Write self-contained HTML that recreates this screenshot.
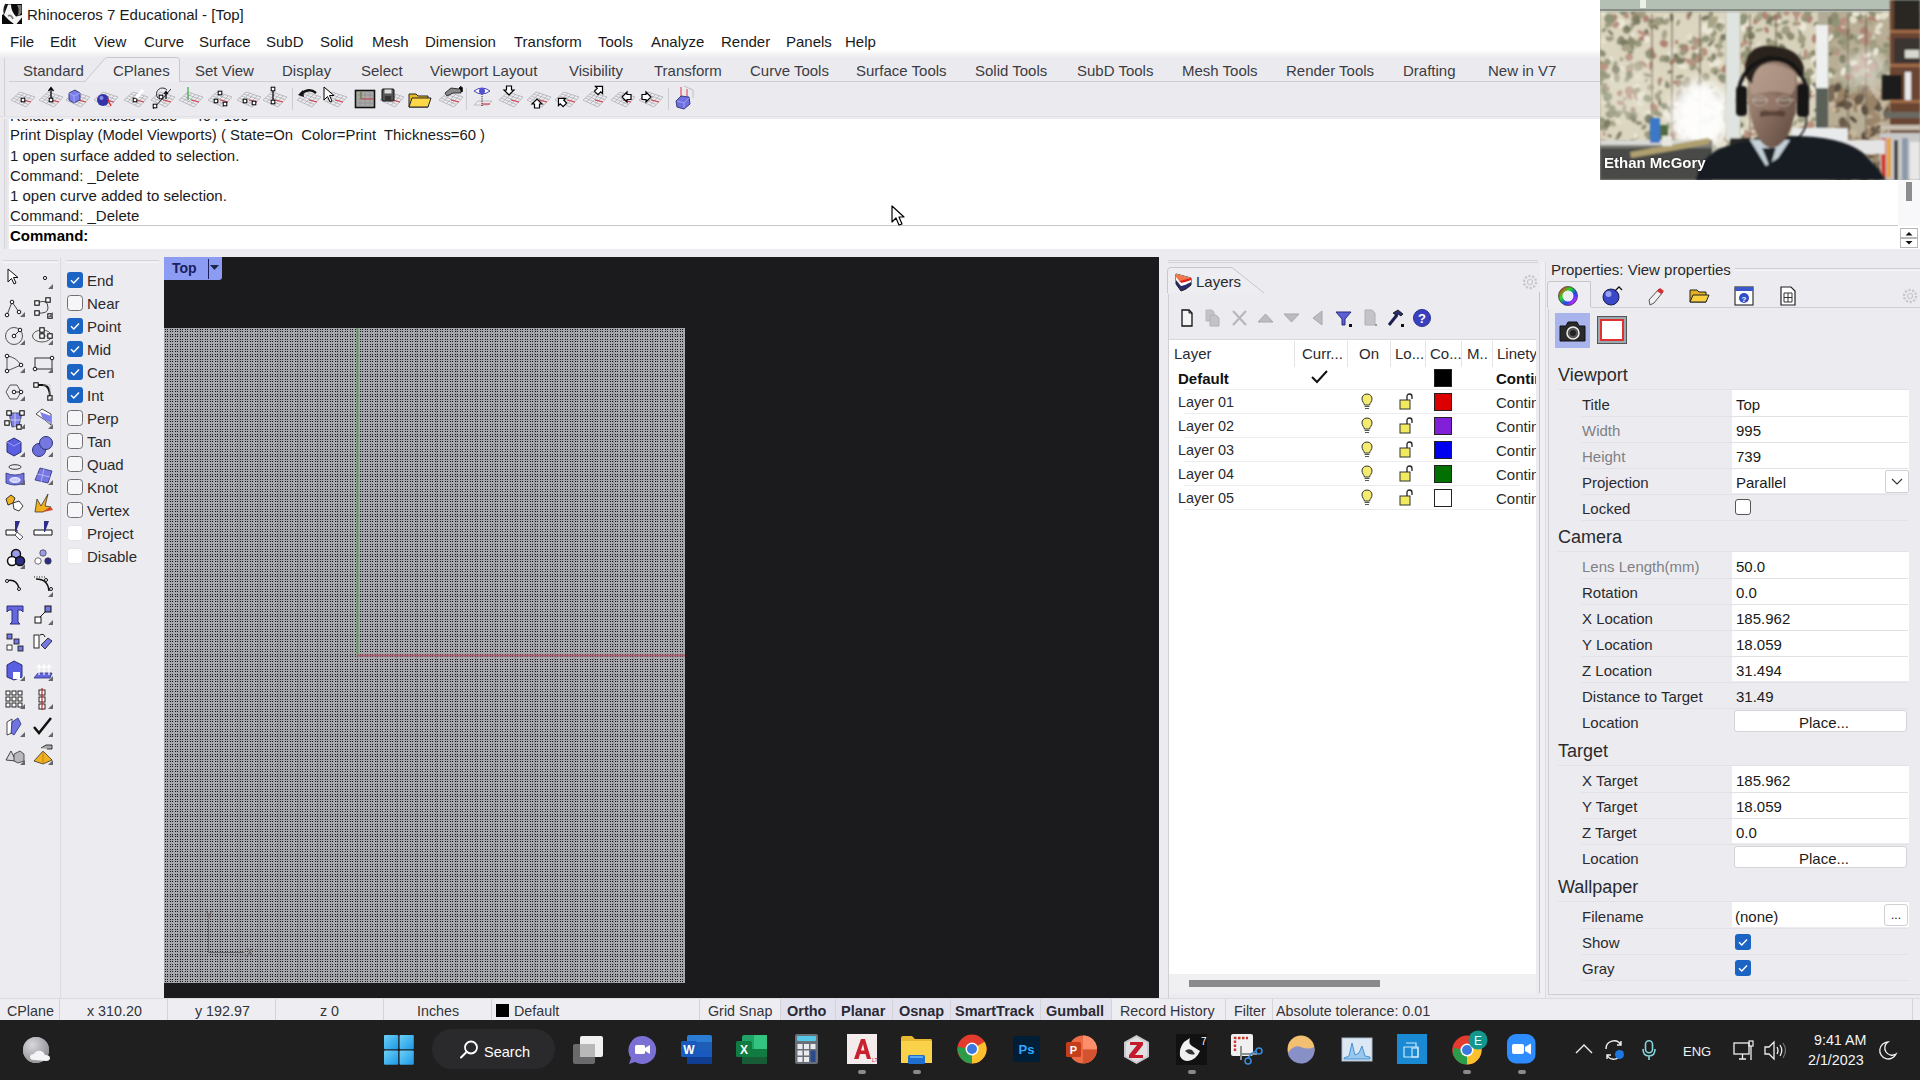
<!DOCTYPE html>
<html><head><meta charset="utf-8">
<style>
*{margin:0;padding:0;box-sizing:border-box}
html,body{width:1920px;height:1080px;overflow:hidden;background:#ececf0;font-family:"Liberation Sans",sans-serif;color:#1a1a1a}
.a{position:absolute}
.t{position:absolute;white-space:pre;line-height:1}
svg{position:absolute;overflow:visible}

</style></head><body>
<div class="a" style="left:0px;top:0px;width:1920px;height:54px;background:#ffffff"></div>
<svg style="left:2px;top:4px" width="20" height="20" viewBox="0 0 20 20"><rect x="0" y="0" width="20" height="20" fill="#0a0a0a"/><path d="M0 0H4Q1 4 2 10L0 11Z" fill="#fff"/><path d="M4 0Q1.5 4 2.5 10" stroke="#222" stroke-width="1.6" fill="none"/><path d="M2 11L6 0.5H9Q9 7 14 12.5L20 11V13.5L14.5 20H12Q6 16 2 11Z" fill="#f4f4f4"/><path d="M6 12Q9 10 11 15" stroke="#777" stroke-width="1.6" fill="none"/><path d="M15 1H19.5V9Q17 12 15.5 12Q18 6 15 1Z" fill="#7a7a7a"/></svg>
<div class="t" style="left:27px;top:7.3px;font-size:15px;color:#1a1a1a">Rhinoceros 7 Educational - [Top]</div>
<div class="t" style="left:10px;top:34.3px;font-size:15px;color:#1a1a1a">File</div>
<div class="t" style="left:50px;top:34.3px;font-size:15px;color:#1a1a1a">Edit</div>
<div class="t" style="left:94px;top:34.3px;font-size:15px;color:#1a1a1a">View</div>
<div class="t" style="left:144px;top:34.3px;font-size:15px;color:#1a1a1a">Curve</div>
<div class="t" style="left:199px;top:34.3px;font-size:15px;color:#1a1a1a">Surface</div>
<div class="t" style="left:266px;top:34.3px;font-size:15px;color:#1a1a1a">SubD</div>
<div class="t" style="left:320px;top:34.3px;font-size:15px;color:#1a1a1a">Solid</div>
<div class="t" style="left:372px;top:34.3px;font-size:15px;color:#1a1a1a">Mesh</div>
<div class="t" style="left:425px;top:34.3px;font-size:15px;color:#1a1a1a">Dimension</div>
<div class="t" style="left:514px;top:34.3px;font-size:15px;color:#1a1a1a">Transform</div>
<div class="t" style="left:598px;top:34.3px;font-size:15px;color:#1a1a1a">Tools</div>
<div class="t" style="left:651px;top:34.3px;font-size:15px;color:#1a1a1a">Analyze</div>
<div class="t" style="left:721px;top:34.3px;font-size:15px;color:#1a1a1a">Render</div>
<div class="t" style="left:786px;top:34.3px;font-size:15px;color:#1a1a1a">Panels</div>
<div class="t" style="left:845px;top:34.3px;font-size:15px;color:#1a1a1a">Help</div>
<div class="a" style="left:0px;top:54px;width:1920px;height:64px;background:#ebebef"></div>
<div class="a" style="left:0px;top:50px;width:1920px;height:8px;background:linear-gradient(#ffffff,#f6f6f8 40%,#ebebef)"></div>
<div class="a" style="left:0px;top:116px;width:1920px;height:2px;background:#e2e2e6"></div>
<div class="a" style="left:4px;top:58px;width:1px;height:58px;background:#d0d0d4"></div>
<div class="a" style="left:9px;top:81px;width:76px;height:1px;background:#cfcfd3"></div>
<div class="a" style="left:179px;top:81px;width:1741px;height:1px;background:#cfcfd3"></div>
<svg style="left:84px;top:57px" width="97" height="26" viewBox="0 0 97 26"><path d="M0.5 25 L21 1.5 Q22 0.5 24 0.5 L92 0.5 Q95 0.5 95.5 3 L95.5 25" fill="#eeeef2" stroke="#c9c9cd" stroke-width="1"/></svg>
<div class="t" style="left:23px;top:63.3px;font-size:15px;color:#3c3c44">Standard</div>
<div class="t" style="left:113px;top:63.3px;font-size:15px;color:#3c3c44">CPlanes</div>
<div class="t" style="left:195px;top:63.3px;font-size:15px;color:#3c3c44">Set View</div>
<div class="t" style="left:282px;top:63.3px;font-size:15px;color:#3c3c44">Display</div>
<div class="t" style="left:361px;top:63.3px;font-size:15px;color:#3c3c44">Select</div>
<div class="t" style="left:430px;top:63.3px;font-size:15px;color:#3c3c44">Viewport Layout</div>
<div class="t" style="left:569px;top:63.3px;font-size:15px;color:#3c3c44">Visibility</div>
<div class="t" style="left:654px;top:63.3px;font-size:15px;color:#3c3c44">Transform</div>
<div class="t" style="left:750px;top:63.3px;font-size:15px;color:#3c3c44">Curve Tools</div>
<div class="t" style="left:856px;top:63.3px;font-size:15px;color:#3c3c44">Surface Tools</div>
<div class="t" style="left:975px;top:63.3px;font-size:15px;color:#3c3c44">Solid Tools</div>
<div class="t" style="left:1077px;top:63.3px;font-size:15px;color:#3c3c44">SubD Tools</div>
<div class="t" style="left:1182px;top:63.3px;font-size:15px;color:#3c3c44">Mesh Tools</div>
<div class="t" style="left:1286px;top:63.3px;font-size:15px;color:#3c3c44">Render Tools</div>
<div class="t" style="left:1403px;top:63.3px;font-size:15px;color:#3c3c44">Drafting</div>
<div class="t" style="left:1488px;top:63.3px;font-size:15px;color:#3c3c44">New in V7</div>
<svg style="left:9px;top:84px" width="28" height="28" viewBox="0 0 28 28"><path d="M2.0 16.0L17.0 23.0M2.0 16.0L11.0 8.0M4.2 14.0L19.2 20.5M5.8 17.8L14.8 9.2M6.5 12.0L21.5 18.0M9.5 19.5L18.5 10.5M8.8 10.0L23.8 15.5M13.2 21.2L22.2 11.8M11.0 8.0L26.0 13.0M17.0 23.0L26.0 13.0" stroke="#b0b0b4" stroke-width="0.8" fill="none"/><path d="M14 16 L22 18" stroke="#d23a4a" stroke-width="1.2"/><rect x="12.2" y="14.2" width="3.6" height="3.6" fill="#fff" stroke="#000" stroke-width="1"/></svg>
<svg style="left:37px;top:84px" width="28" height="28" viewBox="0 0 28 28"><path d="M2.0 16.0L17.0 23.0M2.0 16.0L11.0 8.0M4.2 14.0L19.2 20.5M5.8 17.8L14.8 9.2M6.5 12.0L21.5 18.0M9.5 19.5L18.5 10.5M8.8 10.0L23.8 15.5M13.2 21.2L22.2 11.8M11.0 8.0L26.0 13.0M17.0 23.0L26.0 13.0" stroke="#b0b0b4" stroke-width="0.8" fill="none"/><path d="M14 16 L22 18" stroke="#d23a4a" stroke-width="1.2"/><rect x="12.2" y="14.2" width="3.6" height="3.6" fill="#fff" stroke="#000" stroke-width="1"/><path d="M14 14V4M11.5 7L14 3.5L16.5 7" stroke="#000" stroke-width="1.3" fill="none"/></svg>
<svg style="left:64px;top:84px" width="28" height="28" viewBox="0 0 28 28"><path d="M2.0 16.0L17.0 23.0M2.0 16.0L11.0 8.0M4.2 14.0L19.2 20.5M5.8 17.8L14.8 9.2M6.5 12.0L21.5 18.0M9.5 19.5L18.5 10.5M8.8 10.0L23.8 15.5M13.2 21.2L22.2 11.8M11.0 8.0L26.0 13.0M17.0 23.0L26.0 13.0" stroke="#b0b0b4" stroke-width="0.8" fill="none"/><path d="M14 16 L22 18" stroke="#d23a4a" stroke-width="1.2"/><path d="M5 9L11 6L16 9L16 16L10 19L5 16Z" fill="#7a7ee8" stroke="#3a3c80" stroke-width="1"/><path d="M5 9L10 12L16 9M10 12V19" stroke="#b0b4ff" stroke-width="0.8" fill="none"/></svg>
<svg style="left:92px;top:84px" width="28" height="28" viewBox="0 0 28 28"><path d="M2.0 16.0L17.0 23.0M2.0 16.0L11.0 8.0M4.2 14.0L19.2 20.5M5.8 17.8L14.8 9.2M6.5 12.0L21.5 18.0M9.5 19.5L18.5 10.5M8.8 10.0L23.8 15.5M13.2 21.2L22.2 11.8M11.0 8.0L26.0 13.0M17.0 23.0L26.0 13.0" stroke="#b0b0b4" stroke-width="0.8" fill="none"/><path d="M14 16 L22 18" stroke="#d23a4a" stroke-width="1.2"/><circle cx="11" cy="16" r="6" fill="#3434a8"/><circle cx="9.5" cy="14" r="2" fill="#8a8ae8"/><path d="M15 14 L19 22" stroke="#d22" stroke-width="1.2"/></svg>
<svg style="left:122px;top:84px" width="28" height="28" viewBox="0 0 28 28"><path d="M2.0 16.0L17.0 23.0M2.0 16.0L11.0 8.0M4.2 14.0L19.2 20.5M5.8 17.8L14.8 9.2M6.5 12.0L21.5 18.0M9.5 19.5L18.5 10.5M8.8 10.0L23.8 15.5M13.2 21.2L22.2 11.8M11.0 8.0L26.0 13.0M17.0 23.0L26.0 13.0" stroke="#b0b0b4" stroke-width="0.8" fill="none"/><path d="M14 16 L22 18" stroke="#d23a4a" stroke-width="1.2"/><rect x="11.2" y="14.2" width="3.6" height="3.6" fill="#fff" stroke="#000" stroke-width="1"/><path d="M14 14 L21 6" stroke="#fff" stroke-width="3"/></svg>
<svg style="left:149px;top:84px" width="28" height="28" viewBox="0 0 28 28"><path d="M2.0 16.0L17.0 23.0M2.0 16.0L11.0 8.0M4.2 14.0L19.2 20.5M5.8 17.8L14.8 9.2M6.5 12.0L21.5 18.0M9.5 19.5L18.5 10.5M8.8 10.0L23.8 15.5M13.2 21.2L22.2 11.8M11.0 8.0L26.0 13.0M17.0 23.0L26.0 13.0" stroke="#b0b0b4" stroke-width="0.8" fill="none"/><path d="M14 16 L22 18" stroke="#d23a4a" stroke-width="1.2"/><path d="M9 14 A6 6 0 0 1 18 6" stroke="#333" stroke-width="1" fill="none"/><path d="M4 25L22 5" stroke="#333" stroke-width="1"/><rect x="4.2" y="20.2" width="3.6" height="3.6" fill="#fff" stroke="#000" stroke-width="1"/><rect x="10.2" y="11.2" width="3.6" height="3.6" fill="#fff" stroke="#000" stroke-width="1"/><path d="M17 15V8M15 10L17 7.5L19 10" stroke="#000" stroke-width="1.2" fill="none"/></svg>
<svg style="left:177px;top:84px" width="28" height="28" viewBox="0 0 28 28"><path d="M2.0 16.0L17.0 23.0M2.0 16.0L11.0 8.0M4.2 14.0L19.2 20.5M5.8 17.8L14.8 9.2M6.5 12.0L21.5 18.0M9.5 19.5L18.5 10.5M8.8 10.0L23.8 15.5M13.2 21.2L22.2 11.8M11.0 8.0L26.0 13.0M17.0 23.0L26.0 13.0" stroke="#b0b0b4" stroke-width="0.8" fill="none"/><path d="M14 16 L22 18" stroke="#d23a4a" stroke-width="1.2"/><path d="M11 3V16" stroke="#3aa83a" stroke-width="1.2"/></svg>
<svg style="left:206px;top:84px" width="28" height="28" viewBox="0 0 28 28"><path d="M2.0 16.0L17.0 23.0M2.0 16.0L11.0 8.0M4.2 14.0L19.2 20.5M5.8 17.8L14.8 9.2M6.5 12.0L21.5 18.0M9.5 19.5L18.5 10.5M8.8 10.0L23.8 15.5M13.2 21.2L22.2 11.8M11.0 8.0L26.0 13.0M17.0 23.0L26.0 13.0" stroke="#b0b0b4" stroke-width="0.8" fill="none"/><path d="M14 16 L22 18" stroke="#d23a4a" stroke-width="1.2"/><rect x="12.2" y="7.2" width="3.6" height="3.6" fill="#fff" stroke="#000" stroke-width="1"/><rect x="8.2" y="15.2" width="3.6" height="3.6" fill="#fff" stroke="#000" stroke-width="1"/><rect x="17.2" y="18.2" width="3.6" height="3.6" fill="#fff" stroke="#000" stroke-width="1"/></svg>
<svg style="left:235px;top:84px" width="28" height="28" viewBox="0 0 28 28"><path d="M2.0 16.0L17.0 23.0M2.0 16.0L11.0 8.0M4.2 14.0L19.2 20.5M5.8 17.8L14.8 9.2M6.5 12.0L21.5 18.0M9.5 19.5L18.5 10.5M8.8 10.0L23.8 15.5M13.2 21.2L22.2 11.8M11.0 8.0L26.0 13.0M17.0 23.0L26.0 13.0" stroke="#b0b0b4" stroke-width="0.8" fill="none"/><path d="M14 16 L22 18" stroke="#d23a4a" stroke-width="1.2"/><rect x="8.2" y="15.2" width="3.6" height="3.6" fill="#fff" stroke="#000" stroke-width="1"/><rect x="17.2" y="17.2" width="3.6" height="3.6" fill="#fff" stroke="#000" stroke-width="1"/></svg>
<svg style="left:261px;top:84px" width="28" height="28" viewBox="0 0 28 28"><path d="M2.0 16.0L17.0 23.0M2.0 16.0L11.0 8.0M4.2 14.0L19.2 20.5M5.8 17.8L14.8 9.2M6.5 12.0L21.5 18.0M9.5 19.5L18.5 10.5M8.8 10.0L23.8 15.5M13.2 21.2L22.2 11.8M11.0 8.0L26.0 13.0M17.0 23.0L26.0 13.0" stroke="#b0b0b4" stroke-width="0.8" fill="none"/><path d="M14 16 L22 18" stroke="#d23a4a" stroke-width="1.2"/><rect x="10.2" y="3.2" width="3.6" height="3.6" fill="#fff" stroke="#000" stroke-width="1"/><rect x="10.2" y="16.2" width="3.6" height="3.6" fill="#fff" stroke="#000" stroke-width="1"/><path d="M12 7V16" stroke="#000" stroke-width="1.2"/></svg>
<svg style="left:295px;top:84px" width="28" height="28" viewBox="0 0 28 28"><path d="M2.0 16.0L17.0 23.0M2.0 16.0L11.0 8.0M4.2 14.0L19.2 20.5M5.8 17.8L14.8 9.2M6.5 12.0L21.5 18.0M9.5 19.5L18.5 10.5M8.8 10.0L23.8 15.5M13.2 21.2L22.2 11.8M11.0 8.0L26.0 13.0M17.0 23.0L26.0 13.0" stroke="#b0b0b4" stroke-width="0.8" fill="none"/><path d="M14 16 L22 18" stroke="#d23a4a" stroke-width="1.2"/><path d="M21 9 Q14 3 6 10" stroke="#111" stroke-width="2.5" fill="none"/><path d="M3 11L8 6L9 13Z" fill="#111"/></svg>
<svg style="left:321px;top:84px" width="28" height="28" viewBox="0 0 28 28"><path d="M2.0 16.0L17.0 23.0M2.0 16.0L11.0 8.0M4.2 14.0L19.2 20.5M5.8 17.8L14.8 9.2M6.5 12.0L21.5 18.0M9.5 19.5L18.5 10.5M8.8 10.0L23.8 15.5M13.2 21.2L22.2 11.8M11.0 8.0L26.0 13.0M17.0 23.0L26.0 13.0" stroke="#b0b0b4" stroke-width="0.8" fill="none"/><path d="M14 16 L22 18" stroke="#d23a4a" stroke-width="1.2"/><path d="M3 3L3 16L6.5 12.5L9 18L11 17L8.5 11.5L13 11.5Z" fill="#fff" stroke="#000" stroke-width="1"/></svg>
<svg style="left:351px;top:84px" width="28" height="28" viewBox="0 0 28 28"><rect x="4.5" y="6.5" width="19" height="17" fill="#a8aaa8" stroke="#111" stroke-width="1.6"/><path d="M9 7V23M14 7V23M19 7V23M5 11H23M5 15H23M5 19H23" stroke="#8c8e8c" stroke-width="0.7"/><path d="M10 7V15M10 15H23" stroke="#d23a4a" stroke-width="1"/><path d="M10 7V15" stroke="#3aa83a" stroke-width="1"/></svg>
<svg style="left:378px;top:84px" width="28" height="28" viewBox="0 0 28 28"><path d="M2.0 16.0L17.0 23.0M2.0 16.0L11.0 8.0M4.2 14.0L19.2 20.5M5.8 17.8L14.8 9.2M6.5 12.0L21.5 18.0M9.5 19.5L18.5 10.5M8.8 10.0L23.8 15.5M13.2 21.2L22.2 11.8M11.0 8.0L26.0 13.0M17.0 23.0L26.0 13.0" stroke="#b0b0b4" stroke-width="0.8" fill="none"/><path d="M14 16 L22 18" stroke="#d23a4a" stroke-width="1.2"/><rect x="4" y="5" width="12" height="12" rx="1" fill="#555" stroke="#111"/><rect x="6.5" y="5.5" width="7" height="4" fill="#ddd"/><rect x="7" y="12" width="6" height="4" fill="#333"/></svg>
<svg style="left:406px;top:84px" width="28" height="28" viewBox="0 0 28 28"><path d="M3 10H10L12 12H22V23H3Z" fill="#e8b82a" stroke="#222" stroke-width="1"/><path d="M3 23L6 14H25L22 23Z" fill="#ffd84a" stroke="#222" stroke-width="1"/></svg>
<svg style="left:437px;top:84px" width="28" height="28" viewBox="0 0 28 28"><path d="M2.0 16.0L17.0 23.0M2.0 16.0L11.0 8.0M4.2 14.0L19.2 20.5M5.8 17.8L14.8 9.2M6.5 12.0L21.5 18.0M9.5 19.5L18.5 10.5M8.8 10.0L23.8 15.5M13.2 21.2L22.2 11.8M11.0 8.0L26.0 13.0M17.0 23.0L26.0 13.0" stroke="#b0b0b4" stroke-width="0.8" fill="none"/><path d="M14 16 L22 18" stroke="#d23a4a" stroke-width="1.2"/><path d="M8 9L14 4L22 5L24 2V9L16 9L10 12Z" fill="#888" stroke="#111" stroke-width="0.8"/><path d="M22 4L25 4V8" stroke="#000" stroke-width="1.5"/></svg>
<svg style="left:468px;top:84px" width="28" height="28" viewBox="0 0 28 28"><path d="M6 21L10 17H24L20 21Z" stroke="#b4b4b8" fill="none" stroke-width="0.8"/><path d="M14 10V22" stroke="#000" stroke-width="1" stroke-dasharray="1 1.2"/><path d="M14 20H22" stroke="#d23a4a" stroke-width="1.2"/><path d="M6 7Q14 1 22 7Q14 13 6 7Z" fill="#fff" stroke="#4848b8" stroke-width="1"/><circle cx="14" cy="7" r="3" fill="#5050d0"/></svg>
<svg style="left:497px;top:84px" width="28" height="28" viewBox="0 0 28 28"><path d="M2.0 16.0L17.0 23.0M2.0 16.0L11.0 8.0M4.2 14.0L19.2 20.5M5.8 17.8L14.8 9.2M6.5 12.0L21.5 18.0M9.5 19.5L18.5 10.5M8.8 10.0L23.8 15.5M13.2 21.2L22.2 11.8M11.0 8.0L26.0 13.0M17.0 23.0L26.0 13.0" stroke="#b0b0b4" stroke-width="0.8" fill="none"/><path d="M14 16 L22 18" stroke="#d23a4a" stroke-width="1.2"/><g transform="translate(12 6) rotate(180)"><path d="M-2.5 4V0H-5L0 -5L5 0H2.5V4Z" fill="#fff" stroke="#000" stroke-width="1.2"/></g></svg>
<svg style="left:525px;top:84px" width="28" height="28" viewBox="0 0 28 28"><path d="M2.0 16.0L17.0 23.0M2.0 16.0L11.0 8.0M4.2 14.0L19.2 20.5M5.8 17.8L14.8 9.2M6.5 12.0L21.5 18.0M9.5 19.5L18.5 10.5M8.8 10.0L23.8 15.5M13.2 21.2L22.2 11.8M11.0 8.0L26.0 13.0M17.0 23.0L26.0 13.0" stroke="#b0b0b4" stroke-width="0.8" fill="none"/><path d="M14 16 L22 18" stroke="#d23a4a" stroke-width="1.2"/><g transform="translate(12 20) rotate(0)"><path d="M-2.5 4V0H-5L0 -5L5 0H2.5V4Z" fill="#fff" stroke="#000" stroke-width="1.2"/></g></svg>
<svg style="left:553px;top:84px" width="28" height="28" viewBox="0 0 28 28"><path d="M2.0 16.0L17.0 23.0M2.0 16.0L11.0 8.0M4.2 14.0L19.2 20.5M5.8 17.8L14.8 9.2M6.5 12.0L21.5 18.0M9.5 19.5L18.5 10.5M8.8 10.0L23.8 15.5M13.2 21.2L22.2 11.8M11.0 8.0L26.0 13.0M17.0 23.0L26.0 13.0" stroke="#b0b0b4" stroke-width="0.8" fill="none"/><path d="M14 16 L22 18" stroke="#d23a4a" stroke-width="1.2"/><g transform="translate(9 18) rotate(-45)"><path d="M-2.5 4V0H-5L0 -5L5 0H2.5V4Z" fill="#fff" stroke="#000" stroke-width="1.2"/></g></svg>
<svg style="left:581px;top:84px" width="28" height="28" viewBox="0 0 28 28"><path d="M2.0 16.0L17.0 23.0M2.0 16.0L11.0 8.0M4.2 14.0L19.2 20.5M5.8 17.8L14.8 9.2M6.5 12.0L21.5 18.0M9.5 19.5L18.5 10.5M8.8 10.0L23.8 15.5M13.2 21.2L22.2 11.8M11.0 8.0L26.0 13.0M17.0 23.0L26.0 13.0" stroke="#b0b0b4" stroke-width="0.8" fill="none"/><path d="M14 16 L22 18" stroke="#d23a4a" stroke-width="1.2"/><g transform="translate(18 6) rotate(45)"><path d="M-2.5 4V0H-5L0 -5L5 0H2.5V4Z" fill="#fff" stroke="#000" stroke-width="1.2"/></g></svg>
<svg style="left:609px;top:84px" width="28" height="28" viewBox="0 0 28 28"><path d="M2.0 16.0L17.0 23.0M2.0 16.0L11.0 8.0M4.2 14.0L19.2 20.5M5.8 17.8L14.8 9.2M6.5 12.0L21.5 18.0M9.5 19.5L18.5 10.5M8.8 10.0L23.8 15.5M13.2 21.2L22.2 11.8M11.0 8.0L26.0 13.0M17.0 23.0L26.0 13.0" stroke="#b0b0b4" stroke-width="0.8" fill="none"/><path d="M14 16 L22 18" stroke="#d23a4a" stroke-width="1.2"/><g transform="translate(18 13) rotate(-90)"><path d="M-2.5 4V0H-5L0 -5L5 0H2.5V4Z" fill="#fff" stroke="#000" stroke-width="1.2"/></g></svg>
<svg style="left:637px;top:84px" width="28" height="28" viewBox="0 0 28 28"><path d="M2.0 16.0L17.0 23.0M2.0 16.0L11.0 8.0M4.2 14.0L19.2 20.5M5.8 17.8L14.8 9.2M6.5 12.0L21.5 18.0M9.5 19.5L18.5 10.5M8.8 10.0L23.8 15.5M13.2 21.2L22.2 11.8M11.0 8.0L26.0 13.0M17.0 23.0L26.0 13.0" stroke="#b0b0b4" stroke-width="0.8" fill="none"/><path d="M14 16 L22 18" stroke="#d23a4a" stroke-width="1.2"/><g transform="translate(9 13) rotate(90)"><path d="M-2.5 4V0H-5L0 -5L5 0H2.5V4Z" fill="#fff" stroke="#000" stroke-width="1.2"/></g></svg>
<svg style="left:671px;top:84px" width="28" height="28" viewBox="0 0 28 28"><path d="M10 3V14M16 5V12" stroke="#d23a4a" stroke-width="1"/><path d="M13 2L22 6V14" stroke="#b4b4b8" stroke-width="0.8" fill="none"/><path d="M5 17L10 12L18 13L19 20L13 25L6 23Z" fill="#7070e0" stroke="#3a3c80" stroke-width="1"/><path d="M6 17L13 19L18 14M13 19V24" stroke="#a8acff" stroke-width="0.8" fill="none"/></svg>
<div class="a" style="left:292px;top:88px;width:1px;height:22px;background:#cdcdd1"></div>
<div class="a" style="left:466px;top:88px;width:1px;height:22px;background:#cdcdd1"></div>
<div class="a" style="left:668px;top:88px;width:1px;height:22px;background:#cdcdd1"></div>
<div class="a" style="left:0px;top:117px;width:1920px;height:132px;background:#ebebef"></div>
<div class="a" style="left:9px;top:119px;width:1911px;height:130px;background:#ffffff"></div>
<div class="a" style="left:4px;top:119px;width:1px;height:130px;background:#d4d4d8"></div>
<div class="a" style="left:6px;top:119px;width:1px;height:130px;background:#e0e0e4"></div>
<div class="a" style="left:9px;top:119px;width:400px;height:3px;overflow:hidden"><div class="t" style="left:1px;top:-10.7px;font-size:15px;color:#1a1a1a">Relative Thickness Scale = 40 / 100</div>
</div>
<div class="t" style="left:10px;top:128.4px;font-size:14.85px;color:#1a1a1a">Print Display (Model Viewports) ( State=On  Color=Print  Thickness=60 )</div>
<div class="t" style="left:10px;top:148.3px;font-size:15px;color:#1a1a1a">1 open surface added to selection.</div>
<div class="t" style="left:10px;top:168.3px;font-size:15px;color:#1a1a1a">Command: _Delete</div>
<div class="t" style="left:10px;top:188.3px;font-size:15px;color:#1a1a1a">1 open curve added to selection.</div>
<div class="t" style="left:10px;top:208.3px;font-size:15px;color:#1a1a1a">Command: _Delete</div>
<div class="a" style="left:9px;top:225px;width:1889px;height:1px;background:#c8c8cc"></div>
<div class="t" style="left:10px;top:228.3px;font-size:15px;font-weight:bold;color:#000">Command:</div>
<div class="a" style="left:1898px;top:180px;width:22px;height:46px;background:#f8f8fa"></div>
<div class="a" style="left:1906px;top:182px;width:6px;height:19px;background:#8c8c8c"></div>
<div class="a" style="left:1900px;top:228px;width:18px;height:10px;background:#fff;border:1px solid #b8b8bc"></div>
<div class="a" style="left:1900px;top:238px;width:18px;height:10px;background:#fff;border:1px solid #b8b8bc"></div>
<svg style="left:1903px;top:229px" width="12" height="18" viewBox="0 0 12 18"><path d="M2.5 6.5L6 3L9.5 6.5Z" fill="#111"/><path d="M2.5 12L6 15.5L9.5 12Z" fill="#111"/></svg>
<svg style="left:891px;top:205px" width="14" height="22" viewBox="0 0 14 22"><path d="M1 1V17L5 13L8 20L11 19L8 12H13Z" fill="#fff" stroke="#000" stroke-width="1.2" stroke-linejoin="round"/></svg>
<div class="a" style="left:0px;top:249px;width:1920px;height:749px;background:#ececf0"></div>
<div class="a" style="left:3px;top:260px;width:55px;height:1px;background:#d6d6da"></div>
<div class="a" style="left:3px;top:262px;width:55px;height:1px;background:#f8f8fa"></div>
<div class="a" style="left:66px;top:260px;width:93px;height:1px;background:#d6d6da"></div>
<div class="a" style="left:66px;top:262px;width:93px;height:1px;background:#f8f8fa"></div>
<div class="a" style="left:60px;top:258px;width:1px;height:740px;background:#dcdce0"></div>
<svg style="left:3px;top:266px" width="24" height="26" viewBox="0 0 24 26"><path d="M5 3V16L8.5 12.5L11 18L13 17L10.5 11.5H15Z" fill="#fff" stroke="#111" stroke-width="1"/></svg>
<svg style="left:31px;top:266px" width="24" height="26" viewBox="0 0 24 26"><circle cx="14" cy="12" r="1.6" fill="#fff" stroke="#111" stroke-width="1"/><path d="M22 23L22 18L17 23Z" fill="#66666a"/></svg>
<svg style="left:3px;top:294px" width="24" height="26" viewBox="0 0 24 26"><path d="M4 21L9 8L16 18" stroke="#333" stroke-width="0.9" fill="none"/><circle cx="4" cy="21" r="1.8" fill="#fff" stroke="#111" stroke-width="1"/><circle cx="9" cy="8" r="1.8" fill="#fff" stroke="#111" stroke-width="1"/><circle cx="16" cy="18" r="1.8" fill="#fff" stroke="#111" stroke-width="1"/><path d="M22 23L22 18L17 23Z" fill="#66666a"/></svg>
<svg style="left:31px;top:294px" width="24" height="26" viewBox="0 0 24 26"><path d="M6 9Q17 4 17 14Q17 20 6 19" stroke="#333" stroke-width="0.9" fill="none"/><rect x="3.8" y="6.8" width="4.4" height="4.4" fill="#fff" stroke="#111" stroke-width="1.1"/><rect x="14.8" y="3.8" width="4.4" height="4.4" fill="#fff" stroke="#111" stroke-width="1.1"/><rect x="3.8" y="16.8" width="4.4" height="4.4" fill="#fff" stroke="#111" stroke-width="1.1"/><rect x="16.8" y="19.8" width="4.4" height="4.4" fill="#fff" stroke="#111" stroke-width="1.1"/><path d="M22 23L22 18L17 23Z" fill="#66666a"/></svg>
<svg style="left:3px;top:322px" width="24" height="26" viewBox="0 0 24 26"><circle cx="11" cy="14" r="8.5" stroke="#444" stroke-width="0.9" fill="none"/><path d="M11 14L17 8" stroke="#333"/><circle cx="11" cy="14" r="1.8" fill="#fff" stroke="#111" stroke-width="1"/><circle cx="17" cy="8" r="1.8" fill="#fff" stroke="#111" stroke-width="1"/><path d="M22 23L22 18L17 23Z" fill="#66666a"/></svg>
<svg style="left:31px;top:322px" width="24" height="26" viewBox="0 0 24 26"><ellipse cx="11" cy="14" rx="9.5" ry="6" stroke="#444" stroke-width="0.9" fill="none"/><path d="M11 14H19M11 8V14" stroke="#555" stroke-width="0.7"/><rect x="8.8" y="5.8" width="4.4" height="4.4" fill="#fff" stroke="#111" stroke-width="1.1"/><rect x="8.8" y="11.8" width="4.4" height="4.4" fill="#fff" stroke="#111" stroke-width="1.1"/><rect x="16.8" y="11.8" width="4.4" height="4.4" fill="#fff" stroke="#111" stroke-width="1.1"/><path d="M22 23L22 18L17 23Z" fill="#66666a"/></svg>
<svg style="left:3px;top:350px" width="24" height="26" viewBox="0 0 24 26"><path d="M4 6Q13 7 18 15L4 21Z" stroke="#444" stroke-width="0.9" fill="none"/><circle cx="4" cy="6" r="1.8" fill="#fff" stroke="#111" stroke-width="1"/><circle cx="18" cy="15" r="1.8" fill="#fff" stroke="#111" stroke-width="1"/><circle cx="4" cy="21" r="1.8" fill="#fff" stroke="#111" stroke-width="1"/><path d="M22 23L22 18L17 23Z" fill="#66666a"/></svg>
<svg style="left:31px;top:350px" width="24" height="26" viewBox="0 0 24 26"><rect x="4" y="8" width="17" height="11" stroke="#333" stroke-width="1" fill="none"/><circle cx="4" cy="19" r="1.8" fill="#fff" stroke="#111" stroke-width="1"/><circle cx="21" cy="8" r="1.8" fill="#fff" stroke="#111" stroke-width="1"/><path d="M22 23L22 18L17 23Z" fill="#66666a"/></svg>
<svg style="left:3px;top:378px" width="24" height="26" viewBox="0 0 24 26"><path d="M7 7H14L18 14L14 21H7L3 14Z" stroke="#444" stroke-width="0.9" fill="none"/><path d="M11 14H18" stroke="#333"/><circle cx="11" cy="14" r="1.8" fill="#fff" stroke="#111" stroke-width="1"/><circle cx="18" cy="14" r="1.8" fill="#fff" stroke="#111" stroke-width="1"/><path d="M22 23L22 18L17 23Z" fill="#66666a"/></svg>
<svg style="left:31px;top:378px" width="24" height="26" viewBox="0 0 24 26"><path d="M5 7H12Q19 7 19 20" stroke="#111" stroke-width="2" fill="none"/><path d="M12 7H19V20" stroke="#bbb" stroke-width="0.7" fill="none"/><rect x="2.8" y="4.8" width="4.4" height="4.4" fill="#fff" stroke="#111" stroke-width="1.1"/><rect x="16.8" y="17.8" width="4.4" height="4.4" fill="#fff" stroke="#111" stroke-width="1.1"/><path d="M22 23L22 18L17 23Z" fill="#66666a"/></svg>
<svg style="left:3px;top:406px" width="24" height="26" viewBox="0 0 24 26"><path d="M6 7L19 7L16 20L9 21Z" fill="#7c80e8" stroke="#333" stroke-width="0.8"/><path d="M12 7L12 21M7 14L18 14" stroke="#dde" stroke-width="0.8"/><rect x="3.8" y="4.8" width="4.4" height="4.4" fill="#fff" stroke="#111" stroke-width="1.1"/><rect x="16.8" y="4.8" width="4.4" height="4.4" fill="#fff" stroke="#111" stroke-width="1.1"/><rect x="1.7999999999999998" y="14.8" width="4.4" height="4.4" fill="#fff" stroke="#111" stroke-width="1.1"/><rect x="13.8" y="18.8" width="4.4" height="4.4" fill="#fff" stroke="#111" stroke-width="1.1"/><path d="M22 23L22 18L17 23Z" fill="#66666a"/></svg>
<svg style="left:31px;top:406px" width="24" height="26" viewBox="0 0 24 26"><path d="M5 8L11 3L20 8L20 19L14 14Z" fill="#fff" stroke="#222" stroke-width="0.8"/><path d="M9 6L20 10L20 17L12 13Z" fill="#7c80e8"/><path d="M22 23L22 18L17 23Z" fill="#66666a"/></svg>
<svg style="left:3px;top:434px" width="24" height="26" viewBox="0 0 24 26"><path d="M4 8L11 4L18 8V18L11 22L4 18Z" fill="#5a5ee0" stroke="#2c2e78" stroke-width="1"/><path d="M4 8L11 12L18 8" stroke="#9ca0ff" stroke-width="1" fill="none"/><path d="M22 23L22 18L17 23Z" fill="#66666a"/></svg>
<svg style="left:31px;top:434px" width="24" height="26" viewBox="0 0 24 26"><circle cx="8" cy="16" r="6.5" fill="#6a6ed8" stroke="#2c2e78"/><circle cx="15" cy="9" r="6.5" fill="#7478e0" stroke="#2c2e78"/><path d="M22 23L22 18L17 23Z" fill="#66666a"/></svg>
<svg style="left:3px;top:462px" width="24" height="26" viewBox="0 0 24 26"><ellipse cx="12" cy="5" rx="6" ry="2.3" fill="none" stroke="#222" stroke-width="0.9"/><path d="M3 11Q12 15 21 11V21Q12 25 3 21Z" fill="#7276dc" stroke="#2c2e78" stroke-width="0.8"/><ellipse cx="12" cy="18" rx="5" ry="2.3" fill="#c8caff" stroke="#fff"/><path d="M22 23L22 18L17 23Z" fill="#66666a"/></svg>
<svg style="left:31px;top:462px" width="24" height="26" viewBox="0 0 24 26"><path d="M4 18L9 6L21 9L17 21Z" fill="#7478e0" stroke="#2c2e78" stroke-width="0.8"/><path d="M6 12L19 15M13 7L10 20" stroke="#c0c2ff" stroke-width="0.8"/><path d="M22 23L22 18L17 23Z" fill="#66666a"/></svg>
<svg style="left:3px;top:490px" width="24" height="26" viewBox="0 0 24 26"><path d="M3 9L8 5L12 8L10 13L5 15Z" fill="#f0b020" stroke="#222" stroke-width="0.9"/><path d="M10 13L16 11L20 16L16 21L11 19Z" fill="#fff" stroke="#222" stroke-width="0.9"/></svg>
<svg style="left:31px;top:490px" width="24" height="26" viewBox="0 0 24 26"><path d="M4 22L6 9L10 16L17 4L14 16L20 17L12 22Z" fill="#f0b020" stroke="#222" stroke-width="0.7"/><path d="M12 22L20 17L22 20Z" fill="#e04020"/></svg>
<svg style="left:3px;top:518px" width="24" height="26" viewBox="0 0 24 26"><path d="M3 12H14V17H3Z" fill="#fff" stroke="#111"/><path d="M12 3H17L13 14H12Z" fill="#2c2e88"/><path d="M14 14L20 19L17 22L12 17Z" fill="#fff" stroke="#333" stroke-width="0.8"/></svg>
<svg style="left:31px;top:518px" width="24" height="26" viewBox="0 0 24 26"><path d="M3 12H21V17H3Z" fill="#fff" stroke="#111"/><path d="M13 3H18L14 14H13Z" fill="#2c2e88"/></svg>
<svg style="left:3px;top:546px" width="24" height="26" viewBox="0 0 24 26"><circle cx="13" cy="8" r="4.5" fill="#9a9ee8" stroke="#111" stroke-width="1.5"/><circle cx="9" cy="15" r="4.5" fill="#fff" stroke="#111" stroke-width="1.5"/><circle cx="17" cy="15" r="4.5" fill="#2c2e88" stroke="#111" stroke-width="1.5"/><path d="M22 23L22 18L17 23Z" fill="#66666a"/></svg>
<svg style="left:31px;top:546px" width="24" height="26" viewBox="0 0 24 26"><circle cx="12" cy="7" r="3.2" fill="#9a9ee8" stroke="#333" stroke-width="0.7"/><circle cx="7" cy="15" r="3.2" fill="#fff" stroke="#333" stroke-width="0.7"/><circle cx="17" cy="15" r="3.2" fill="#2c2e88" stroke="#333" stroke-width="0.7"/></svg>
<svg style="left:3px;top:574px" width="24" height="26" viewBox="0 0 24 26"><path d="M3 7Q13 4 16 14" stroke="#111" stroke-width="1.5" fill="none"/><circle cx="4" cy="7" r="1.5" fill="#fff" stroke="#111" stroke-width="1"/><circle cx="16" cy="15" r="1.5" fill="#fff" stroke="#111" stroke-width="1"/></svg>
<svg style="left:31px;top:574px" width="24" height="26" viewBox="0 0 24 26"><path d="M5 5Q17 5 18 17" stroke="#111" stroke-width="1.5" fill="none"/><path d="M3 3H15" stroke="#111" stroke-dasharray="1 1.5"/><circle cx="15" cy="6" r="1.5" fill="#fff" stroke="#111" stroke-width="1"/><circle cx="20" cy="15" r="1.5" fill="#fff" stroke="#111" stroke-width="1"/><path d="M22 23L22 18L17 23Z" fill="#66666a"/></svg>
<svg style="left:3px;top:602px" width="24" height="26" viewBox="0 0 24 26"><path d="M4 4H20V10L18 8H15V20L17 22H7L9 20V8H6L4 10Z" fill="#6468e0" stroke="#2c2e78" stroke-width="1"/></svg>
<svg style="left:31px;top:602px" width="24" height="26" viewBox="0 0 24 26"><rect x="4" y="15" width="6" height="6" fill="#fff" stroke="#111"/><rect x="14" y="4" width="6" height="6" fill="#7478e0" stroke="#111"/><path d="M9 15L14 10" stroke="#111"/><path d="M22 23L22 18L17 23Z" fill="#66666a"/></svg>
<svg style="left:3px;top:630px" width="24" height="26" viewBox="0 0 24 26"><rect x="4" y="4" width="5" height="5" fill="#7478e0" stroke="#111" stroke-width="0.8"/><rect x="11" y="9" width="5" height="5" fill="#7478e0" stroke="#111" stroke-width="0.8"/><rect x="4" y="15" width="5" height="5" fill="#fff" stroke="#111" stroke-width="0.8"/><rect x="15" y="16" width="5" height="5" fill="#7478e0" stroke="#111" stroke-width="0.8"/></svg>
<svg style="left:31px;top:630px" width="24" height="26" viewBox="0 0 24 26"><rect x="3" y="5" width="5" height="13" fill="#fff" stroke="#111" stroke-width="0.9"/><path d="M10 15L17 8L21 11L14 19Z" fill="#7478e0" stroke="#111" stroke-width="0.8"/><path d="M9 5Q13 3 14 7" stroke="#111" fill="none"/></svg>
<svg style="left:3px;top:658px" width="24" height="26" viewBox="0 0 24 26"><path d="M4 7L11 3L19 7V19L11 22L4 19Z" fill="#5a5ee0" stroke="#2c2e78"/><rect x="10" y="14" width="7" height="7" fill="#fff"/><path d="M22 23L22 18L17 23Z" fill="#66666a"/></svg>
<svg style="left:31px;top:658px" width="24" height="26" viewBox="0 0 24 26"><path d="M3 20L7 15H21L19 20Z" fill="#6468e0" stroke="#2c2e78" stroke-width="0.8"/><path d="M8 8V17M13 8V17M18 8V17M6 10L8 7L10 10M11 10L13 7L15 10M16 10L18 7L20 10" stroke="#fff" stroke-width="1.2" fill="none"/><path d="M22 23L22 18L17 23Z" fill="#66666a"/></svg>
<svg style="left:3px;top:686px" width="24" height="26" viewBox="0 0 24 26"><g fill="#fff" stroke="#111" stroke-width="0.9"><rect x="3" y="5" width="4" height="4"/><rect x="9" y="5" width="4" height="4"/><rect x="15" y="5" width="4" height="4"/><rect x="3" y="11" width="4" height="4"/><rect x="9" y="11" width="4" height="4"/><rect x="15" y="11" width="4" height="4"/><rect x="3" y="17" width="4" height="4"/><rect x="9" y="17" width="4" height="4"/><rect x="15" y="17" width="4" height="4"/></g><path d="M22 23L22 18L17 23Z" fill="#66666a"/></svg>
<svg style="left:31px;top:686px" width="24" height="26" viewBox="0 0 24 26"><g fill="#fff" stroke="#111" stroke-width="0.9"><rect x="8" y="4" width="6" height="5"/><rect x="8" y="11" width="6" height="5"/><rect x="8" y="18" width="6" height="5"/></g><path d="M11 2V24" stroke="#cc2020" stroke-width="1.2"/><path d="M22 23L22 18L17 23Z" fill="#66666a"/></svg>
<svg style="left:3px;top:714px" width="24" height="26" viewBox="0 0 24 26"><path d="M4 8L9 5V19L4 21Z" fill="#fff" stroke="#222" stroke-width="0.8"/><path d="M9 8L15 4L18 10L11 21L8 19Z" fill="#7074e0" stroke="#2c2e78" stroke-width="0.8"/><path d="M22 23L22 18L17 23Z" fill="#66666a"/></svg>
<svg style="left:31px;top:714px" width="24" height="26" viewBox="0 0 24 26"><path d="M3 13L8 19L20 4" stroke="#111" stroke-width="2.5" fill="none"/><path d="M22 23L22 18L17 23Z" fill="#66666a"/></svg>
<svg style="left:3px;top:742px" width="24" height="26" viewBox="0 0 24 26"><path d="M3 18L8 9L13 19Z" fill="#d8d8dc" stroke="#333" stroke-width="0.9"/><path d="M11 12L17 9L21 12V19L15 21L11 19Z" fill="#b8b8bc" stroke="#333" stroke-width="0.8"/><path d="M22 23L22 18L17 23Z" fill="#66666a"/></svg>
<svg style="left:31px;top:742px" width="24" height="26" viewBox="0 0 24 26"><path d="M3 19L12 9L21 18L12 22Z" fill="#f0b020" stroke="#333" stroke-width="0.8"/><path d="M12 9L12 22" stroke="#c08010"/><path d="M10 6L15 3H21V7H16" fill="#aaa" stroke="#111" stroke-width="0.8"/><path d="M22 23L22 18L17 23Z" fill="#66666a"/></svg>
<svg style="left:67px;top:272px" width="16" height="16" viewBox="0 0 16 16"><rect x="0" y="0" width="16" height="16" rx="3" fill="#1c64c4"/><path d="M4 8.2L6.8 11L12 5.5" stroke="#fff" stroke-width="1.4" fill="none"/></svg>
<div class="t" style="left:87px;top:272.8px;font-size:15px;color:#2a2a2e">End</div>
<svg style="left:67px;top:295px" width="16" height="16" viewBox="0 0 16 16"><rect x="0.5" y="0.5" width="15" height="15" rx="3" fill="#f6f6f8" stroke="#707074" stroke-width="1"/></svg>
<div class="t" style="left:87px;top:295.8px;font-size:15px;color:#2a2a2e">Near</div>
<svg style="left:67px;top:318px" width="16" height="16" viewBox="0 0 16 16"><rect x="0" y="0" width="16" height="16" rx="3" fill="#1c64c4"/><path d="M4 8.2L6.8 11L12 5.5" stroke="#fff" stroke-width="1.4" fill="none"/></svg>
<div class="t" style="left:87px;top:318.8px;font-size:15px;color:#2a2a2e">Point</div>
<svg style="left:67px;top:341px" width="16" height="16" viewBox="0 0 16 16"><rect x="0" y="0" width="16" height="16" rx="3" fill="#1c64c4"/><path d="M4 8.2L6.8 11L12 5.5" stroke="#fff" stroke-width="1.4" fill="none"/></svg>
<div class="t" style="left:87px;top:341.8px;font-size:15px;color:#2a2a2e">Mid</div>
<svg style="left:67px;top:364px" width="16" height="16" viewBox="0 0 16 16"><rect x="0" y="0" width="16" height="16" rx="3" fill="#1c64c4"/><path d="M4 8.2L6.8 11L12 5.5" stroke="#fff" stroke-width="1.4" fill="none"/></svg>
<div class="t" style="left:87px;top:364.8px;font-size:15px;color:#2a2a2e">Cen</div>
<svg style="left:67px;top:387px" width="16" height="16" viewBox="0 0 16 16"><rect x="0" y="0" width="16" height="16" rx="3" fill="#1c64c4"/><path d="M4 8.2L6.8 11L12 5.5" stroke="#fff" stroke-width="1.4" fill="none"/></svg>
<div class="t" style="left:87px;top:387.8px;font-size:15px;color:#2a2a2e">Int</div>
<svg style="left:67px;top:410px" width="16" height="16" viewBox="0 0 16 16"><rect x="0.5" y="0.5" width="15" height="15" rx="3" fill="#f6f6f8" stroke="#707074" stroke-width="1"/></svg>
<div class="t" style="left:87px;top:410.8px;font-size:15px;color:#2a2a2e">Perp</div>
<svg style="left:67px;top:433px" width="16" height="16" viewBox="0 0 16 16"><rect x="0.5" y="0.5" width="15" height="15" rx="3" fill="#f6f6f8" stroke="#707074" stroke-width="1"/></svg>
<div class="t" style="left:87px;top:433.8px;font-size:15px;color:#2a2a2e">Tan</div>
<svg style="left:67px;top:456px" width="16" height="16" viewBox="0 0 16 16"><rect x="0.5" y="0.5" width="15" height="15" rx="3" fill="#f6f6f8" stroke="#707074" stroke-width="1"/></svg>
<div class="t" style="left:87px;top:456.8px;font-size:15px;color:#2a2a2e">Quad</div>
<svg style="left:67px;top:479px" width="16" height="16" viewBox="0 0 16 16"><rect x="0.5" y="0.5" width="15" height="15" rx="3" fill="#f6f6f8" stroke="#707074" stroke-width="1"/></svg>
<div class="t" style="left:87px;top:479.8px;font-size:15px;color:#2a2a2e">Knot</div>
<svg style="left:67px;top:502px" width="16" height="16" viewBox="0 0 16 16"><rect x="0.5" y="0.5" width="15" height="15" rx="3" fill="#f6f6f8" stroke="#707074" stroke-width="1"/></svg>
<div class="t" style="left:87px;top:502.8px;font-size:15px;color:#2a2a2e">Vertex</div>
<svg style="left:67px;top:525px" width="16" height="16" viewBox="0 0 16 16"><rect x="0.5" y="0.5" width="15" height="15" rx="3" fill="#ffffff" stroke="#e4e4e8" stroke-width="1"/></svg>
<div class="t" style="left:87px;top:525.8px;font-size:15px;color:#2a2a2e">Project</div>
<svg style="left:67px;top:548px" width="16" height="16" viewBox="0 0 16 16"><rect x="0.5" y="0.5" width="15" height="15" rx="3" fill="#ffffff" stroke="#e4e4e8" stroke-width="1"/></svg>
<div class="t" style="left:87px;top:548.8px;font-size:15px;color:#2a2a2e">Disable</div>
<div class="a" style="left:164px;top:257px;width:995px;height:741px;background:#1b1b1d"></div>
<svg style="left:164px;top:328px" width="521" height="655" viewBox="0 0 521 655"><defs><pattern id="dp" x="0" y="0" width="5" height="5" patternUnits="userSpaceOnUse"><rect width="5" height="5" fill="#a6a8ae"/><rect x="1" y="1" width="1" height="1" fill="#18181a"/><rect x="3" y="1" width="1" height="1" fill="#18181a"/><rect x="1" y="3" width="1" height="1" fill="#18181a"/><rect x="3" y="3" width="1" height="1" fill="#18181a"/></pattern></defs><rect width="521" height="655" fill="url(#dp)"/>
<path d="M16.2 0V655M35.9 0V655M55.6 0V655M75.3 0V655M95.0 0V655M114.7 0V655M134.4 0V655M154.1 0V655M173.8 0V655M193.5 0V655M213.2 0V655M232.9 0V655M252.6 0V655M272.3 0V655M292.0 0V655M311.7 0V655M331.4 0V655M351.1 0V655M370.8 0V655M390.5 0V655M410.2 0V655M429.9 0V655M449.6 0V655M469.3 0V655M489.0 0V655M508.7 0V655M0 7.5H521M0 27.5H521M0 47.5H521M0 67.5H521M0 87.5H521M0 107.5H521M0 127.5H521M0 147.5H521M0 167.5H521M0 187.5H521M0 207.5H521M0 227.5H521M0 247.5H521M0 267.5H521M0 287.5H521M0 307.5H521M0 327.5H521M0 347.5H521M0 367.5H521M0 387.5H521M0 407.5H521M0 427.5H521M0 447.5H521M0 467.5H521M0 487.5H521M0 507.5H521M0 527.5H521M0 547.5H521M0 567.5H521M0 587.5H521M0 607.5H521M0 627.5H521M0 647.5H521" stroke="#000" stroke-opacity="0.09" stroke-width="1.5"/>
<path d="M193.5 0V327" stroke="#3aa83a" stroke-width="1.6"/><path d="M193 327.5H521" stroke="#b06070" stroke-width="2.2"/>
<path d="M44.5 592V624.5H80" stroke="#6a6a70" stroke-width="1" fill="none"/><text x="45" y="591" font-family="Liberation Sans" font-size="11" fill="#6a6a70" text-anchor="middle">Y</text><text x="86" y="628" font-family="Liberation Sans" font-size="11" fill="#6a6a70" text-anchor="middle">X</text></svg>
<div class="a" style="left:164px;top:257px;width:58px;height:23px;background:#8c9cf2;border-bottom-right-radius:3px"></div>
<div class="a" style="left:208px;top:259px;width:1px;height:20px;background:#1a2060"></div>
<svg style="left:210px;top:265px" width="10" height="6" viewBox="0 0 10 6"><path d="M0 0H9L4.5 5Z" fill="#1a2848"/></svg>
<div class="t" style="left:172px;top:261.1px;font-size:14px;font-weight:bold;color:#1a2060">Top</div>
<div class="a" style="left:1159px;top:249px;width:9px;height:749px;background:#ececf0"></div>
<div class="a" style="left:1168px;top:260px;width:370px;height:1px;background:#d4d4d8"></div>
<div class="a" style="left:1168px;top:262px;width:370px;height:1px;background:#d4d4d8"></div>
<div class="a" style="left:1168px;top:292px;width:372px;height:706px;background:#ececf0;border-left:1px solid #d0d0d4"></div>
<svg style="left:1167px;top:266px" width="100" height="28" viewBox="0 0 100 28"><path d="M0.5 27V5Q0.5 1.5 4 1.5H65L97 27" fill="#eeeef2" stroke="#c8c8cc" stroke-width="1"/></svg>
<div class="a" style="left:1168px;top:293px;width:371px;height:1px;background:#ececf0"></div>
<svg style="left:1174px;top:270px" width="20" height="22" viewBox="0 0 20 22"><path d="M2 4L17 8V15Q12 20 7 21L2 14Z" fill="#2a2a70" stroke="#222" stroke-width="1"/><path d="M2 4L17 8V12Q12 15 7 16L2 10Z" fill="#fff"/><path d="M2 4L17 8V10Q11 12 6 12L2 7Z" fill="#f07848"/><path d="M6 11L17 8V10Q12 12 7 13Z" fill="#e02020"/></svg>
<div class="t" style="left:1196px;top:274.3px;font-size:15px;color:#2a2a2e">Layers</div>
<svg style="left:1521px;top:273px" width="18" height="18" viewBox="0 0 18 18"><circle cx="9" cy="9" r="6" fill="none" stroke="#c8c8cc" stroke-width="2.4" stroke-dasharray="2.2 1.5"/><circle cx="9" cy="9" r="2.5" fill="none" stroke="#c8c8cc" stroke-width="1.2"/></svg>
<svg style="left:1179px;top:309px" width="18" height="18" viewBox="0 0 18 18"><path d="M3 1H10L13 4V17H3Z" fill="#f4f4f4" stroke="#111" stroke-width="1.3"/><path d="M10 1V4H13" fill="none" stroke="#111" stroke-width="1"/></svg>
<svg style="left:1204px;top:309px" width="18" height="18" viewBox="0 0 18 18"><path d="M2 1H8L10 3V12H2Z" fill="#c4c4c8" stroke="#b8b8bc" stroke-width="1"/><path d="M6 6H12L15 9V17H6Z" fill="#c4c4c8" stroke="#b0b0b4" stroke-width="1"/></svg>
<svg style="left:1231px;top:309px" width="18" height="18" viewBox="0 0 18 18"><path d="M2 2L15 16M15 2L2 16" stroke="#b8b8bc" stroke-width="2.2"/></svg>
<svg style="left:1257px;top:309px" width="18" height="18" viewBox="0 0 18 18"><path d="M1 13L8.5 5L16 13Z" fill="#bcbcc0" stroke="#a8a8ac" stroke-width="1"/></svg>
<svg style="left:1283px;top:309px" width="18" height="18" viewBox="0 0 18 18"><path d="M1 5L8.5 13L16 5Z" fill="#bcbcc0" stroke="#a8a8ac" stroke-width="1"/></svg>
<svg style="left:1309px;top:309px" width="18" height="18" viewBox="0 0 18 18"><path d="M13 2V16L4 9Z" fill="#bcbcc0" stroke="#a8a8ac" stroke-width="1"/></svg>
<svg style="left:1335px;top:309px" width="18" height="18" viewBox="0 0 18 18"><path d="M1 3H16L10 10V16H7V10Z" fill="#5a5ed8" stroke="#2a2c78" stroke-width="1"/><path d="M14 15L17 15V18H14Z" fill="#111"/></svg>
<svg style="left:1362px;top:309px" width="18" height="18" viewBox="0 0 18 18"><path d="M3 1H10L13 4V16H3Z" fill="#c4c4c8" stroke="#b0b0b4" stroke-width="1"/><path d="M13 15L15 15V17H13Z" fill="#999"/></svg>
<svg style="left:1387px;top:309px" width="18" height="18" viewBox="0 0 18 18"><path d="M2 16L10 6" stroke="#1a1e50" stroke-width="3"/><path d="M6 4L11 1L16 5L14 7L11 5L10 7Z" fill="#2a2e70" stroke="#111" stroke-width="0.8"/><path d="M14 15H17V18H14Z" fill="#111"/></svg>
<svg style="left:1413px;top:309px" width="18" height="18" viewBox="0 0 18 18"><circle cx="9" cy="9" r="8.5" fill="#3a40c0"/><circle cx="9" cy="9" r="8.5" fill="none" stroke="#2a2e90"/><text x="9" y="14" font-family="Liberation Sans" font-weight="bold" font-size="13" fill="#fff" text-anchor="middle">?</text></svg>
<div class="a" style="left:1169px;top:339px;width:367px;height:635px;background:#ffffff"></div>
<div class="a" style="left:1169px;top:339px;width:367px;height:1px;background:#d8d8dc"></div>
<div class="a" style="left:1294px;top:341px;width:1px;height:26px;background:#e4e4e8"></div>
<div class="a" style="left:1347px;top:341px;width:1px;height:26px;background:#e4e4e8"></div>
<div class="a" style="left:1390px;top:341px;width:1px;height:26px;background:#e4e4e8"></div>
<div class="a" style="left:1425px;top:341px;width:1px;height:26px;background:#e4e4e8"></div>
<div class="a" style="left:1461px;top:341px;width:1px;height:26px;background:#e4e4e8"></div>
<div class="a" style="left:1492px;top:341px;width:1px;height:26px;background:#e4e4e8"></div>
<div class="t" style="left:1174px;top:346.3px;font-size:15px;color:#2a2a2e">Layer</div>
<div class="t" style="left:1302px;top:346.3px;font-size:15px;color:#2a2a2e">Curr...</div>
<div class="t" style="left:1359px;top:346.3px;font-size:15px;color:#2a2a2e">On</div>
<div class="t" style="left:1395px;top:346.3px;font-size:15px;color:#2a2a2e">Lo...</div>
<div class="t" style="left:1430px;top:346.3px;font-size:15px;color:#2a2a2e">Co...</div>
<div class="t" style="left:1467px;top:346.3px;font-size:15px;color:#2a2a2e">M..</div>
<div class="a" style="left:1490px;top:345px;width:46px;height:22px;overflow:hidden"><div class="t" style="left:7px;top:1.3px;font-size:15px;color:#2a2a2e">Linety</div>
</div><div class="t" style="left:1178px;top:370.8px;font-size:15px;font-weight:bold;color:#111">Default</div>
<svg style="left:1311px;top:370px" width="18" height="14" viewBox="0 0 18 14"><path d="M1 7L6 12L16 1" stroke="#111" stroke-width="2" fill="none"/></svg>
<div class="a" style="left:1490px;top:367px;width:46px;height:22px;overflow:hidden"><div class="t" style="left:6px;top:3.8px;font-size:15px;font-weight:bold;color:#111">Contin</div>
</div><div class="a" style="left:1434px;top:369px;width:18px;height:18px;background:#000000;border:1px solid #222"></div>
<div class="a" style="left:1184px;top:389px;width:336px;height:1px;background:#ececf0"></div>
<div class="t" style="left:1178px;top:395.3px;font-size:14.4px;color:#2a2a2e">Layer 01</div>
<svg style="left:1360px;top:393px" width="14" height="18" viewBox="0 0 14 18"><path d="M7 1C3.5 1 2 3.5 2 6C2 8.5 4 10 4.5 12H9.5C10 10 12 8.5 12 6C12 3.5 10.5 1 7 1Z" fill="#f4ec70" stroke="#333" stroke-width="1"/><path d="M4.5 13.5H9.5M5 15.5H9" stroke="#555" stroke-width="1.2"/></svg>
<svg style="left:1399px;top:393px" width="15" height="17" viewBox="0 0 15 17"><rect x="1" y="7" width="10" height="9" fill="#f0ea60" stroke="#333" stroke-width="1"/><path d="M8 7V3.5Q8 1 10.5 1Q13 1 13 3.5V6" fill="none" stroke="#222" stroke-width="1.3"/></svg>
<div class="a" style="left:1490px;top:391px;width:46px;height:22px;overflow:hidden"><div class="t" style="left:6px;top:3.8px;font-size:15px;color:#2a2a2e">Contin</div>
</div><div class="a" style="left:1434px;top:393px;width:18px;height:18px;background:#dd0000;border:1px solid #222"></div>
<div class="a" style="left:1184px;top:413px;width:336px;height:1px;background:#ececf0"></div>
<div class="t" style="left:1178px;top:419.3px;font-size:14.4px;color:#2a2a2e">Layer 02</div>
<svg style="left:1360px;top:417px" width="14" height="18" viewBox="0 0 14 18"><path d="M7 1C3.5 1 2 3.5 2 6C2 8.5 4 10 4.5 12H9.5C10 10 12 8.5 12 6C12 3.5 10.5 1 7 1Z" fill="#f4ec70" stroke="#333" stroke-width="1"/><path d="M4.5 13.5H9.5M5 15.5H9" stroke="#555" stroke-width="1.2"/></svg>
<svg style="left:1399px;top:417px" width="15" height="17" viewBox="0 0 15 17"><rect x="1" y="7" width="10" height="9" fill="#f0ea60" stroke="#333" stroke-width="1"/><path d="M8 7V3.5Q8 1 10.5 1Q13 1 13 3.5V6" fill="none" stroke="#222" stroke-width="1.3"/></svg>
<div class="a" style="left:1490px;top:415px;width:46px;height:22px;overflow:hidden"><div class="t" style="left:6px;top:3.8px;font-size:15px;color:#2a2a2e">Contin</div>
</div><div class="a" style="left:1434px;top:417px;width:18px;height:18px;background:#8020d8;border:1px solid #222"></div>
<div class="a" style="left:1184px;top:437px;width:336px;height:1px;background:#ececf0"></div>
<div class="t" style="left:1178px;top:443.3px;font-size:14.4px;color:#2a2a2e">Layer 03</div>
<svg style="left:1360px;top:441px" width="14" height="18" viewBox="0 0 14 18"><path d="M7 1C3.5 1 2 3.5 2 6C2 8.5 4 10 4.5 12H9.5C10 10 12 8.5 12 6C12 3.5 10.5 1 7 1Z" fill="#f4ec70" stroke="#333" stroke-width="1"/><path d="M4.5 13.5H9.5M5 15.5H9" stroke="#555" stroke-width="1.2"/></svg>
<svg style="left:1399px;top:441px" width="15" height="17" viewBox="0 0 15 17"><rect x="1" y="7" width="10" height="9" fill="#f0ea60" stroke="#333" stroke-width="1"/><path d="M8 7V3.5Q8 1 10.5 1Q13 1 13 3.5V6" fill="none" stroke="#222" stroke-width="1.3"/></svg>
<div class="a" style="left:1490px;top:439px;width:46px;height:22px;overflow:hidden"><div class="t" style="left:6px;top:3.8px;font-size:15px;color:#2a2a2e">Contin</div>
</div><div class="a" style="left:1434px;top:441px;width:18px;height:18px;background:#0000f0;border:1px solid #222"></div>
<div class="a" style="left:1184px;top:461px;width:336px;height:1px;background:#ececf0"></div>
<div class="t" style="left:1178px;top:467.3px;font-size:14.4px;color:#2a2a2e">Layer 04</div>
<svg style="left:1360px;top:465px" width="14" height="18" viewBox="0 0 14 18"><path d="M7 1C3.5 1 2 3.5 2 6C2 8.5 4 10 4.5 12H9.5C10 10 12 8.5 12 6C12 3.5 10.5 1 7 1Z" fill="#f4ec70" stroke="#333" stroke-width="1"/><path d="M4.5 13.5H9.5M5 15.5H9" stroke="#555" stroke-width="1.2"/></svg>
<svg style="left:1399px;top:465px" width="15" height="17" viewBox="0 0 15 17"><rect x="1" y="7" width="10" height="9" fill="#f0ea60" stroke="#333" stroke-width="1"/><path d="M8 7V3.5Q8 1 10.5 1Q13 1 13 3.5V6" fill="none" stroke="#222" stroke-width="1.3"/></svg>
<div class="a" style="left:1490px;top:463px;width:46px;height:22px;overflow:hidden"><div class="t" style="left:6px;top:3.8px;font-size:15px;color:#2a2a2e">Contin</div>
</div><div class="a" style="left:1434px;top:465px;width:18px;height:18px;background:#007000;border:1px solid #222"></div>
<div class="a" style="left:1184px;top:485px;width:336px;height:1px;background:#ececf0"></div>
<div class="t" style="left:1178px;top:491.3px;font-size:14.4px;color:#2a2a2e">Layer 05</div>
<svg style="left:1360px;top:489px" width="14" height="18" viewBox="0 0 14 18"><path d="M7 1C3.5 1 2 3.5 2 6C2 8.5 4 10 4.5 12H9.5C10 10 12 8.5 12 6C12 3.5 10.5 1 7 1Z" fill="#f4ec70" stroke="#333" stroke-width="1"/><path d="M4.5 13.5H9.5M5 15.5H9" stroke="#555" stroke-width="1.2"/></svg>
<svg style="left:1399px;top:489px" width="15" height="17" viewBox="0 0 15 17"><rect x="1" y="7" width="10" height="9" fill="#f0ea60" stroke="#333" stroke-width="1"/><path d="M8 7V3.5Q8 1 10.5 1Q13 1 13 3.5V6" fill="none" stroke="#222" stroke-width="1.3"/></svg>
<div class="a" style="left:1490px;top:487px;width:46px;height:22px;overflow:hidden"><div class="t" style="left:6px;top:3.8px;font-size:15px;color:#2a2a2e">Contin</div>
</div><div class="a" style="left:1434px;top:489px;width:18px;height:18px;background:#ffffff;border:1px solid #222"></div>
<div class="a" style="left:1184px;top:509px;width:336px;height:1px;background:#ececf0"></div>
<div class="a" style="left:1169px;top:974px;width:367px;height:20px;background:#f0f0f2"></div>
<div class="a" style="left:1189px;top:980px;width:191px;height:7px;background:#8a8a8a"></div>
<div class="a" style="left:1539px;top:292px;width:1px;height:701px;background:#c4c4c8"></div>
<div class="a" style="left:1545px;top:262px;width:1px;height:736px;background:#dcdce0"></div>
<div class="a" style="left:1540px;top:262px;width:5px;height:736px;background:#f0f0f3"></div>
<div class="t" style="left:1551px;top:261.8px;font-size:15px;color:#2a2a2e">Properties: View properties</div>
<div class="a" style="left:1735px;top:268px;width:185px;height:1px;background:#d0d0d4"></div>
<div class="a" style="left:1735px;top:270px;width:185px;height:1px;background:#f6f6f8"></div>
<div class="a" style="left:1548px;top:307px;width:372px;height:688px;background:#ececf0;border-left:1px solid #cfcfd3;border-top:1px solid #cfcfd3;border-bottom:1px solid #cfcfd3"></div>
<svg style="left:1547px;top:281px" width="45" height="28" viewBox="0 0 45 28"><path d="M0.5 27V3Q0.5 0.5 3 0.5H43.5V27" fill="#eeeef2" stroke="#c8c8cc"/></svg>
<div class="a" style="left:1548px;top:307px;width:43px;height:2px;background:#eeeef2"></div>
<svg style="left:1558px;top:286px" width="20" height="20" viewBox="0 0 20 20"><circle cx="10" cy="10" r="7.5" fill="none" stroke="url(#cw)" stroke-width="4"/><defs><linearGradient id="cw" x1="0" y1="0" x2="1" y2="1"><stop offset="0" stop-color="#ff2020"/><stop offset="0.33" stop-color="#20e020"/><stop offset="0.66" stop-color="#2040ff"/><stop offset="1" stop-color="#ff20ff"/></linearGradient></defs><circle cx="10" cy="10" r="9.5" fill="none" stroke="#333" stroke-width="0.8"/></svg>
<svg style="left:1601px;top:285px" width="22" height="22" viewBox="0 0 22 22"><circle cx="10" cy="12" r="8" fill="#3a48c8" stroke="#1a1e50"/><circle cx="7.5" cy="9" r="3" fill="#9aa0f0"/><path d="M14 6L18 2L21 5" stroke="#111" stroke-width="1.3" fill="#fff"/></svg>
<svg style="left:1646px;top:286px" width="20" height="20" viewBox="0 0 20 20"><path d="M4 19L3 14L13 3L17 6L8 17Z" fill="#f0f0f0" stroke="#555" stroke-width="1"/><path d="M11 5L14 2L18 5L15 8Z" fill="#d83030"/></svg>
<svg style="left:1689px;top:287px" width="22" height="18" viewBox="0 0 22 18"><path d="M1 3H8L10 5H17V15H1Z" fill="#e0b020" stroke="#222" stroke-width="1"/><path d="M1 15L4 8H20L17 15Z" fill="#f8d040" stroke="#222" stroke-width="1"/></svg>
<svg style="left:1734px;top:286px" width="20" height="20" viewBox="0 0 20 20"><rect x="1" y="1" width="18" height="18" fill="#fff" stroke="#333" stroke-width="1.2"/><rect x="1" y="1" width="18" height="4" fill="#3a58c8"/><circle cx="10" cy="12" r="5" fill="#3050c8"/><text x="10" y="15.5" font-size="8" font-weight="bold" fill="#fff" text-anchor="middle" font-family="Liberation Sans">?</text></svg>
<svg style="left:1779px;top:286px" width="18" height="20" viewBox="0 0 18 20"><path d="M2 1H12L16 5V19H2Z" fill="#fff" stroke="#222" stroke-width="1.2"/><path d="M5 7H13V16H5ZM9 7V16M5 11.5H13" stroke="#333" stroke-width="1" fill="none"/></svg>
<svg style="left:1901px;top:287px" width="18" height="18" viewBox="0 0 18 18"><circle cx="9" cy="9" r="6" fill="none" stroke="#c8c8cc" stroke-width="2.4" stroke-dasharray="2.2 1.5"/><circle cx="9" cy="9" r="2.5" fill="none" stroke="#c8c8cc" stroke-width="1.2"/></svg>
<div class="a" style="left:1555px;top:313px;width:35px;height:35px;background:#aab4ec"></div>
<svg style="left:1558px;top:318px" width="29" height="25" viewBox="0 0 29 25"><path d="M2 8H8L10 4H19L21 8H27V23H2Z" fill="#2a2a2a" stroke="#111"/><circle cx="15" cy="15" r="6" fill="#555" stroke="#eee" stroke-width="1.5"/><circle cx="15" cy="15" r="3" fill="#222"/></svg>
<svg style="left:1597px;top:316px" width="30" height="28" viewBox="0 0 30 28"><rect x="0.5" y="0.5" width="29" height="27" fill="#9aa8b0" stroke="#555"/><rect x="4" y="4" width="22" height="20" fill="#fff" stroke="#e03030" stroke-width="2"/></svg>
<div class="t" style="left:1558px;top:365.8px;font-size:18px;color:#2a2a2e">Viewport</div>
<div class="a" style="left:1558px;top:389.0px;width:350px;height:1px;background:#e2e2e6"></div>
<div class="a" style="left:1732px;top:390.0px;width:177px;height:103px;background:#ffffff"></div>
<div class="t" style="left:1582px;top:396.8px;font-size:15px;color:#2a2a2e">Title</div>
<div class="t" style="left:1736px;top:396.8px;font-size:15px;color:#1a1a1a">Top</div>
<div class="a" style="left:1582px;top:416.0px;width:326px;height:1px;background:#e2e2e6"></div>
<div class="t" style="left:1582px;top:422.8px;font-size:15px;color:#808084">Width</div>
<div class="t" style="left:1736px;top:422.8px;font-size:15px;color:#1a1a1a">995</div>
<div class="a" style="left:1582px;top:442.0px;width:326px;height:1px;background:#e2e2e6"></div>
<div class="t" style="left:1582px;top:448.8px;font-size:15px;color:#808084">Height</div>
<div class="t" style="left:1736px;top:448.8px;font-size:15px;color:#1a1a1a">739</div>
<div class="a" style="left:1582px;top:468.0px;width:326px;height:1px;background:#e2e2e6"></div>
<div class="t" style="left:1582px;top:474.8px;font-size:15px;color:#2a2a2e">Projection</div>
<div class="t" style="left:1736px;top:474.8px;font-size:15px;color:#1a1a1a">Parallel</div>
<div class="a" style="left:1582px;top:494.0px;width:326px;height:1px;background:#e2e2e6"></div>
<div class="a" style="left:1885px;top:470.0px;width:24px;height:23px;background:#ffffff;border:1px solid #d0d0d4;border-radius:2px"></div>
<svg style="left:1891px;top:478.0px" width="12" height="8" viewBox="0 0 12 8"><path d="M1 1L6 6L11 1" stroke="#333" stroke-width="1.1" fill="none"/></svg>
<div class="t" style="left:1582px;top:500.8px;font-size:15px;color:#2a2a2e">Locked</div>
<div class="a" style="left:1735px;top:499.0px;width:16px;height:16px;background:#fff;border:1px solid #555;border-radius:3px"></div>
<div class="a" style="left:1582px;top:520.0px;width:326px;height:1px;background:#e2e2e6"></div>
<div class="t" style="left:1558px;top:527.8px;font-size:18px;color:#2a2a2e">Camera</div>
<div class="a" style="left:1558px;top:551.0px;width:350px;height:1px;background:#e2e2e6"></div>
<div class="a" style="left:1732px;top:552.0px;width:177px;height:129px;background:#ffffff"></div>
<div class="t" style="left:1582px;top:558.8px;font-size:15px;color:#808084">Lens Length(mm)</div>
<div class="t" style="left:1736px;top:558.8px;font-size:15px;color:#1a1a1a">50.0</div>
<div class="a" style="left:1582px;top:578.0px;width:326px;height:1px;background:#e2e2e6"></div>
<div class="t" style="left:1582px;top:584.8px;font-size:15px;color:#2a2a2e">Rotation</div>
<div class="t" style="left:1736px;top:584.8px;font-size:15px;color:#1a1a1a">0.0</div>
<div class="a" style="left:1582px;top:604.0px;width:326px;height:1px;background:#e2e2e6"></div>
<div class="t" style="left:1582px;top:610.8px;font-size:15px;color:#2a2a2e">X Location</div>
<div class="t" style="left:1736px;top:610.8px;font-size:15px;color:#1a1a1a">185.962</div>
<div class="a" style="left:1582px;top:630.0px;width:326px;height:1px;background:#e2e2e6"></div>
<div class="t" style="left:1582px;top:636.8px;font-size:15px;color:#2a2a2e">Y Location</div>
<div class="t" style="left:1736px;top:636.8px;font-size:15px;color:#1a1a1a">18.059</div>
<div class="a" style="left:1582px;top:656.0px;width:326px;height:1px;background:#e2e2e6"></div>
<div class="t" style="left:1582px;top:662.8px;font-size:15px;color:#2a2a2e">Z Location</div>
<div class="t" style="left:1736px;top:662.8px;font-size:15px;color:#1a1a1a">31.494</div>
<div class="a" style="left:1582px;top:682.0px;width:326px;height:1px;background:#e2e2e6"></div>
<div class="t" style="left:1582px;top:688.8px;font-size:15px;color:#2a2a2e">Distance to Target</div>
<div class="t" style="left:1736px;top:688.8px;font-size:15px;color:#1a1a1a">31.49</div>
<div class="a" style="left:1582px;top:708.0px;width:326px;height:1px;background:#e2e2e6"></div>
<div class="t" style="left:1582px;top:714.8px;font-size:15px;color:#2a2a2e">Location</div>
<div class="a" style="left:1734px;top:710.0px;width:173px;height:22px;background:#ffffff;border:1px solid #d4d4d8;border-radius:3px"></div>
<div class="t" style="left:1799px;top:714.8px;font-size:15px;color:#1a1a1a">Place...</div>
<div class="t" style="left:1558px;top:741.8px;font-size:18px;color:#2a2a2e">Target</div>
<div class="a" style="left:1558px;top:765.0px;width:350px;height:1px;background:#e2e2e6"></div>
<div class="a" style="left:1732px;top:766.0px;width:177px;height:77px;background:#ffffff"></div>
<div class="t" style="left:1582px;top:772.8px;font-size:15px;color:#2a2a2e">X Target</div>
<div class="t" style="left:1736px;top:772.8px;font-size:15px;color:#1a1a1a">185.962</div>
<div class="a" style="left:1582px;top:792.0px;width:326px;height:1px;background:#e2e2e6"></div>
<div class="t" style="left:1582px;top:798.8px;font-size:15px;color:#2a2a2e">Y Target</div>
<div class="t" style="left:1736px;top:798.8px;font-size:15px;color:#1a1a1a">18.059</div>
<div class="a" style="left:1582px;top:818.0px;width:326px;height:1px;background:#e2e2e6"></div>
<div class="t" style="left:1582px;top:824.8px;font-size:15px;color:#2a2a2e">Z Target</div>
<div class="t" style="left:1736px;top:824.8px;font-size:15px;color:#1a1a1a">0.0</div>
<div class="a" style="left:1582px;top:844.0px;width:326px;height:1px;background:#e2e2e6"></div>
<div class="t" style="left:1582px;top:850.8px;font-size:15px;color:#2a2a2e">Location</div>
<div class="a" style="left:1734px;top:846.0px;width:173px;height:22px;background:#ffffff;border:1px solid #d4d4d8;border-radius:3px"></div>
<div class="t" style="left:1799px;top:850.8px;font-size:15px;color:#1a1a1a">Place...</div>
<div class="t" style="left:1558px;top:877.8px;font-size:18px;color:#2a2a2e">Wallpaper</div>
<div class="a" style="left:1558px;top:901.0px;width:350px;height:1px;background:#e2e2e6"></div>
<div class="a" style="left:1732px;top:902.0px;width:177px;height:25px;background:#ffffff"></div>
<div class="t" style="left:1582px;top:908.8px;font-size:15px;color:#2a2a2e">Filename</div>
<div class="t" style="left:1735px;top:908.8px;font-size:15px;color:#1a1a1a">(none)</div>
<div class="a" style="left:1884px;top:904.0px;width:24px;height:22px;background:#ffffff;border:1px solid #d0d0d4;border-radius:3px"></div>
<div class="t" style="left:1891px;top:908.8px;font-size:12px;color:#111">...</div>
<div class="a" style="left:1582px;top:928.0px;width:326px;height:1px;background:#e2e2e6"></div>
<div class="t" style="left:1582px;top:934.8px;font-size:15px;color:#2a2a2e">Show</div>
<svg style="left:1735px;top:934.0px" width="16" height="16" viewBox="0 0 16 16"><rect x="0" y="0" width="16" height="16" rx="3" fill="#1c64c4"/><path d="M4 8.2L6.8 11L12 5.5" stroke="#fff" stroke-width="1.4" fill="none"/></svg>
<div class="a" style="left:1582px;top:954.0px;width:326px;height:1px;background:#e2e2e6"></div>
<div class="t" style="left:1582px;top:960.8px;font-size:15px;color:#2a2a2e">Gray</div>
<svg style="left:1735px;top:960.0px" width="16" height="16" viewBox="0 0 16 16"><rect x="0" y="0" width="16" height="16" rx="3" fill="#1c64c4"/><path d="M4 8.2L6.8 11L12 5.5" stroke="#fff" stroke-width="1.4" fill="none"/></svg>
<div class="a" style="left:1582px;top:980.0px;width:326px;height:1px;background:#e2e2e6"></div>
<div class="a" style="left:0px;top:998px;width:1920px;height:22px;background:#eeeef2"></div>
<div class="a" style="left:0px;top:998px;width:1920px;height:1px;background:#dcdce0"></div>
<div class="a" style="left:59px;top:999px;width:1px;height:21px;background:#d4d4d8"></div>
<div class="a" style="left:167px;top:999px;width:1px;height:21px;background:#d4d4d8"></div>
<div class="a" style="left:275px;top:999px;width:1px;height:21px;background:#d4d4d8"></div>
<div class="a" style="left:383px;top:999px;width:1px;height:21px;background:#d4d4d8"></div>
<div class="a" style="left:491px;top:999px;width:1px;height:21px;background:#d4d4d8"></div>
<div class="a" style="left:699px;top:999px;width:1px;height:21px;background:#d4d4d8"></div>
<div class="a" style="left:780px;top:999px;width:1px;height:21px;background:#d4d4d8"></div>
<div class="a" style="left:835px;top:999px;width:1px;height:21px;background:#d4d4d8"></div>
<div class="a" style="left:892px;top:999px;width:1px;height:21px;background:#d4d4d8"></div>
<div class="a" style="left:950px;top:999px;width:1px;height:21px;background:#d4d4d8"></div>
<div class="a" style="left:1040px;top:999px;width:1px;height:21px;background:#d4d4d8"></div>
<div class="a" style="left:1111px;top:999px;width:1px;height:21px;background:#d4d4d8"></div>
<div class="a" style="left:1225px;top:999px;width:1px;height:21px;background:#d4d4d8"></div>
<div class="a" style="left:1272px;top:999px;width:1px;height:21px;background:#d4d4d8"></div>
<div class="a" style="left:1912px;top:999px;width:1px;height:21px;background:#d4d4d8"></div>
<div class="a" style="left:781px;top:999px;width:54px;height:21px;background:#e2e2ee"></div>
<div class="a" style="left:836px;top:999px;width:56px;height:21px;background:#e2e2ee"></div>
<div class="a" style="left:893px;top:999px;width:57px;height:21px;background:#e2e2ee"></div>
<div class="a" style="left:951px;top:999px;width:89px;height:21px;background:#e2e2ee"></div>
<div class="a" style="left:1041px;top:999px;width:70px;height:21px;background:#e2e2ee"></div>
<div class="t" style="left:7px;top:1003.9px;font-size:14.3px;color:#333338">CPlane</div>
<div class="t" style="left:87px;top:1003.9px;font-size:14.3px;color:#333338">x 310.20</div>
<div class="t" style="left:195px;top:1003.9px;font-size:14.3px;color:#333338">y 192.97</div>
<div class="t" style="left:320px;top:1003.9px;font-size:14.3px;color:#333338">z 0</div>
<div class="t" style="left:417px;top:1003.9px;font-size:14.3px;color:#333338">Inches</div>
<div class="t" style="left:514px;top:1003.9px;font-size:14.3px;color:#333338">Default</div>
<div class="t" style="left:708px;top:1003.9px;font-size:14.3px;color:#333338">Grid Snap</div>
<div class="t" style="left:787px;top:1003.7px;font-size:14.5px;font-weight:bold;color:#2a2a34">Ortho</div>
<div class="t" style="left:841px;top:1003.7px;font-size:14.5px;font-weight:bold;color:#2a2a34">Planar</div>
<div class="t" style="left:899px;top:1003.7px;font-size:14.5px;font-weight:bold;color:#2a2a34">Osnap</div>
<div class="t" style="left:955px;top:1003.7px;font-size:14.5px;font-weight:bold;color:#2a2a34">SmartTrack</div>
<div class="t" style="left:1046px;top:1003.7px;font-size:14.5px;font-weight:bold;color:#2a2a34">Gumball</div>
<div class="t" style="left:1120px;top:1003.9px;font-size:14.3px;color:#333338">Record History</div>
<div class="t" style="left:1234px;top:1003.9px;font-size:14.3px;color:#333338">Filter</div>
<div class="t" style="left:1276px;top:1003.9px;font-size:14.3px;color:#333338">Absolute tolerance: 0.01</div>
<div class="a" style="left:496px;top:1004px;width:13px;height:13px;background:#000"></div>
<div class="a" style="left:0px;top:1020px;width:1920px;height:60px;background:#1f1f20"></div>
<svg style="left:20px;top:1034px" width="34" height="32" viewBox="0 0 34 32"><circle cx="16" cy="16" r="13" fill="#b8b8bc"/><circle cx="16" cy="16" r="13" fill="url(#wg)"/><defs><radialGradient id="wg" cx="0.35" cy="0.3" r="0.8"><stop offset="0" stop-color="#d8d8dc"/><stop offset="1" stop-color="#8a8a90"/></radialGradient></defs><path d="M14 26Q10 26 10 23Q10 20 14 20Q16 16 21 17Q24 18 25 21Q30 21 30 24Q30 27 26 27Z" fill="#f4f4f6"/></svg>
<svg style="left:384px;top:1035px" width="30" height="30" viewBox="0 0 30 30"><defs><linearGradient id="wl" x1="0" y1="0" x2="1" y2="1"><stop offset="0" stop-color="#6ed0f4"/><stop offset="1" stop-color="#1a98e8"/></linearGradient></defs><rect x="0" y="0" width="14.2" height="14.2" rx="1" fill="url(#wl)"/><rect x="15.6" y="0" width="14.2" height="14.2" rx="1" fill="url(#wl)"/><rect x="0" y="15.6" width="14.2" height="14.2" rx="1" fill="url(#wl)"/><rect x="15.6" y="15.6" width="14.2" height="14.2" rx="1" fill="url(#wl)"/></svg>
<div class="a" style="left:432px;top:1029px;width:123px;height:40px;background:#2a2a2d;border-radius:20px"></div>
<svg style="left:459px;top:1040px" width="20" height="20" viewBox="0 0 20 20"><circle cx="12" cy="7.5" r="6" fill="none" stroke="#fff" stroke-width="1.8"/><path d="M7.8 11.7L2 17.5" stroke="#fff" stroke-width="2" stroke-linecap="round"/></svg>
<div class="t" style="left:484px;top:1044.7px;font-size:14.5px;color:#ffffff">Search</div>
<div class="a" style="left:573px;top:1044px;width:22px;height:20px;background:#6a6a6c;border-radius:2px"></div>
<div class="a" style="left:580px;top:1036px;width:23px;height:21px;background:#f0f0f0;border-radius:2px"></div>
<div class="a" style="left:580px;top:1044px;width:15px;height:13px;background:#b8b8b8"></div>
<svg style="left:627px;top:1035px" width="30" height="30" viewBox="0 0 30 30"><path d="M15 1A14 14 0 1 1 8 27L2 29L4 23A14 14 0 0 1 15 1Z" fill="#7b70d4"/><rect x="8" y="10" width="10" height="9" rx="1.5" fill="#fff"/><path d="M18 13L23 10V19L18 16Z" fill="#fff"/></svg>
<svg style="left:681px;top:1035px" width="31" height="30" viewBox="0 0 31 30"><rect x="6" y="0" width="25" height="29" rx="2" fill="#2b7cd3"/><rect x="6" y="7" width="25" height="8" fill="#1d5fb8"/><rect x="6" y="15" width="25" height="7" fill="#185abd"/><rect x="6" y="22" width="25" height="7" fill="#103f91"/><rect x="0" y="6" width="16" height="16" rx="1.5" fill="#185abd"/><text x="8" y="19" font-family="Liberation Sans" font-weight="bold" font-size="12" fill="#fff" text-anchor="middle">W</text></svg>
<svg style="left:736px;top:1035px" width="31" height="30" viewBox="0 0 31 30"><rect x="6" y="0" width="25" height="29" rx="2" fill="#21a366"/><rect x="18" y="0" width="13" height="14" fill="#33c481"/><rect x="6" y="14" width="25" height="8" fill="#107c41"/><rect x="6" y="22" width="25" height="7" fill="#185c37"/><rect x="0" y="6" width="16" height="16" rx="1.5" fill="#107c41"/><text x="8" y="19" font-family="Liberation Sans" font-weight="bold" font-size="12" fill="#fff" text-anchor="middle">X</text></svg>
<svg style="left:795px;top:1034px" width="24" height="31" viewBox="0 0 24 31"><rect x="0" y="0" width="23" height="30" rx="2" fill="#6a7078"/><rect x="2" y="2" width="19" height="5" rx="1" fill="#58c8e8"/><g fill="#e8eaee"><rect x="2.5" y="10" width="5" height="5"/><rect x="9" y="10" width="5" height="5"/><rect x="15.5" y="10" width="5" height="5"/><rect x="2.5" y="16.5" width="5" height="5"/><rect x="9" y="16.5" width="5" height="5"/><rect x="2.5" y="23" width="5" height="5"/><rect x="9" y="23" width="5" height="5"/></g><rect x="15.5" y="16.5" width="5" height="11.5" fill="#2a4a90"/></svg>
<svg style="left:847px;top:1034px" width="31" height="31" viewBox="0 0 31 31"><rect x="0" y="0" width="30" height="30" fill="#f4ecec"/><path d="M7 25L14 5H18L24 25H20L18.5 20H13L11.5 25Z" fill="#c8202c"/><path d="M14 16.5H17.5L16 10Z" fill="#f4ecec"/><text x="25" y="28" font-size="5" fill="#c8202c" font-family="Liberation Sans">LT</text></svg>
<div class="a" style="left:858px;top:1070px;width:8px;height:4px;background:#8a8a8e;border-radius:2px"></div>
<svg style="left:901px;top:1036px" width="32" height="28" viewBox="0 0 32 28"><path d="M0 2Q0 0 2 0H11L14 3H30Q31 3 31 5V27H0Z" fill="#e8b830"/><rect x="0" y="5" width="31" height="22" rx="1" fill="#fad24a"/><rect x="7" y="19" width="17" height="9" rx="1.5" fill="#1f6fd0"/><rect x="9" y="20" width="13" height="2" fill="#5aa8f0"/></svg>
<div class="a" style="left:913px;top:1070px;width:8px;height:4px;background:#8a8a8e;border-radius:2px"></div>
<svg style="left:957px;top:1034px" width="30" height="30" viewBox="0 0 30 30"><circle cx="15" cy="15" r="14.5" fill="#e33b2e"/><path d="M15 15L2.4 22.3A14.5 14.5 0 0 1 2.4 7.7Z" fill="#e33b2e"/><path d="M15 15L27.6 7.7A14.5 14.5 0 0 1 15 29.5Z" fill="#fbc02d"/><path d="M15 15L15 29.5A14.5 14.5 0 0 1 2.4 22.3Z" fill="#2a9d4a"/><path d="M15 15L2.4 22.3A14.5 14.5 0 0 1 1 13Z" fill="#2a9d4a"/><circle cx="15" cy="15" r="6.5" fill="#fff"/><circle cx="15" cy="15" r="5" fill="#3a78e0"/></svg>
<svg style="left:1013px;top:1036px" width="27" height="26" viewBox="0 0 27 26"><rect x="0" y="0" width="27" height="26" rx="3" fill="#001e36"/><text x="13.5" y="18" font-family="Liberation Sans" font-weight="bold" font-size="13" fill="#31a8ff" text-anchor="middle">Ps</text></svg>
<svg style="left:1066px;top:1035px" width="31" height="30" viewBox="0 0 31 30"><circle cx="17" cy="14.5" r="14" fill="#ed6c47"/><path d="M17 0.5A14 14 0 0 1 31 14.5H17Z" fill="#ff8f6b"/><path d="M17 14.5H31A14 14 0 0 1 17 28.5Z" fill="#d35230"/><rect x="0" y="7" width="15" height="15" rx="1.5" fill="#c43e1c"/><text x="7.5" y="19" font-family="Liberation Sans" font-weight="bold" font-size="11" fill="#fff" text-anchor="middle">P</text></svg>
<svg style="left:1122px;top:1034px" width="29" height="31" viewBox="0 0 29 31"><path d="M14.5 1L27 8V23L14.5 30L2 23V8Z" fill="#c8c8cc"/><path d="M14.5 3L25 9V22L14.5 28L4 22V9Z" fill="#e0e0e4"/><path d="M8 8H21V11L13 21H21V24H7V21L15 11H8Z" fill="#c41a2a"/></svg>
<svg style="left:1176px;top:1034px" width="32" height="31" viewBox="0 0 32 31"><rect x="0" y="0" width="31" height="31" fill="#111"/><path d="M4 22Q3 14 8 8L14 4Q12 9 16 12L24 17Q20 26 12 27Q6 27 4 22Z" fill="#f0f0f0"/><path d="M9 17Q12 14 16 16L19 20Q14 22 9 17Z" fill="#333"/><text x="25" y="11" font-family="Liberation Sans" font-size="10" fill="#fff">7</text></svg>
<div class="a" style="left:1188px;top:1070px;width:8px;height:4px;background:#8a8a8e;border-radius:2px"></div>
<svg style="left:1231px;top:1034px" width="32" height="31" viewBox="0 0 32 31"><rect x="0" y="0" width="22" height="22" rx="2" fill="#f0f0f2"/><path d="M4 17V4H17" stroke="#c83a30" stroke-width="2.4" stroke-dasharray="2.5 1.5" fill="none"/><path d="M10 12V26M10 20L26 20" stroke="#909090" stroke-width="2"/><circle cx="28" cy="17" r="3" fill="none" stroke="#3a8ad8" stroke-width="1.6"/><circle cx="17" cy="27" r="3" fill="none" stroke="#3a8ad8" stroke-width="1.6"/><path d="M17 24L21 19L25 17" stroke="#3a8ad8" stroke-width="1.4" fill="none"/></svg>
<svg style="left:1287px;top:1035px" width="28" height="28" viewBox="0 0 28 28"><circle cx="14" cy="14" r="13.5" fill="#f2c070"/><path d="M0.8 18Q7 9 14 12Q21 15 27.2 12A13.5 13.5 0 0 1 0.8 18Z" fill="#8890c8"/></svg>
<svg style="left:1342px;top:1038px" width="30" height="23" viewBox="0 0 30 23"><rect x="0" y="0" width="30" height="23" fill="#dce8f4" stroke="#a8b8c8"/><path d="M2 20L7 18L10 5L13 17L17 15L20 8L23 18L28 19V21H2Z" fill="#9ac8ec" stroke="#3a8ad0" stroke-width="0.9"/></svg>
<svg style="left:1397px;top:1034px" width="31" height="31" viewBox="0 0 31 31"><rect x="0" y="0" width="30" height="30" fill="#1a8ad4"/><path d="M9 9H19V13M7 13H21V23H7Z" fill="none" stroke="#cfe8f8" stroke-width="1.2"/><rect x="15" y="14" width="6" height="9" fill="none" stroke="#cfe8f8" stroke-width="1.2"/></svg>
<svg style="left:1452px;top:1035px" width="30" height="30" viewBox="0 0 30 30"><circle cx="15" cy="15" r="14.5" fill="#e33b2e"/><path d="M15 15L2.4 22.3A14.5 14.5 0 0 1 2.4 7.7Z" fill="#e33b2e"/><path d="M15 15L27.6 7.7A14.5 14.5 0 0 1 15 29.5Z" fill="#fbc02d"/><path d="M15 15L15 29.5A14.5 14.5 0 0 1 2.4 22.3Z" fill="#2a9d4a"/><path d="M15 15L2.4 22.3A14.5 14.5 0 0 1 1 13Z" fill="#2a9d4a"/><circle cx="15" cy="15" r="6.5" fill="#fff"/><circle cx="15" cy="15" r="5" fill="#3a78e0"/></svg>
<svg style="left:1468px;top:1030px" width="22" height="22" viewBox="0 0 22 22"><circle cx="10" cy="10" r="9.5" fill="#14968c"/><text x="10" y="14.5" font-family="Liberation Sans" font-size="12" fill="#dff" text-anchor="middle">E</text></svg>
<div class="a" style="left:1463px;top:1070px;width:8px;height:4px;background:#8a8a8e;border-radius:2px"></div>
<svg style="left:1507px;top:1034px" width="29" height="30" viewBox="0 0 29 30"><rect x="0" y="0" width="28.5" height="29.5" rx="9" fill="#2d8cff"/><rect x="5" y="10" width="12" height="10" rx="2" fill="#fff"/><path d="M18 13L24 9.5V20.5L18 17Z" fill="#fff"/></svg>
<div class="a" style="left:1518px;top:1070px;width:8px;height:4px;background:#8a8a8e;border-radius:2px"></div>
<svg style="left:1575px;top:1043px" width="18" height="12" viewBox="0 0 18 12"><path d="M1 10L9 2L17 10" stroke="#f0f0f0" stroke-width="1.4" fill="none"/></svg>
<svg style="left:1603px;top:1039px" width="22" height="22" viewBox="0 0 22 22"><path d="M3 10A8 8 0 0 1 18 6M18 2V6H14M19 12A8 8 0 0 1 4 16M4 20V16H8" stroke="#f0f0f0" stroke-width="1.4" fill="none"/><circle cx="16.5" cy="15.5" r="4.5" fill="#1a78e0"/></svg>
<svg style="left:1642px;top:1040px" width="14" height="21" viewBox="0 0 14 21"><rect x="3.5" y="0.8" width="7" height="12" rx="3.5" fill="none" stroke="#86d4dc" stroke-width="1.6"/><path d="M1 9Q1 16 7 16Q13 16 13 9M7 16V20" stroke="#86d4dc" stroke-width="1.6" fill="none"/></svg>
<div class="t" style="left:1683px;top:1045.0px;font-size:13px;color:#f0f0f0">ENG</div>
<svg style="left:1733px;top:1040px" width="22" height="21" viewBox="0 0 22 21"><rect x="1" y="3" width="15" height="11" fill="none" stroke="#f0f0f0" stroke-width="1.3"/><path d="M6 19H13M9.5 14V19" stroke="#f0f0f0" stroke-width="1.3"/><rect x="16" y="1" width="4" height="5" fill="none" stroke="#f0f0f0" stroke-width="1.2"/><path d="M18 6V20" stroke="#f0f0f0" stroke-width="1.3"/></svg>
<svg style="left:1763px;top:1040px" width="22" height="21" viewBox="0 0 22 21"><path d="M2 7H6L11 2V19L6 14H2Z" fill="none" stroke="#f0f0f0" stroke-width="1.3"/><path d="M14 7Q16 10.5 14 14M17 5Q20.5 10.5 17 16" stroke="#f0f0f0" stroke-width="1.3" fill="none"/><path d="M20 3Q25 10.5 20 18" stroke="#777" stroke-width="1.1" fill="none"/></svg>
<div class="t" style="left:1814px;top:1032.9px;font-size:14.3px;color:#f4f4f4">9:41 AM</div>
<div class="t" style="left:1808px;top:1052.9px;font-size:14.3px;color:#f4f4f4">2/1/2023</div>
<svg style="left:1878px;top:1041px" width="19" height="19" viewBox="0 0 19 19"><path d="M10 1A8.5 8.5 0 1 0 18 13A7 7 0 0 1 10 1Z" fill="none" stroke="#f0f0f0" stroke-width="1.3"/></svg>
<svg style="left:1600px;top:0px" width="320" height="180" viewBox="0 0 320 180">
<defs>
<filter id="bl1" x="-20%" y="-20%" width="140%" height="140%"><feGaussianBlur stdDeviation="1"/></filter>
<filter id="bl06" x="-20%" y="-20%" width="140%" height="140%"><feGaussianBlur stdDeviation="1.3"/></filter><filter id="bl09" x="-20%" y="-20%" width="140%" height="140%"><feGaussianBlur stdDeviation="0.9"/></filter>
<filter id="bl4" x="-30%" y="-30%" width="160%" height="160%"><feGaussianBlur stdDeviation="6"/></filter>
<clipPath id="camclip"><rect width="320" height="180"/></clipPath>
<clipPath id="cl1"><rect x="0" y="12" width="126" height="136"/></clipPath>
<clipPath id="cl2"><rect x="140" y="12" width="78" height="130"/></clipPath>
<clipPath id="cl3"><rect x="228" y="12" width="62" height="170"/></clipPath>
</defs>
<g clip-path="url(#camclip)">
<rect width="320" height="180" fill="#b0ac98"/>
<rect x="0" y="0" width="320" height="12" fill="#b4c0b4"/><rect x="40" y="0" width="6" height="8" fill="#e8f0e8"/>
<rect x="0" y="9" width="300" height="2" fill="#868a84"/>
<g filter="url(#bl06)">
<g clip-path="url(#cl1)"><rect x="0" y="12" width="126" height="136" fill="#dcd6c0"/><ellipse cx="40.8" cy="32.5" rx="3.8" ry="1.8" fill="#b89080" transform="rotate(24 40.8 32.5)"/><ellipse cx="46.1" cy="19.9" rx="3.3" ry="1.6" fill="#a8a488" transform="rotate(107 46.1 19.9)"/><ellipse cx="8.8" cy="24.3" rx="3.0" ry="4.4" fill="#a09c80" transform="rotate(57 8.8 24.3)"/><ellipse cx="79.5" cy="91.3" rx="1.7" ry="3.5" fill="#b08474" transform="rotate(56 79.5 91.3)"/><ellipse cx="5.9" cy="128.8" rx="2.5" ry="2.0" fill="#a09c80" transform="rotate(146 5.9 128.8)"/><ellipse cx="38.9" cy="123.0" rx="2.1" ry="3.5" fill="#8c8c70" transform="rotate(95 38.9 123.0)"/><ellipse cx="12.3" cy="108.8" rx="3.5" ry="3.7" fill="#909478" transform="rotate(174 12.3 108.8)"/><ellipse cx="67.0" cy="117.7" rx="3.1" ry="4.7" fill="#e4e0cc" transform="rotate(76 67.0 117.7)"/><ellipse cx="31.3" cy="36.4" rx="4.2" ry="1.8" fill="#ece8d8" transform="rotate(134 31.3 36.4)"/><ellipse cx="62.4" cy="58.7" rx="3.1" ry="3.6" fill="#a09c80" transform="rotate(30 62.4 58.7)"/><ellipse cx="64.5" cy="34.4" rx="2.7" ry="4.8" fill="#a8a488" transform="rotate(10 64.5 34.4)"/><ellipse cx="121.2" cy="22.6" rx="3.5" ry="4.3" fill="#e4e0cc" transform="rotate(87 121.2 22.6)"/><ellipse cx="87.6" cy="92.8" rx="3.5" ry="3.1" fill="#a09c80" transform="rotate(69 87.6 92.8)"/><ellipse cx="59.7" cy="102.3" rx="1.7" ry="4.0" fill="#7c7c64" transform="rotate(174 59.7 102.3)"/><ellipse cx="103.6" cy="50.7" rx="2.9" ry="3.8" fill="#b08474" transform="rotate(118 103.6 50.7)"/><ellipse cx="44.8" cy="95.1" rx="3.2" ry="2.3" fill="#ece8d8" transform="rotate(33 44.8 95.1)"/><ellipse cx="93.0" cy="66.1" rx="4.7" ry="3.2" fill="#9a9a7e" transform="rotate(114 93.0 66.1)"/><ellipse cx="50.6" cy="49.8" rx="2.0" ry="3.0" fill="#b89080" transform="rotate(71 50.6 49.8)"/><ellipse cx="89.0" cy="146.2" rx="3.9" ry="2.8" fill="#8c8c70" transform="rotate(38 89.0 146.2)"/><ellipse cx="10.5" cy="32.6" rx="3.8" ry="1.5" fill="#7c7c64" transform="rotate(46 10.5 32.6)"/><ellipse cx="33.1" cy="12.6" rx="3.0" ry="2.8" fill="#7c7c64" transform="rotate(81 33.1 12.6)"/><ellipse cx="120.1" cy="105.9" rx="3.3" ry="3.7" fill="#b08474" transform="rotate(116 120.1 105.9)"/><ellipse cx="113.3" cy="118.1" rx="4.6" ry="4.3" fill="#a8a488" transform="rotate(101 113.3 118.1)"/><ellipse cx="50.3" cy="26.1" rx="3.7" ry="1.7" fill="#a09c80" transform="rotate(53 50.3 26.1)"/><ellipse cx="55.5" cy="27.0" rx="3.6" ry="1.9" fill="#7c7c64" transform="rotate(38 55.5 27.0)"/><ellipse cx="67.6" cy="141.1" rx="3.6" ry="1.7" fill="#8c8c70" transform="rotate(157 67.6 141.1)"/><ellipse cx="47.4" cy="98.3" rx="4.8" ry="3.6" fill="#909478" transform="rotate(31 47.4 98.3)"/><ellipse cx="14.5" cy="78.4" rx="4.9" ry="3.2" fill="#ece8d8" transform="rotate(21 14.5 78.4)"/><ellipse cx="18.2" cy="114.0" rx="4.1" ry="3.2" fill="#9a9a7e" transform="rotate(132 18.2 114.0)"/><ellipse cx="2.9" cy="141.3" rx="3.3" ry="2.0" fill="#b89080" transform="rotate(6 2.9 141.3)"/><ellipse cx="95.5" cy="52.5" rx="3.8" ry="1.8" fill="#ece8d8" transform="rotate(132 95.5 52.5)"/><ellipse cx="46.2" cy="34.7" rx="4.2" ry="3.4" fill="#b89080" transform="rotate(84 46.2 34.7)"/><ellipse cx="80.2" cy="95.4" rx="4.3" ry="4.2" fill="#8c8c70" transform="rotate(61 80.2 95.4)"/><ellipse cx="103.1" cy="112.6" rx="2.3" ry="3.3" fill="#e4e0cc" transform="rotate(7 103.1 112.6)"/><ellipse cx="124.7" cy="119.5" rx="3.2" ry="2.2" fill="#7c7c64" transform="rotate(88 124.7 119.5)"/><ellipse cx="56.4" cy="139.4" rx="5.0" ry="4.8" fill="#e4e0cc" transform="rotate(20 56.4 139.4)"/><ellipse cx="27.8" cy="42.9" rx="2.2" ry="2.2" fill="#7c7c64" transform="rotate(156 27.8 42.9)"/><ellipse cx="105.9" cy="77.2" rx="3.8" ry="4.3" fill="#a09c80" transform="rotate(169 105.9 77.2)"/><ellipse cx="15.1" cy="64.8" rx="4.0" ry="2.2" fill="#9a9a7e" transform="rotate(111 15.1 64.8)"/><ellipse cx="99.4" cy="57.2" rx="4.3" ry="4.9" fill="#a8a488" transform="rotate(118 99.4 57.2)"/><ellipse cx="50.6" cy="140.8" rx="4.0" ry="2.1" fill="#9a9a7e" transform="rotate(7 50.6 140.8)"/><ellipse cx="19.0" cy="135.1" rx="4.3" ry="2.0" fill="#7c7c64" transform="rotate(121 19.0 135.1)"/><ellipse cx="82.8" cy="59.7" rx="3.4" ry="2.0" fill="#b08474" transform="rotate(166 82.8 59.7)"/><ellipse cx="12.9" cy="113.9" rx="2.0" ry="5.0" fill="#8c8c70" transform="rotate(54 12.9 113.9)"/><ellipse cx="3.5" cy="40.9" rx="3.3" ry="4.2" fill="#e4e0cc" transform="rotate(66 3.5 40.9)"/><ellipse cx="68.6" cy="125.5" rx="1.7" ry="4.1" fill="#909478" transform="rotate(169 68.6 125.5)"/><ellipse cx="73.5" cy="135.0" rx="3.0" ry="4.7" fill="#b89080" transform="rotate(33 73.5 135.0)"/><ellipse cx="67.0" cy="83.2" rx="1.6" ry="3.0" fill="#9a9a7e" transform="rotate(155 67.0 83.2)"/><ellipse cx="0.5" cy="120.7" rx="2.1" ry="3.2" fill="#a09c80" transform="rotate(142 0.5 120.7)"/><ellipse cx="7.8" cy="104.8" rx="3.4" ry="3.2" fill="#a09c80" transform="rotate(143 7.8 104.8)"/><ellipse cx="7.2" cy="38.0" rx="1.6" ry="1.8" fill="#909478" transform="rotate(143 7.2 38.0)"/><ellipse cx="3.5" cy="133.6" rx="1.7" ry="2.6" fill="#b89080" transform="rotate(155 3.5 133.6)"/><ellipse cx="64.5" cy="106.2" rx="3.1" ry="3.4" fill="#909478" transform="rotate(129 64.5 106.2)"/><ellipse cx="118.6" cy="107.1" rx="4.6" ry="4.8" fill="#ece8d8" transform="rotate(143 118.6 107.1)"/><ellipse cx="112.5" cy="39.6" rx="3.1" ry="3.0" fill="#a8a488" transform="rotate(113 112.5 39.6)"/><ellipse cx="39.8" cy="103.3" rx="3.0" ry="2.2" fill="#ece8d8" transform="rotate(31 39.8 103.3)"/><ellipse cx="113.0" cy="33.0" rx="4.0" ry="3.8" fill="#9a9a7e" transform="rotate(64 113.0 33.0)"/><ellipse cx="111.2" cy="143.6" rx="2.3" ry="4.8" fill="#a8a488" transform="rotate(124 111.2 143.6)"/><ellipse cx="20.5" cy="102.8" rx="2.3" ry="4.0" fill="#b89080" transform="rotate(103 20.5 102.8)"/><ellipse cx="42.7" cy="38.6" rx="2.6" ry="4.0" fill="#b08474" transform="rotate(86 42.7 38.6)"/><ellipse cx="69.8" cy="71.9" rx="1.6" ry="2.7" fill="#7c7c64" transform="rotate(75 69.8 71.9)"/><ellipse cx="64.5" cy="20.7" rx="4.9" ry="4.3" fill="#a09c80" transform="rotate(21 64.5 20.7)"/><ellipse cx="33.5" cy="17.4" rx="4.2" ry="2.4" fill="#9a9a7e" transform="rotate(108 33.5 17.4)"/><ellipse cx="107.0" cy="103.9" rx="4.8" ry="2.9" fill="#b89080" transform="rotate(131 107.0 103.9)"/><ellipse cx="71.9" cy="107.3" rx="1.8" ry="1.7" fill="#9a9a7e" transform="rotate(108 71.9 107.3)"/><ellipse cx="112.8" cy="48.6" rx="1.6" ry="1.8" fill="#ece8d8" transform="rotate(21 112.8 48.6)"/><ellipse cx="76.6" cy="42.2" rx="2.4" ry="1.9" fill="#b08474" transform="rotate(86 76.6 42.2)"/><ellipse cx="125.3" cy="68.8" rx="4.7" ry="3.7" fill="#b08474" transform="rotate(134 125.3 68.8)"/><ellipse cx="89.4" cy="139.6" rx="4.9" ry="2.4" fill="#9a9a7e" transform="rotate(51 89.4 139.6)"/><ellipse cx="117.5" cy="97.5" rx="3.4" ry="2.2" fill="#909478" transform="rotate(128 117.5 97.5)"/><ellipse cx="84.7" cy="48.8" rx="4.3" ry="5.0" fill="#b08474" transform="rotate(3 84.7 48.8)"/><ellipse cx="2.3" cy="80.8" rx="4.9" ry="3.3" fill="#8c8c70" transform="rotate(114 2.3 80.8)"/><ellipse cx="13.4" cy="123.4" rx="3.0" ry="3.2" fill="#a8a488" transform="rotate(129 13.4 123.4)"/><ellipse cx="38.8" cy="41.3" rx="2.3" ry="2.2" fill="#9a9a7e" transform="rotate(103 38.8 41.3)"/><ellipse cx="124.7" cy="145.5" rx="4.4" ry="1.5" fill="#ece8d8" transform="rotate(110 124.7 145.5)"/><ellipse cx="20.6" cy="23.5" rx="4.4" ry="4.5" fill="#ece8d8" transform="rotate(153 20.6 23.5)"/><ellipse cx="30.5" cy="51.9" rx="3.1" ry="2.1" fill="#909478" transform="rotate(0 30.5 51.9)"/><ellipse cx="33.2" cy="142.8" rx="4.9" ry="3.4" fill="#8c8c70" transform="rotate(8 33.2 142.8)"/><ellipse cx="121.7" cy="54.1" rx="2.7" ry="1.5" fill="#a8a488" transform="rotate(21 121.7 54.1)"/><ellipse cx="59.8" cy="80.4" rx="2.2" ry="3.3" fill="#b08474" transform="rotate(23 59.8 80.4)"/><ellipse cx="33.3" cy="24.2" rx="2.9" ry="1.6" fill="#b08474" transform="rotate(76 33.3 24.2)"/><ellipse cx="38.3" cy="43.7" rx="3.5" ry="3.4" fill="#9a9a7e" transform="rotate(168 38.3 43.7)"/><ellipse cx="112.5" cy="118.6" rx="3.6" ry="4.2" fill="#909478" transform="rotate(38 112.5 118.6)"/><ellipse cx="35.8" cy="96.1" rx="2.0" ry="4.4" fill="#b89080" transform="rotate(160 35.8 96.1)"/><ellipse cx="54.1" cy="107.3" rx="3.3" ry="4.7" fill="#b89080" transform="rotate(145 54.1 107.3)"/><ellipse cx="105.2" cy="121.4" rx="4.4" ry="3.5" fill="#8c8c70" transform="rotate(21 105.2 121.4)"/><ellipse cx="3.9" cy="30.1" rx="2.8" ry="1.9" fill="#909478" transform="rotate(142 3.9 30.1)"/><ellipse cx="6.4" cy="14.6" rx="3.4" ry="2.4" fill="#ece8d8" transform="rotate(0 6.4 14.6)"/><ellipse cx="57.6" cy="21.5" rx="4.8" ry="4.6" fill="#a09c80" transform="rotate(168 57.6 21.5)"/><ellipse cx="66.3" cy="113.4" rx="3.2" ry="4.3" fill="#ece8d8" transform="rotate(60 66.3 113.4)"/><ellipse cx="91.9" cy="39.9" rx="4.1" ry="4.9" fill="#909478" transform="rotate(97 91.9 39.9)"/><ellipse cx="9.7" cy="135.8" rx="2.5" ry="1.7" fill="#8c8c70" transform="rotate(19 9.7 135.8)"/><ellipse cx="75.6" cy="57.1" rx="3.8" ry="3.9" fill="#7c7c64" transform="rotate(145 75.6 57.1)"/><ellipse cx="16.8" cy="77.6" rx="3.2" ry="4.9" fill="#a09c80" transform="rotate(177 16.8 77.6)"/><ellipse cx="27.4" cy="78.6" rx="4.0" ry="2.5" fill="#909478" transform="rotate(119 27.4 78.6)"/><ellipse cx="96.7" cy="147.1" rx="3.4" ry="2.6" fill="#a09c80" transform="rotate(121 96.7 147.1)"/><ellipse cx="2.2" cy="74.4" rx="4.4" ry="4.9" fill="#909478" transform="rotate(68 2.2 74.4)"/><ellipse cx="48.7" cy="136.7" rx="4.8" ry="1.8" fill="#a09c80" transform="rotate(36 48.7 136.7)"/><ellipse cx="94.2" cy="47.6" rx="2.8" ry="3.6" fill="#b89080" transform="rotate(71 94.2 47.6)"/><ellipse cx="111.7" cy="107.7" rx="2.3" ry="4.6" fill="#909478" transform="rotate(100 111.7 107.7)"/><ellipse cx="3.1" cy="12.5" rx="3.2" ry="3.1" fill="#ece8d8" transform="rotate(36 3.1 12.5)"/><ellipse cx="52.4" cy="63.2" rx="1.9" ry="2.7" fill="#e4e0cc" transform="rotate(86 52.4 63.2)"/><ellipse cx="105.7" cy="28.3" rx="4.7" ry="4.0" fill="#ece8d8" transform="rotate(64 105.7 28.3)"/><ellipse cx="46.9" cy="65.4" rx="5.0" ry="3.6" fill="#e4e0cc" transform="rotate(109 46.9 65.4)"/><ellipse cx="95.2" cy="128.2" rx="2.5" ry="1.7" fill="#ece8d8" transform="rotate(162 95.2 128.2)"/><ellipse cx="117.9" cy="45.9" rx="2.4" ry="3.3" fill="#8c8c70" transform="rotate(95 117.9 45.9)"/><ellipse cx="98.9" cy="70.2" rx="1.6" ry="4.2" fill="#a8a488" transform="rotate(141 98.9 70.2)"/><ellipse cx="69.2" cy="109.9" rx="1.7" ry="4.1" fill="#909478" transform="rotate(157 69.2 109.9)"/><ellipse cx="94.8" cy="99.7" rx="2.5" ry="1.7" fill="#b89080" transform="rotate(32 94.8 99.7)"/><ellipse cx="21.5" cy="68.4" rx="2.5" ry="2.4" fill="#ece8d8" transform="rotate(103 21.5 68.4)"/><ellipse cx="82.7" cy="52.9" rx="3.5" ry="2.9" fill="#9a9a7e" transform="rotate(164 82.7 52.9)"/><ellipse cx="20.4" cy="40.3" rx="4.7" ry="3.2" fill="#8c8c70" transform="rotate(115 20.4 40.3)"/><ellipse cx="114.2" cy="147.5" rx="3.1" ry="2.0" fill="#8c8c70" transform="rotate(62 114.2 147.5)"/><ellipse cx="11.4" cy="58.5" rx="1.8" ry="2.3" fill="#ece8d8" transform="rotate(145 11.4 58.5)"/><ellipse cx="25.5" cy="14.7" rx="4.5" ry="2.8" fill="#b89080" transform="rotate(53 25.5 14.7)"/><ellipse cx="47.5" cy="58.0" rx="1.7" ry="2.5" fill="#e4e0cc" transform="rotate(32 47.5 58.0)"/><ellipse cx="86.5" cy="84.0" rx="4.3" ry="4.5" fill="#a09c80" transform="rotate(69 86.5 84.0)"/><ellipse cx="113.0" cy="64.3" rx="3.8" ry="3.0" fill="#ece8d8" transform="rotate(5 113.0 64.3)"/><ellipse cx="16.0" cy="69.8" rx="4.2" ry="4.3" fill="#7c7c64" transform="rotate(125 16.0 69.8)"/><ellipse cx="0.0" cy="65.2" rx="4.7" ry="4.4" fill="#909478" transform="rotate(114 0.0 65.2)"/><ellipse cx="31.3" cy="26.8" rx="2.0" ry="3.3" fill="#a09c80" transform="rotate(179 31.3 26.8)"/><ellipse cx="81.6" cy="116.0" rx="3.1" ry="3.4" fill="#b08474" transform="rotate(0 81.6 116.0)"/><ellipse cx="98.6" cy="43.6" rx="4.7" ry="3.8" fill="#ece8d8" transform="rotate(32 98.6 43.6)"/><ellipse cx="78.9" cy="83.8" rx="3.0" ry="4.2" fill="#a09c80" transform="rotate(18 78.9 83.8)"/><ellipse cx="37.8" cy="140.3" rx="2.2" ry="2.4" fill="#7c7c64" transform="rotate(0 37.8 140.3)"/><ellipse cx="1.3" cy="53.0" rx="3.1" ry="4.9" fill="#8c8c70" transform="rotate(121 1.3 53.0)"/><ellipse cx="66.3" cy="86.4" rx="1.6" ry="2.9" fill="#ece8d8" transform="rotate(14 66.3 86.4)"/><ellipse cx="2.7" cy="79.8" rx="3.9" ry="3.0" fill="#ece8d8" transform="rotate(58 2.7 79.8)"/><ellipse cx="84.1" cy="137.8" rx="2.3" ry="1.6" fill="#e4e0cc" transform="rotate(107 84.1 137.8)"/><ellipse cx="45.7" cy="65.9" rx="1.5" ry="2.5" fill="#b89080" transform="rotate(17 45.7 65.9)"/><ellipse cx="25.9" cy="143.9" rx="2.6" ry="4.4" fill="#8c8c70" transform="rotate(119 25.9 143.9)"/><ellipse cx="27.9" cy="115.4" rx="2.5" ry="4.8" fill="#909478" transform="rotate(156 27.9 115.4)"/><ellipse cx="23.6" cy="42.4" rx="3.0" ry="3.8" fill="#7c7c64" transform="rotate(37 23.6 42.4)"/><ellipse cx="116.2" cy="19.4" rx="1.6" ry="3.6" fill="#a8a488" transform="rotate(13 116.2 19.4)"/><ellipse cx="89.4" cy="37.0" rx="3.1" ry="4.0" fill="#e4e0cc" transform="rotate(28 89.4 37.0)"/><ellipse cx="125.7" cy="138.7" rx="2.7" ry="2.1" fill="#b89080" transform="rotate(119 125.7 138.7)"/><ellipse cx="4.0" cy="102.4" rx="2.8" ry="2.8" fill="#e4e0cc" transform="rotate(113 4.0 102.4)"/><ellipse cx="21.3" cy="12.4" rx="2.5" ry="2.7" fill="#a09c80" transform="rotate(143 21.3 12.4)"/><ellipse cx="121.5" cy="40.2" rx="2.7" ry="4.4" fill="#a8a488" transform="rotate(22 121.5 40.2)"/><ellipse cx="6.2" cy="76.4" rx="2.8" ry="4.7" fill="#8c8c70" transform="rotate(82 6.2 76.4)"/><ellipse cx="45.9" cy="134.0" rx="1.6" ry="2.9" fill="#a8a488" transform="rotate(10 45.9 134.0)"/><ellipse cx="47.3" cy="75.1" rx="4.3" ry="1.7" fill="#8c8c70" transform="rotate(16 47.3 75.1)"/><ellipse cx="113.2" cy="58.1" rx="2.5" ry="4.9" fill="#7c7c64" transform="rotate(11 113.2 58.1)"/><ellipse cx="33.0" cy="109.5" rx="2.6" ry="2.5" fill="#b08474" transform="rotate(152 33.0 109.5)"/><ellipse cx="115.5" cy="98.2" rx="4.8" ry="1.6" fill="#8c8c70" transform="rotate(27 115.5 98.2)"/><ellipse cx="59.9" cy="142.1" rx="4.8" ry="2.9" fill="#ece8d8" transform="rotate(110 59.9 142.1)"/><ellipse cx="102.7" cy="30.0" rx="3.2" ry="1.5" fill="#ece8d8" transform="rotate(177 102.7 30.0)"/><ellipse cx="97.4" cy="94.6" rx="2.6" ry="2.6" fill="#e4e0cc" transform="rotate(152 97.4 94.6)"/><ellipse cx="10.0" cy="38.8" rx="4.1" ry="2.4" fill="#a09c80" transform="rotate(166 10.0 38.8)"/><ellipse cx="4.3" cy="87.2" rx="2.6" ry="4.9" fill="#a09c80" transform="rotate(18 4.3 87.2)"/><ellipse cx="33.4" cy="23.4" rx="1.8" ry="3.2" fill="#909478" transform="rotate(44 33.4 23.4)"/><ellipse cx="29.5" cy="68.7" rx="3.7" ry="3.9" fill="#b89080" transform="rotate(170 29.5 68.7)"/><ellipse cx="95.7" cy="118.0" rx="2.5" ry="2.5" fill="#ece8d8" transform="rotate(95 95.7 118.0)"/><ellipse cx="32.0" cy="47.4" rx="3.0" ry="2.2" fill="#8c8c70" transform="rotate(39 32.0 47.4)"/><ellipse cx="35.5" cy="135.4" rx="2.2" ry="1.7" fill="#ece8d8" transform="rotate(62 35.5 135.4)"/><ellipse cx="63.9" cy="43.5" rx="4.3" ry="3.8" fill="#b08474" transform="rotate(26 63.9 43.5)"/><ellipse cx="0.6" cy="132.1" rx="2.3" ry="3.1" fill="#e4e0cc" transform="rotate(10 0.6 132.1)"/><ellipse cx="110.5" cy="43.7" rx="1.7" ry="3.6" fill="#7c7c64" transform="rotate(49 110.5 43.7)"/><ellipse cx="117.2" cy="62.6" rx="4.5" ry="3.1" fill="#ece8d8" transform="rotate(170 117.2 62.6)"/><ellipse cx="119.2" cy="26.4" rx="3.6" ry="3.7" fill="#8c8c70" transform="rotate(9 119.2 26.4)"/><ellipse cx="46.5" cy="31.2" rx="2.2" ry="2.4" fill="#7c7c64" transform="rotate(166 46.5 31.2)"/><ellipse cx="115.2" cy="122.8" rx="4.4" ry="2.9" fill="#e4e0cc" transform="rotate(47 115.2 122.8)"/><ellipse cx="78.2" cy="22.6" rx="1.6" ry="3.2" fill="#909478" transform="rotate(16 78.2 22.6)"/><ellipse cx="51.4" cy="120.2" rx="3.8" ry="2.0" fill="#b89080" transform="rotate(23 51.4 120.2)"/><ellipse cx="82.3" cy="66.1" rx="2.4" ry="5.0" fill="#ece8d8" transform="rotate(106 82.3 66.1)"/><ellipse cx="120.1" cy="54.5" rx="3.5" ry="2.8" fill="#a8a488" transform="rotate(4 120.1 54.5)"/><ellipse cx="108.9" cy="147.5" rx="2.8" ry="2.2" fill="#a8a488" transform="rotate(52 108.9 147.5)"/><ellipse cx="118.7" cy="71.0" rx="2.0" ry="1.9" fill="#a09c80" transform="rotate(103 118.7 71.0)"/><ellipse cx="72.8" cy="61.6" rx="4.2" ry="2.0" fill="#b08474" transform="rotate(141 72.8 61.6)"/><ellipse cx="18.0" cy="121.7" rx="2.9" ry="3.5" fill="#e4e0cc" transform="rotate(129 18.0 121.7)"/><ellipse cx="21.6" cy="59.3" rx="2.1" ry="2.1" fill="#a09c80" transform="rotate(27 21.6 59.3)"/><ellipse cx="48.4" cy="114.5" rx="4.3" ry="4.3" fill="#ece8d8" transform="rotate(32 48.4 114.5)"/><ellipse cx="105.5" cy="17.9" rx="4.7" ry="2.6" fill="#7c7c64" transform="rotate(162 105.5 17.9)"/><ellipse cx="48.9" cy="135.0" rx="3.7" ry="4.4" fill="#9a9a7e" transform="rotate(163 48.9 135.0)"/><ellipse cx="99.0" cy="42.2" rx="2.9" ry="4.5" fill="#909478" transform="rotate(46 99.0 42.2)"/><ellipse cx="71.2" cy="17.7" rx="4.8" ry="2.0" fill="#e4e0cc" transform="rotate(31 71.2 17.7)"/><ellipse cx="18.8" cy="144.0" rx="4.4" ry="2.2" fill="#b89080" transform="rotate(172 18.8 144.0)"/><ellipse cx="4.8" cy="126.0" rx="1.9" ry="3.6" fill="#b89080" transform="rotate(160 4.8 126.0)"/><ellipse cx="98.0" cy="100.3" rx="2.6" ry="2.4" fill="#a8a488" transform="rotate(168 98.0 100.3)"/><ellipse cx="46.3" cy="80.5" rx="2.1" ry="1.5" fill="#909478" transform="rotate(119 46.3 80.5)"/><ellipse cx="29.6" cy="115.8" rx="4.2" ry="3.1" fill="#9a9a7e" transform="rotate(121 29.6 115.8)"/><ellipse cx="50.4" cy="21.1" rx="2.8" ry="2.8" fill="#909478" transform="rotate(129 50.4 21.1)"/><ellipse cx="64.3" cy="17.5" rx="3.7" ry="1.8" fill="#e4e0cc" transform="rotate(130 64.3 17.5)"/><ellipse cx="10.1" cy="114.3" rx="4.6" ry="3.8" fill="#9a9a7e" transform="rotate(6 10.1 114.3)"/><ellipse cx="108.0" cy="147.5" rx="4.1" ry="4.4" fill="#8c8c70" transform="rotate(33 108.0 147.5)"/><ellipse cx="123.7" cy="78.9" rx="4.8" ry="4.7" fill="#9a9a7e" transform="rotate(175 123.7 78.9)"/><ellipse cx="99.3" cy="138.6" rx="1.7" ry="2.7" fill="#ece8d8" transform="rotate(40 99.3 138.6)"/><ellipse cx="40.8" cy="95.4" rx="4.7" ry="3.1" fill="#ece8d8" transform="rotate(128 40.8 95.4)"/><ellipse cx="121.5" cy="77.3" rx="3.6" ry="3.7" fill="#8c8c70" transform="rotate(81 121.5 77.3)"/><ellipse cx="46.9" cy="39.1" rx="2.9" ry="3.7" fill="#ece8d8" transform="rotate(173 46.9 39.1)"/><ellipse cx="41.3" cy="63.3" rx="4.3" ry="2.4" fill="#b89080" transform="rotate(12 41.3 63.3)"/><ellipse cx="80.2" cy="60.9" rx="4.6" ry="3.4" fill="#7c7c64" transform="rotate(176 80.2 60.9)"/><ellipse cx="111.2" cy="26.2" rx="5.0" ry="3.7" fill="#a8a488" transform="rotate(95 111.2 26.2)"/><ellipse cx="33.4" cy="146.7" rx="3.5" ry="2.8" fill="#a09c80" transform="rotate(113 33.4 146.7)"/><ellipse cx="29.0" cy="95.7" rx="4.9" ry="2.5" fill="#b89080" transform="rotate(64 29.0 95.7)"/><ellipse cx="39.1" cy="143.4" rx="4.5" ry="4.7" fill="#e4e0cc" transform="rotate(0 39.1 143.4)"/><ellipse cx="94.1" cy="42.1" rx="2.5" ry="3.7" fill="#a8a488" transform="rotate(131 94.1 42.1)"/><ellipse cx="45.9" cy="18.5" rx="3.2" ry="3.6" fill="#b08474" transform="rotate(5 45.9 18.5)"/><ellipse cx="6.9" cy="89.1" rx="2.6" ry="3.3" fill="#b89080" transform="rotate(57 6.9 89.1)"/><ellipse cx="52.1" cy="53.0" rx="2.0" ry="2.8" fill="#909478" transform="rotate(40 52.1 53.0)"/><ellipse cx="17.0" cy="139.4" rx="2.4" ry="2.0" fill="#a09c80" transform="rotate(16 17.0 139.4)"/><ellipse cx="80.4" cy="130.5" rx="4.2" ry="2.9" fill="#ece8d8" transform="rotate(2 80.4 130.5)"/><ellipse cx="7.1" cy="123.6" rx="4.6" ry="3.6" fill="#7c7c64" transform="rotate(113 7.1 123.6)"/><ellipse cx="75.8" cy="82.4" rx="3.2" ry="2.1" fill="#b08474" transform="rotate(11 75.8 82.4)"/><ellipse cx="7.8" cy="15.4" rx="2.1" ry="2.1" fill="#a09c80" transform="rotate(3 7.8 15.4)"/><ellipse cx="77.2" cy="101.3" rx="2.2" ry="2.9" fill="#b89080" transform="rotate(155 77.2 101.3)"/><ellipse cx="81.0" cy="100.1" rx="3.0" ry="3.6" fill="#b89080" transform="rotate(79 81.0 100.1)"/><ellipse cx="8.0" cy="97.1" rx="5.0" ry="4.0" fill="#909478" transform="rotate(137 8.0 97.1)"/><ellipse cx="0.8" cy="126.8" rx="4.1" ry="3.1" fill="#909478" transform="rotate(44 0.8 126.8)"/><ellipse cx="28.5" cy="26.3" rx="2.3" ry="1.6" fill="#e4e0cc" transform="rotate(177 28.5 26.3)"/><ellipse cx="118.8" cy="47.8" rx="1.7" ry="3.7" fill="#a8a488" transform="rotate(175 118.8 47.8)"/><ellipse cx="99.3" cy="83.2" rx="2.4" ry="3.7" fill="#8c8c70" transform="rotate(21 99.3 83.2)"/><ellipse cx="110.9" cy="14.1" rx="2.4" ry="2.3" fill="#8c8c70" transform="rotate(40 110.9 14.1)"/><ellipse cx="94.0" cy="56.5" rx="4.6" ry="2.6" fill="#8c8c70" transform="rotate(97 94.0 56.5)"/><ellipse cx="114.4" cy="97.8" rx="3.9" ry="3.8" fill="#b89080" transform="rotate(120 114.4 97.8)"/><ellipse cx="59.5" cy="84.2" rx="1.5" ry="1.6" fill="#8c8c70" transform="rotate(146 59.5 84.2)"/><ellipse cx="111.5" cy="119.3" rx="2.9" ry="3.5" fill="#7c7c64" transform="rotate(43 111.5 119.3)"/><ellipse cx="18.2" cy="15.7" rx="1.9" ry="4.8" fill="#e4e0cc" transform="rotate(36 18.2 15.7)"/><ellipse cx="88.3" cy="16.2" rx="2.0" ry="3.8" fill="#b08474" transform="rotate(178 88.3 16.2)"/><ellipse cx="8.5" cy="18.3" rx="4.5" ry="4.2" fill="#8c8c70" transform="rotate(136 8.5 18.3)"/><ellipse cx="112.3" cy="21.0" rx="4.5" ry="4.7" fill="#a8a488" transform="rotate(27 112.3 21.0)"/><ellipse cx="31.1" cy="39.6" rx="1.6" ry="4.8" fill="#a09c80" transform="rotate(161 31.1 39.6)"/><ellipse cx="79.7" cy="76.9" rx="2.0" ry="4.3" fill="#8c8c70" transform="rotate(75 79.7 76.9)"/><ellipse cx="40.2" cy="69.6" rx="1.6" ry="2.4" fill="#ece8d8" transform="rotate(12 40.2 69.6)"/><ellipse cx="90.2" cy="62.1" rx="2.6" ry="4.9" fill="#b89080" transform="rotate(121 90.2 62.1)"/><ellipse cx="107.3" cy="96.1" rx="1.6" ry="2.9" fill="#a8a488" transform="rotate(132 107.3 96.1)"/><ellipse cx="97.4" cy="59.2" rx="4.0" ry="3.4" fill="#8c8c70" transform="rotate(23 97.4 59.2)"/><ellipse cx="72.4" cy="51.0" rx="3.0" ry="3.3" fill="#ece8d8" transform="rotate(13 72.4 51.0)"/><ellipse cx="0.5" cy="78.8" rx="3.2" ry="4.3" fill="#9a9a7e" transform="rotate(126 0.5 78.8)"/><ellipse cx="74.7" cy="142.2" rx="3.3" ry="3.5" fill="#9a9a7e" transform="rotate(72 74.7 142.2)"/><ellipse cx="102.7" cy="139.6" rx="2.3" ry="2.1" fill="#a09c80" transform="rotate(125 102.7 139.6)"/><ellipse cx="99.3" cy="106.8" rx="4.3" ry="3.7" fill="#e4e0cc" transform="rotate(24 99.3 106.8)"/><ellipse cx="50.6" cy="65.7" rx="4.6" ry="1.8" fill="#b08474" transform="rotate(95 50.6 65.7)"/><ellipse cx="26.0" cy="47.8" rx="4.7" ry="3.3" fill="#a8a488" transform="rotate(161 26.0 47.8)"/><ellipse cx="29.4" cy="74.7" rx="3.4" ry="4.1" fill="#7c7c64" transform="rotate(165 29.4 74.7)"/><ellipse cx="4.3" cy="91.1" rx="3.3" ry="4.5" fill="#909478" transform="rotate(169 4.3 91.1)"/><ellipse cx="69.8" cy="56.0" rx="3.1" ry="3.9" fill="#ece8d8" transform="rotate(148 69.8 56.0)"/><ellipse cx="29.1" cy="57.4" rx="3.7" ry="3.9" fill="#b89080" transform="rotate(49 29.1 57.4)"/><ellipse cx="33.7" cy="114.6" rx="4.4" ry="3.7" fill="#9a9a7e" transform="rotate(63 33.7 114.6)"/><ellipse cx="91.1" cy="94.0" rx="2.7" ry="2.3" fill="#8c8c70" transform="rotate(66 91.1 94.0)"/><ellipse cx="122.9" cy="111.1" rx="1.9" ry="4.9" fill="#a09c80" transform="rotate(50 122.9 111.1)"/><ellipse cx="48.4" cy="145.8" rx="4.3" ry="4.1" fill="#a8a488" transform="rotate(70 48.4 145.8)"/><ellipse cx="24.7" cy="98.8" rx="1.9" ry="2.2" fill="#a8a488" transform="rotate(118 24.7 98.8)"/><ellipse cx="4.3" cy="66.3" rx="4.3" ry="3.9" fill="#b89080" transform="rotate(161 4.3 66.3)"/><ellipse cx="37.3" cy="15.0" rx="2.4" ry="4.1" fill="#b08474" transform="rotate(62 37.3 15.0)"/><ellipse cx="114.4" cy="70.5" rx="3.5" ry="4.1" fill="#a8a488" transform="rotate(58 114.4 70.5)"/><ellipse cx="84.2" cy="100.7" rx="4.6" ry="3.7" fill="#7c7c64" transform="rotate(58 84.2 100.7)"/><ellipse cx="85.6" cy="99.2" rx="3.1" ry="2.6" fill="#a09c80" transform="rotate(107 85.6 99.2)"/><ellipse cx="30.5" cy="66.4" rx="4.0" ry="2.0" fill="#a8a488" transform="rotate(123 30.5 66.4)"/><ellipse cx="57.4" cy="96.5" rx="2.9" ry="3.9" fill="#9a9a7e" transform="rotate(167 57.4 96.5)"/><ellipse cx="41.3" cy="13.4" rx="4.4" ry="4.7" fill="#a09c80" transform="rotate(9 41.3 13.4)"/><ellipse cx="31.7" cy="41.6" rx="4.0" ry="4.8" fill="#8c8c70" transform="rotate(132 31.7 41.6)"/><ellipse cx="43.9" cy="127.2" rx="3.1" ry="2.2" fill="#909478" transform="rotate(131 43.9 127.2)"/><ellipse cx="2.0" cy="119.8" rx="2.8" ry="2.7" fill="#909478" transform="rotate(53 2.0 119.8)"/><ellipse cx="124.8" cy="37.0" rx="3.3" ry="4.8" fill="#7c7c64" transform="rotate(91 124.8 37.0)"/><ellipse cx="80.3" cy="46.3" rx="2.8" ry="1.7" fill="#a09c80" transform="rotate(107 80.3 46.3)"/><ellipse cx="115.3" cy="97.5" rx="3.9" ry="3.5" fill="#a09c80" transform="rotate(57 115.3 97.5)"/><ellipse cx="38.2" cy="66.5" rx="4.8" ry="4.9" fill="#a8a488" transform="rotate(118 38.2 66.5)"/><ellipse cx="26.7" cy="29.6" rx="4.2" ry="4.3" fill="#8c8c70" transform="rotate(120 26.7 29.6)"/><ellipse cx="80.9" cy="110.0" rx="4.4" ry="2.0" fill="#a8a488" transform="rotate(119 80.9 110.0)"/><ellipse cx="125.5" cy="115.3" rx="3.8" ry="4.2" fill="#909478" transform="rotate(90 125.5 115.3)"/><ellipse cx="98.7" cy="43.3" rx="4.0" ry="3.9" fill="#a8a488" transform="rotate(173 98.7 43.3)"/><ellipse cx="23.4" cy="12.4" rx="4.0" ry="2.5" fill="#8c8c70" transform="rotate(167 23.4 12.4)"/><ellipse cx="38.0" cy="77.2" rx="3.0" ry="3.7" fill="#e4e0cc" transform="rotate(39 38.0 77.2)"/><ellipse cx="117.0" cy="128.2" rx="1.7" ry="4.4" fill="#e4e0cc" transform="rotate(35 117.0 128.2)"/><ellipse cx="66.9" cy="58.9" rx="3.5" ry="3.8" fill="#8c8c70" transform="rotate(18 66.9 58.9)"/><ellipse cx="82.7" cy="46.0" rx="1.9" ry="2.0" fill="#8c8c70" transform="rotate(47 82.7 46.0)"/><ellipse cx="97.8" cy="59.1" rx="2.0" ry="4.7" fill="#b89080" transform="rotate(42 97.8 59.1)"/><ellipse cx="76.8" cy="105.6" rx="4.9" ry="1.8" fill="#b89080" transform="rotate(162 76.8 105.6)"/><ellipse cx="105.7" cy="38.8" rx="3.9" ry="3.4" fill="#909478" transform="rotate(171 105.7 38.8)"/><ellipse cx="111.2" cy="87.5" rx="2.4" ry="2.3" fill="#9a9a7e" transform="rotate(121 111.2 87.5)"/><ellipse cx="62.1" cy="19.9" rx="3.1" ry="2.0" fill="#909478" transform="rotate(63 62.1 19.9)"/><ellipse cx="62.8" cy="85.4" rx="4.5" ry="1.5" fill="#e4e0cc" transform="rotate(119 62.8 85.4)"/><ellipse cx="87.7" cy="79.7" rx="2.5" ry="3.1" fill="#a8a488" transform="rotate(107 87.7 79.7)"/><ellipse cx="126.0" cy="103.9" rx="2.1" ry="2.8" fill="#b08474" transform="rotate(5 126.0 103.9)"/><ellipse cx="76.8" cy="104.8" rx="4.8" ry="2.7" fill="#a09c80" transform="rotate(130 76.8 104.8)"/><ellipse cx="61.0" cy="115.0" rx="2.0" ry="2.2" fill="#a8a488" transform="rotate(160 61.0 115.0)"/><ellipse cx="16.0" cy="24.8" rx="3.8" ry="2.7" fill="#b89080" transform="rotate(141 16.0 24.8)"/><ellipse cx="97.1" cy="40.7" rx="3.0" ry="3.0" fill="#b89080" transform="rotate(13 97.1 40.7)"/><ellipse cx="104.2" cy="51.8" rx="4.4" ry="2.9" fill="#b89080" transform="rotate(69 104.2 51.8)"/><ellipse cx="110.0" cy="58.9" rx="2.2" ry="3.2" fill="#a09c80" transform="rotate(84 110.0 58.9)"/><ellipse cx="24.2" cy="109.0" rx="1.9" ry="4.9" fill="#a09c80" transform="rotate(10 24.2 109.0)"/><ellipse cx="50.3" cy="87.4" rx="2.9" ry="3.5" fill="#a8a488" transform="rotate(76 50.3 87.4)"/><ellipse cx="13.7" cy="18.3" rx="4.4" ry="3.2" fill="#b08474" transform="rotate(128 13.7 18.3)"/><ellipse cx="114.6" cy="95.2" rx="3.7" ry="3.7" fill="#7c7c64" transform="rotate(174 114.6 95.2)"/><ellipse cx="10.5" cy="17.4" rx="3.7" ry="3.7" fill="#9a9a7e" transform="rotate(25 10.5 17.4)"/><ellipse cx="83.6" cy="130.2" rx="3.0" ry="1.9" fill="#b08474" transform="rotate(94 83.6 130.2)"/><ellipse cx="109.9" cy="30.9" rx="2.6" ry="4.0" fill="#ece8d8" transform="rotate(47 109.9 30.9)"/><ellipse cx="53.1" cy="55.3" rx="3.0" ry="3.7" fill="#b08474" transform="rotate(127 53.1 55.3)"/><ellipse cx="71.5" cy="17.4" rx="1.9" ry="4.3" fill="#7c7c64" transform="rotate(178 71.5 17.4)"/><ellipse cx="115.7" cy="72.7" rx="1.5" ry="2.9" fill="#7c7c64" transform="rotate(168 115.7 72.7)"/><ellipse cx="123.6" cy="76.7" rx="2.9" ry="1.9" fill="#909478" transform="rotate(54 123.6 76.7)"/><ellipse cx="112.9" cy="97.3" rx="3.0" ry="1.5" fill="#a09c80" transform="rotate(22 112.9 97.3)"/><ellipse cx="27.5" cy="28.5" rx="3.2" ry="2.5" fill="#7c7c64" transform="rotate(62 27.5 28.5)"/><ellipse cx="56.8" cy="113.2" rx="4.7" ry="2.8" fill="#9a9a7e" transform="rotate(21 56.8 113.2)"/><ellipse cx="36.9" cy="87.8" rx="3.2" ry="3.8" fill="#ece8d8" transform="rotate(13 36.9 87.8)"/><ellipse cx="90.4" cy="13.6" rx="1.6" ry="3.8" fill="#7c7c64" transform="rotate(20 90.4 13.6)"/><ellipse cx="49.0" cy="54.5" rx="3.6" ry="4.9" fill="#909478" transform="rotate(155 49.0 54.5)"/><ellipse cx="7.5" cy="62.0" rx="3.5" ry="3.0" fill="#9a9a7e" transform="rotate(37 7.5 62.0)"/><ellipse cx="121.8" cy="27.9" rx="4.8" ry="2.1" fill="#a8a488" transform="rotate(122 121.8 27.9)"/><ellipse cx="48.6" cy="118.9" rx="4.8" ry="4.2" fill="#7c7c64" transform="rotate(85 48.6 118.9)"/><ellipse cx="36.8" cy="20.2" rx="4.9" ry="4.0" fill="#7c7c64" transform="rotate(85 36.8 20.2)"/><ellipse cx="109.6" cy="110.7" rx="1.6" ry="2.0" fill="#ece8d8" transform="rotate(149 109.6 110.7)"/><ellipse cx="54.0" cy="132.8" rx="2.8" ry="3.9" fill="#7c7c64" transform="rotate(59 54.0 132.8)"/><ellipse cx="101.7" cy="50.5" rx="1.5" ry="2.4" fill="#a8a488" transform="rotate(40 101.7 50.5)"/><ellipse cx="73.9" cy="123.0" rx="4.6" ry="1.6" fill="#9a9a7e" transform="rotate(146 73.9 123.0)"/><ellipse cx="18.5" cy="144.7" rx="4.3" ry="3.4" fill="#909478" transform="rotate(88 18.5 144.7)"/><ellipse cx="67.4" cy="85.4" rx="3.2" ry="2.8" fill="#8c8c70" transform="rotate(79 67.4 85.4)"/><ellipse cx="76.5" cy="104.2" rx="3.1" ry="2.2" fill="#ece8d8" transform="rotate(150 76.5 104.2)"/><ellipse cx="94.6" cy="119.7" rx="3.1" ry="1.8" fill="#e4e0cc" transform="rotate(16 94.6 119.7)"/><ellipse cx="29.3" cy="90.8" rx="4.6" ry="4.6" fill="#b89080" transform="rotate(82 29.3 90.8)"/><ellipse cx="60.0" cy="92.1" rx="2.2" ry="2.2" fill="#9a9a7e" transform="rotate(179 60.0 92.1)"/><ellipse cx="36.5" cy="90.6" rx="2.8" ry="4.2" fill="#9a9a7e" transform="rotate(63 36.5 90.6)"/><ellipse cx="5.6" cy="147.6" rx="2.8" ry="1.9" fill="#909478" transform="rotate(20 5.6 147.6)"/><ellipse cx="19.7" cy="93.2" rx="2.7" ry="3.3" fill="#b08474" transform="rotate(24 19.7 93.2)"/><ellipse cx="4.2" cy="146.7" rx="4.5" ry="3.2" fill="#7c7c64" transform="rotate(54 4.2 146.7)"/><ellipse cx="33.0" cy="118.0" rx="3.0" ry="4.8" fill="#7c7c64" transform="rotate(155 33.0 118.0)"/><ellipse cx="121.4" cy="46.5" rx="1.6" ry="2.2" fill="#9a9a7e" transform="rotate(96 121.4 46.5)"/><ellipse cx="10.5" cy="18.9" rx="3.5" ry="4.5" fill="#909478" transform="rotate(124 10.5 18.9)"/><ellipse cx="119.3" cy="135.7" rx="1.7" ry="3.6" fill="#a8a488" transform="rotate(30 119.3 135.7)"/></g>
<g clip-path="url(#cl2)"><rect x="140" y="12" width="78" height="130" fill="#d8d2bc"/><ellipse cx="195.1" cy="23.7" rx="2.6" ry="2.3" fill="#a09c80" transform="rotate(171 195.1 23.7)"/><ellipse cx="179.5" cy="35.7" rx="4.5" ry="2.8" fill="#8c8c70" transform="rotate(56 179.5 35.7)"/><ellipse cx="153.4" cy="134.4" rx="4.8" ry="1.7" fill="#b89080" transform="rotate(7 153.4 134.4)"/><ellipse cx="205.3" cy="18.1" rx="4.3" ry="4.0" fill="#909478" transform="rotate(14 205.3 18.1)"/><ellipse cx="147.9" cy="53.3" rx="1.5" ry="2.2" fill="#ece8d8" transform="rotate(150 147.9 53.3)"/><ellipse cx="186.1" cy="110.5" rx="1.9" ry="2.6" fill="#ece8d8" transform="rotate(99 186.1 110.5)"/><ellipse cx="149.7" cy="74.6" rx="2.1" ry="2.3" fill="#9a9a7e" transform="rotate(173 149.7 74.6)"/><ellipse cx="209.6" cy="72.8" rx="4.7" ry="4.3" fill="#9a9a7e" transform="rotate(56 209.6 72.8)"/><ellipse cx="146.1" cy="92.4" rx="2.8" ry="4.1" fill="#909478" transform="rotate(24 146.1 92.4)"/><ellipse cx="212.2" cy="62.1" rx="1.6" ry="1.8" fill="#e4e0cc" transform="rotate(82 212.2 62.1)"/><ellipse cx="204.2" cy="74.1" rx="3.7" ry="2.0" fill="#8c8c70" transform="rotate(14 204.2 74.1)"/><ellipse cx="154.1" cy="70.7" rx="4.6" ry="3.0" fill="#9a9a7e" transform="rotate(68 154.1 70.7)"/><ellipse cx="172.6" cy="44.1" rx="1.6" ry="3.5" fill="#ece8d8" transform="rotate(85 172.6 44.1)"/><ellipse cx="202.7" cy="45.9" rx="1.9" ry="3.1" fill="#909478" transform="rotate(29 202.7 45.9)"/><ellipse cx="152.0" cy="78.7" rx="3.7" ry="4.3" fill="#8c8c70" transform="rotate(143 152.0 78.7)"/><ellipse cx="177.2" cy="49.2" rx="2.4" ry="2.2" fill="#e4e0cc" transform="rotate(110 177.2 49.2)"/><ellipse cx="217.3" cy="141.8" rx="4.7" ry="1.8" fill="#ece8d8" transform="rotate(106 217.3 141.8)"/><ellipse cx="209.9" cy="19.5" rx="4.0" ry="2.5" fill="#b08474" transform="rotate(113 209.9 19.5)"/><ellipse cx="202.9" cy="56.3" rx="2.0" ry="1.5" fill="#b89080" transform="rotate(73 202.9 56.3)"/><ellipse cx="154.5" cy="68.6" rx="4.7" ry="2.3" fill="#7c7c64" transform="rotate(46 154.5 68.6)"/><ellipse cx="150.8" cy="35.4" rx="4.2" ry="4.0" fill="#8c8c70" transform="rotate(153 150.8 35.4)"/><ellipse cx="146.2" cy="23.4" rx="3.6" ry="3.2" fill="#ece8d8" transform="rotate(44 146.2 23.4)"/><ellipse cx="156.1" cy="91.6" rx="4.0" ry="4.3" fill="#7c7c64" transform="rotate(78 156.1 91.6)"/><ellipse cx="155.8" cy="20.5" rx="4.1" ry="2.9" fill="#b08474" transform="rotate(132 155.8 20.5)"/><ellipse cx="203.2" cy="55.6" rx="4.4" ry="4.5" fill="#909478" transform="rotate(23 203.2 55.6)"/><ellipse cx="141.2" cy="130.3" rx="3.2" ry="4.6" fill="#ece8d8" transform="rotate(63 141.2 130.3)"/><ellipse cx="154.5" cy="120.1" rx="2.8" ry="2.1" fill="#e4e0cc" transform="rotate(147 154.5 120.1)"/><ellipse cx="186.4" cy="12.6" rx="3.3" ry="3.1" fill="#b89080" transform="rotate(18 186.4 12.6)"/><ellipse cx="149.4" cy="104.9" rx="4.4" ry="4.5" fill="#e4e0cc" transform="rotate(97 149.4 104.9)"/><ellipse cx="185.0" cy="128.7" rx="2.5" ry="1.9" fill="#909478" transform="rotate(114 185.0 128.7)"/><ellipse cx="180.0" cy="81.0" rx="3.4" ry="1.6" fill="#a09c80" transform="rotate(57 180.0 81.0)"/><ellipse cx="188.3" cy="33.8" rx="2.6" ry="3.4" fill="#b08474" transform="rotate(4 188.3 33.8)"/><ellipse cx="147.5" cy="102.9" rx="2.2" ry="1.6" fill="#7c7c64" transform="rotate(163 147.5 102.9)"/><ellipse cx="185.0" cy="80.0" rx="4.0" ry="1.9" fill="#a09c80" transform="rotate(45 185.0 80.0)"/><ellipse cx="143.5" cy="28.0" rx="3.2" ry="3.3" fill="#ece8d8" transform="rotate(28 143.5 28.0)"/><ellipse cx="149.5" cy="64.7" rx="2.0" ry="3.6" fill="#8c8c70" transform="rotate(37 149.5 64.7)"/><ellipse cx="192.2" cy="72.1" rx="2.9" ry="4.8" fill="#b08474" transform="rotate(162 192.2 72.1)"/><ellipse cx="170.3" cy="66.7" rx="4.4" ry="3.3" fill="#a8a488" transform="rotate(13 170.3 66.7)"/><ellipse cx="200.6" cy="56.0" rx="2.3" ry="2.7" fill="#a8a488" transform="rotate(144 200.6 56.0)"/><ellipse cx="202.7" cy="130.7" rx="4.4" ry="4.5" fill="#b08474" transform="rotate(83 202.7 130.7)"/><ellipse cx="180.4" cy="136.5" rx="4.8" ry="2.4" fill="#a8a488" transform="rotate(169 180.4 136.5)"/><ellipse cx="189.3" cy="59.4" rx="3.4" ry="1.7" fill="#a8a488" transform="rotate(51 189.3 59.4)"/><ellipse cx="179.4" cy="14.7" rx="2.0" ry="4.9" fill="#909478" transform="rotate(162 179.4 14.7)"/><ellipse cx="143.6" cy="139.4" rx="4.9" ry="1.6" fill="#7c7c64" transform="rotate(68 143.6 139.4)"/><ellipse cx="211.6" cy="93.1" rx="3.7" ry="4.3" fill="#b08474" transform="rotate(159 211.6 93.1)"/><ellipse cx="147.8" cy="27.8" rx="1.5" ry="2.3" fill="#b08474" transform="rotate(73 147.8 27.8)"/><ellipse cx="148.8" cy="57.2" rx="2.1" ry="1.7" fill="#b89080" transform="rotate(68 148.8 57.2)"/><ellipse cx="146.6" cy="88.7" rx="4.8" ry="3.0" fill="#b89080" transform="rotate(33 146.6 88.7)"/><ellipse cx="209.0" cy="131.0" rx="3.5" ry="2.5" fill="#a09c80" transform="rotate(139 209.0 131.0)"/><ellipse cx="162.4" cy="71.0" rx="3.9" ry="2.3" fill="#a8a488" transform="rotate(51 162.4 71.0)"/><ellipse cx="182.8" cy="59.7" rx="4.6" ry="2.6" fill="#909478" transform="rotate(120 182.8 59.7)"/><ellipse cx="203.9" cy="16.0" rx="2.7" ry="2.2" fill="#b89080" transform="rotate(98 203.9 16.0)"/><ellipse cx="215.6" cy="63.5" rx="4.7" ry="2.1" fill="#8c8c70" transform="rotate(82 215.6 63.5)"/><ellipse cx="183.4" cy="75.9" rx="2.5" ry="5.0" fill="#ece8d8" transform="rotate(14 183.4 75.9)"/><ellipse cx="200.2" cy="32.6" rx="1.7" ry="4.5" fill="#909478" transform="rotate(168 200.2 32.6)"/><ellipse cx="144.8" cy="62.4" rx="3.0" ry="4.1" fill="#a09c80" transform="rotate(133 144.8 62.4)"/><ellipse cx="157.6" cy="136.7" rx="4.1" ry="2.0" fill="#e4e0cc" transform="rotate(171 157.6 136.7)"/><ellipse cx="167.5" cy="99.8" rx="3.7" ry="4.5" fill="#b89080" transform="rotate(24 167.5 99.8)"/><ellipse cx="197.6" cy="108.6" rx="4.2" ry="3.2" fill="#9a9a7e" transform="rotate(105 197.6 108.6)"/><ellipse cx="207.9" cy="12.6" rx="4.2" ry="3.6" fill="#909478" transform="rotate(101 207.9 12.6)"/><ellipse cx="215.1" cy="86.4" rx="3.0" ry="4.2" fill="#7c7c64" transform="rotate(155 215.1 86.4)"/><ellipse cx="148.7" cy="122.7" rx="3.9" ry="2.5" fill="#e4e0cc" transform="rotate(74 148.7 122.7)"/><ellipse cx="167.5" cy="80.4" rx="3.6" ry="3.8" fill="#b08474" transform="rotate(127 167.5 80.4)"/><ellipse cx="169.7" cy="51.0" rx="3.4" ry="4.3" fill="#a8a488" transform="rotate(147 169.7 51.0)"/><ellipse cx="169.4" cy="42.2" rx="4.4" ry="2.7" fill="#7c7c64" transform="rotate(62 169.4 42.2)"/><ellipse cx="214.8" cy="38.6" rx="3.0" ry="4.7" fill="#b08474" transform="rotate(6 214.8 38.6)"/><ellipse cx="143.7" cy="85.4" rx="3.2" ry="4.7" fill="#ece8d8" transform="rotate(137 143.7 85.4)"/><ellipse cx="188.4" cy="68.8" rx="4.4" ry="4.0" fill="#a8a488" transform="rotate(99 188.4 68.8)"/><ellipse cx="176.2" cy="17.3" rx="3.9" ry="3.1" fill="#b08474" transform="rotate(173 176.2 17.3)"/><ellipse cx="145.3" cy="41.8" rx="2.9" ry="3.3" fill="#b89080" transform="rotate(146 145.3 41.8)"/><ellipse cx="152.0" cy="36.5" rx="3.0" ry="2.9" fill="#7c7c64" transform="rotate(150 152.0 36.5)"/><ellipse cx="166.8" cy="80.9" rx="4.4" ry="2.1" fill="#e4e0cc" transform="rotate(93 166.8 80.9)"/><ellipse cx="216.3" cy="119.4" rx="3.3" ry="1.9" fill="#ece8d8" transform="rotate(176 216.3 119.4)"/><ellipse cx="166.8" cy="133.6" rx="3.3" ry="4.9" fill="#9a9a7e" transform="rotate(134 166.8 133.6)"/><ellipse cx="162.6" cy="78.5" rx="3.3" ry="2.2" fill="#9a9a7e" transform="rotate(15 162.6 78.5)"/><ellipse cx="189.1" cy="90.4" rx="2.7" ry="5.0" fill="#b08474" transform="rotate(177 189.1 90.4)"/><ellipse cx="172.1" cy="114.4" rx="2.6" ry="3.9" fill="#b08474" transform="rotate(77 172.1 114.4)"/><ellipse cx="171.0" cy="24.8" rx="1.6" ry="1.6" fill="#9a9a7e" transform="rotate(127 171.0 24.8)"/><ellipse cx="200.0" cy="85.7" rx="4.5" ry="4.6" fill="#b89080" transform="rotate(36 200.0 85.7)"/><ellipse cx="184.8" cy="65.4" rx="1.9" ry="2.0" fill="#b89080" transform="rotate(27 184.8 65.4)"/><ellipse cx="142.3" cy="21.9" rx="4.8" ry="3.2" fill="#909478" transform="rotate(156 142.3 21.9)"/><ellipse cx="173.6" cy="116.0" rx="3.8" ry="3.9" fill="#7c7c64" transform="rotate(82 173.6 116.0)"/><ellipse cx="151.2" cy="43.0" rx="2.5" ry="1.6" fill="#a09c80" transform="rotate(149 151.2 43.0)"/><ellipse cx="144.9" cy="36.9" rx="3.7" ry="1.6" fill="#8c8c70" transform="rotate(101 144.9 36.9)"/><ellipse cx="185.4" cy="136.7" rx="3.0" ry="3.7" fill="#8c8c70" transform="rotate(57 185.4 136.7)"/><ellipse cx="143.4" cy="133.0" rx="4.5" ry="2.6" fill="#909478" transform="rotate(77 143.4 133.0)"/><ellipse cx="172.6" cy="44.8" rx="4.6" ry="4.9" fill="#a09c80" transform="rotate(62 172.6 44.8)"/><ellipse cx="192.8" cy="99.7" rx="3.5" ry="2.9" fill="#a8a488" transform="rotate(124 192.8 99.7)"/><ellipse cx="141.7" cy="124.9" rx="1.8" ry="2.1" fill="#a8a488" transform="rotate(47 141.7 124.9)"/><ellipse cx="140.6" cy="126.7" rx="2.9" ry="2.8" fill="#e4e0cc" transform="rotate(136 140.6 126.7)"/><ellipse cx="208.0" cy="55.7" rx="3.8" ry="4.9" fill="#a8a488" transform="rotate(89 208.0 55.7)"/><ellipse cx="183.2" cy="62.4" rx="3.1" ry="2.7" fill="#a8a488" transform="rotate(8 183.2 62.4)"/><ellipse cx="161.8" cy="15.3" rx="4.3" ry="2.3" fill="#9a9a7e" transform="rotate(23 161.8 15.3)"/><ellipse cx="155.3" cy="82.8" rx="4.3" ry="3.4" fill="#909478" transform="rotate(61 155.3 82.8)"/><ellipse cx="152.4" cy="57.9" rx="4.0" ry="2.8" fill="#7c7c64" transform="rotate(53 152.4 57.9)"/><ellipse cx="163.2" cy="73.9" rx="2.2" ry="4.5" fill="#9a9a7e" transform="rotate(180 163.2 73.9)"/><ellipse cx="217.8" cy="89.5" rx="3.0" ry="5.0" fill="#b89080" transform="rotate(63 217.8 89.5)"/><ellipse cx="171.5" cy="78.3" rx="1.9" ry="4.1" fill="#b89080" transform="rotate(23 171.5 78.3)"/><ellipse cx="182.3" cy="47.2" rx="4.2" ry="2.8" fill="#7c7c64" transform="rotate(37 182.3 47.2)"/><ellipse cx="164.2" cy="62.7" rx="1.8" ry="2.1" fill="#8c8c70" transform="rotate(82 164.2 62.7)"/><ellipse cx="154.7" cy="127.9" rx="1.7" ry="4.7" fill="#b89080" transform="rotate(76 154.7 127.9)"/><ellipse cx="155.0" cy="105.4" rx="1.8" ry="2.5" fill="#a8a488" transform="rotate(72 155.0 105.4)"/><ellipse cx="167.8" cy="121.8" rx="3.1" ry="3.7" fill="#9a9a7e" transform="rotate(70 167.8 121.8)"/><ellipse cx="153.8" cy="59.7" rx="4.3" ry="3.9" fill="#a8a488" transform="rotate(6 153.8 59.7)"/><ellipse cx="191.4" cy="102.9" rx="2.4" ry="4.5" fill="#e4e0cc" transform="rotate(160 191.4 102.9)"/><ellipse cx="147.6" cy="49.9" rx="2.4" ry="3.6" fill="#8c8c70" transform="rotate(173 147.6 49.9)"/><ellipse cx="143.2" cy="17.2" rx="2.1" ry="2.2" fill="#ece8d8" transform="rotate(39 143.2 17.2)"/><ellipse cx="169.7" cy="17.1" rx="2.6" ry="3.7" fill="#9a9a7e" transform="rotate(144 169.7 17.1)"/><ellipse cx="205.5" cy="86.1" rx="4.0" ry="2.4" fill="#a8a488" transform="rotate(171 205.5 86.1)"/><ellipse cx="193.4" cy="57.4" rx="1.5" ry="4.4" fill="#ece8d8" transform="rotate(10 193.4 57.4)"/><ellipse cx="208.3" cy="88.1" rx="3.9" ry="4.9" fill="#a09c80" transform="rotate(9 208.3 88.1)"/><ellipse cx="201.7" cy="39.3" rx="4.7" ry="4.1" fill="#a09c80" transform="rotate(106 201.7 39.3)"/><ellipse cx="194.2" cy="63.2" rx="4.1" ry="4.4" fill="#ece8d8" transform="rotate(134 194.2 63.2)"/><ellipse cx="147.0" cy="135.0" rx="3.0" ry="4.8" fill="#b89080" transform="rotate(176 147.0 135.0)"/><ellipse cx="204.7" cy="93.7" rx="3.1" ry="1.7" fill="#8c8c70" transform="rotate(109 204.7 93.7)"/><ellipse cx="192.5" cy="122.1" rx="4.2" ry="3.2" fill="#8c8c70" transform="rotate(11 192.5 122.1)"/><ellipse cx="214.3" cy="119.3" rx="3.5" ry="2.1" fill="#9a9a7e" transform="rotate(163 214.3 119.3)"/><ellipse cx="158.4" cy="45.8" rx="4.9" ry="2.1" fill="#e4e0cc" transform="rotate(105 158.4 45.8)"/><ellipse cx="147.2" cy="94.7" rx="2.0" ry="3.9" fill="#909478" transform="rotate(171 147.2 94.7)"/><ellipse cx="177.7" cy="103.7" rx="1.5" ry="3.9" fill="#9a9a7e" transform="rotate(164 177.7 103.7)"/><ellipse cx="167.4" cy="50.9" rx="4.6" ry="2.0" fill="#7c7c64" transform="rotate(61 167.4 50.9)"/><ellipse cx="166.0" cy="118.0" rx="3.4" ry="4.2" fill="#9a9a7e" transform="rotate(173 166.0 118.0)"/><ellipse cx="192.0" cy="89.8" rx="3.1" ry="4.2" fill="#8c8c70" transform="rotate(29 192.0 89.8)"/><ellipse cx="193.8" cy="13.6" rx="3.2" ry="1.7" fill="#ece8d8" transform="rotate(77 193.8 13.6)"/><ellipse cx="155.4" cy="103.2" rx="3.1" ry="1.9" fill="#e4e0cc" transform="rotate(113 155.4 103.2)"/><ellipse cx="176.6" cy="59.2" rx="2.1" ry="1.8" fill="#b08474" transform="rotate(119 176.6 59.2)"/><ellipse cx="217.4" cy="109.6" rx="1.8" ry="4.0" fill="#7c7c64" transform="rotate(67 217.4 109.6)"/><ellipse cx="148.5" cy="75.6" rx="3.0" ry="2.2" fill="#b89080" transform="rotate(82 148.5 75.6)"/><ellipse cx="140.6" cy="131.5" rx="3.8" ry="3.7" fill="#ece8d8" transform="rotate(167 140.6 131.5)"/><ellipse cx="159.2" cy="30.0" rx="1.6" ry="4.2" fill="#9a9a7e" transform="rotate(75 159.2 30.0)"/><ellipse cx="168.7" cy="137.1" rx="3.3" ry="4.6" fill="#9a9a7e" transform="rotate(26 168.7 137.1)"/><ellipse cx="201.2" cy="120.0" rx="4.1" ry="2.6" fill="#9a9a7e" transform="rotate(165 201.2 120.0)"/><ellipse cx="204.4" cy="53.6" rx="2.8" ry="3.4" fill="#e4e0cc" transform="rotate(64 204.4 53.6)"/><ellipse cx="158.7" cy="17.4" rx="3.5" ry="3.7" fill="#a8a488" transform="rotate(12 158.7 17.4)"/><ellipse cx="213.7" cy="76.3" rx="3.2" ry="2.1" fill="#ece8d8" transform="rotate(154 213.7 76.3)"/><ellipse cx="185.3" cy="22.4" rx="3.9" ry="2.1" fill="#909478" transform="rotate(163 185.3 22.4)"/><ellipse cx="215.6" cy="23.7" rx="1.6" ry="3.0" fill="#8c8c70" transform="rotate(55 215.6 23.7)"/><ellipse cx="196.4" cy="12.4" rx="4.4" ry="4.5" fill="#b89080" transform="rotate(108 196.4 12.4)"/><ellipse cx="151.2" cy="21.4" rx="1.7" ry="4.0" fill="#e4e0cc" transform="rotate(16 151.2 21.4)"/><ellipse cx="174.2" cy="98.6" rx="4.4" ry="4.7" fill="#9a9a7e" transform="rotate(96 174.2 98.6)"/><ellipse cx="163.1" cy="69.6" rx="3.5" ry="2.7" fill="#8c8c70" transform="rotate(120 163.1 69.6)"/><ellipse cx="146.6" cy="54.1" rx="3.1" ry="4.9" fill="#9a9a7e" transform="rotate(102 146.6 54.1)"/><ellipse cx="215.0" cy="92.6" rx="4.3" ry="1.7" fill="#e4e0cc" transform="rotate(155 215.0 92.6)"/><ellipse cx="191.4" cy="85.5" rx="3.0" ry="2.8" fill="#9a9a7e" transform="rotate(76 191.4 85.5)"/><ellipse cx="207.5" cy="81.0" rx="3.7" ry="4.5" fill="#8c8c70" transform="rotate(173 207.5 81.0)"/><ellipse cx="197.7" cy="101.9" rx="2.0" ry="3.5" fill="#b89080" transform="rotate(148 197.7 101.9)"/><ellipse cx="213.6" cy="58.8" rx="2.3" ry="3.0" fill="#ece8d8" transform="rotate(29 213.6 58.8)"/><ellipse cx="157.7" cy="137.9" rx="2.2" ry="4.1" fill="#8c8c70" transform="rotate(64 157.7 137.9)"/><ellipse cx="190.7" cy="36.4" rx="3.8" ry="4.0" fill="#8c8c70" transform="rotate(141 190.7 36.4)"/><ellipse cx="175.7" cy="82.4" rx="3.9" ry="4.1" fill="#7c7c64" transform="rotate(145 175.7 82.4)"/><ellipse cx="146.3" cy="65.0" rx="1.8" ry="3.0" fill="#b89080" transform="rotate(140 146.3 65.0)"/><ellipse cx="179.6" cy="121.0" rx="4.8" ry="3.7" fill="#b89080" transform="rotate(26 179.6 121.0)"/><ellipse cx="175.9" cy="101.2" rx="3.4" ry="4.9" fill="#8c8c70" transform="rotate(144 175.9 101.2)"/><ellipse cx="177.1" cy="24.1" rx="2.8" ry="3.7" fill="#a8a488" transform="rotate(60 177.1 24.1)"/><ellipse cx="143.7" cy="17.4" rx="4.0" ry="4.8" fill="#909478" transform="rotate(76 143.7 17.4)"/><ellipse cx="149.4" cy="29.6" rx="4.7" ry="1.8" fill="#8c8c70" transform="rotate(144 149.4 29.6)"/><ellipse cx="148.9" cy="106.7" rx="2.7" ry="2.8" fill="#e4e0cc" transform="rotate(174 148.9 106.7)"/><ellipse cx="140.9" cy="45.2" rx="2.3" ry="3.3" fill="#b89080" transform="rotate(91 140.9 45.2)"/><ellipse cx="196.3" cy="17.7" rx="3.6" ry="1.8" fill="#b89080" transform="rotate(83 196.3 17.7)"/><ellipse cx="202.6" cy="26.7" rx="4.7" ry="3.9" fill="#ece8d8" transform="rotate(90 202.6 26.7)"/><ellipse cx="155.1" cy="70.1" rx="4.4" ry="3.5" fill="#a09c80" transform="rotate(5 155.1 70.1)"/><ellipse cx="178.1" cy="21.6" rx="2.4" ry="2.0" fill="#ece8d8" transform="rotate(175 178.1 21.6)"/><ellipse cx="192.2" cy="120.7" rx="3.6" ry="2.4" fill="#ece8d8" transform="rotate(113 192.2 120.7)"/><ellipse cx="141.1" cy="56.5" rx="2.0" ry="3.3" fill="#b08474" transform="rotate(9 141.1 56.5)"/><ellipse cx="145.8" cy="92.7" rx="3.8" ry="3.6" fill="#909478" transform="rotate(40 145.8 92.7)"/><ellipse cx="194.0" cy="70.3" rx="2.3" ry="4.9" fill="#b89080" transform="rotate(19 194.0 70.3)"/><ellipse cx="168.2" cy="80.7" rx="2.6" ry="2.0" fill="#7c7c64" transform="rotate(11 168.2 80.7)"/><ellipse cx="156.5" cy="118.5" rx="4.0" ry="2.7" fill="#909478" transform="rotate(99 156.5 118.5)"/><ellipse cx="213.1" cy="52.9" rx="2.7" ry="3.2" fill="#8c8c70" transform="rotate(5 213.1 52.9)"/><ellipse cx="159.4" cy="125.9" rx="3.6" ry="3.7" fill="#9a9a7e" transform="rotate(69 159.4 125.9)"/><ellipse cx="170.0" cy="20.3" rx="5.0" ry="2.7" fill="#7c7c64" transform="rotate(135 170.0 20.3)"/><ellipse cx="185.6" cy="30.1" rx="3.9" ry="4.7" fill="#a09c80" transform="rotate(51 185.6 30.1)"/><ellipse cx="200.4" cy="94.3" rx="3.7" ry="2.8" fill="#ece8d8" transform="rotate(60 200.4 94.3)"/><ellipse cx="208.1" cy="134.0" rx="3.9" ry="2.6" fill="#e4e0cc" transform="rotate(92 208.1 134.0)"/><ellipse cx="179.7" cy="94.6" rx="2.7" ry="3.4" fill="#a8a488" transform="rotate(85 179.7 94.6)"/><ellipse cx="144.7" cy="55.8" rx="2.6" ry="5.0" fill="#909478" transform="rotate(128 144.7 55.8)"/><ellipse cx="168.6" cy="43.6" rx="2.3" ry="2.7" fill="#9a9a7e" transform="rotate(52 168.6 43.6)"/><ellipse cx="140.6" cy="125.2" rx="3.1" ry="3.1" fill="#7c7c64" transform="rotate(77 140.6 125.2)"/><ellipse cx="212.5" cy="88.3" rx="2.0" ry="4.0" fill="#ece8d8" transform="rotate(146 212.5 88.3)"/><ellipse cx="183.0" cy="133.9" rx="2.7" ry="4.7" fill="#7c7c64" transform="rotate(20 183.0 133.9)"/><ellipse cx="185.6" cy="51.6" rx="2.7" ry="3.1" fill="#a8a488" transform="rotate(17 185.6 51.6)"/><ellipse cx="205.4" cy="53.5" rx="2.1" ry="4.6" fill="#b89080" transform="rotate(5 205.4 53.5)"/><ellipse cx="199.2" cy="93.4" rx="2.3" ry="1.6" fill="#b08474" transform="rotate(102 199.2 93.4)"/><ellipse cx="174.9" cy="128.1" rx="2.5" ry="3.3" fill="#a09c80" transform="rotate(50 174.9 128.1)"/><ellipse cx="158.9" cy="19.4" rx="2.0" ry="1.7" fill="#a09c80" transform="rotate(147 158.9 19.4)"/><ellipse cx="166.6" cy="29.8" rx="2.2" ry="3.4" fill="#b08474" transform="rotate(163 166.6 29.8)"/><ellipse cx="165.2" cy="15.6" rx="2.6" ry="4.5" fill="#b08474" transform="rotate(166 165.2 15.6)"/><ellipse cx="177.9" cy="91.3" rx="4.3" ry="2.1" fill="#a8a488" transform="rotate(11 177.9 91.3)"/><ellipse cx="146.8" cy="91.7" rx="4.2" ry="5.0" fill="#a8a488" transform="rotate(65 146.8 91.7)"/><ellipse cx="213.3" cy="125.5" rx="1.6" ry="2.6" fill="#e4e0cc" transform="rotate(14 213.3 125.5)"/><ellipse cx="172.4" cy="104.3" rx="4.4" ry="2.0" fill="#b08474" transform="rotate(39 172.4 104.3)"/><ellipse cx="156.4" cy="80.8" rx="4.4" ry="2.8" fill="#e4e0cc" transform="rotate(108 156.4 80.8)"/><ellipse cx="166.8" cy="100.4" rx="4.5" ry="2.0" fill="#7c7c64" transform="rotate(147 166.8 100.4)"/><ellipse cx="165.8" cy="108.3" rx="2.4" ry="4.0" fill="#b08474" transform="rotate(165 165.8 108.3)"/><ellipse cx="164.1" cy="112.4" rx="4.9" ry="3.1" fill="#ece8d8" transform="rotate(92 164.1 112.4)"/><ellipse cx="180.8" cy="134.3" rx="2.0" ry="1.5" fill="#909478" transform="rotate(25 180.8 134.3)"/><ellipse cx="191.1" cy="112.6" rx="2.8" ry="5.0" fill="#8c8c70" transform="rotate(102 191.1 112.6)"/><ellipse cx="199.0" cy="23.7" rx="1.6" ry="2.0" fill="#b08474" transform="rotate(139 199.0 23.7)"/><ellipse cx="179.1" cy="84.2" rx="2.1" ry="4.8" fill="#e4e0cc" transform="rotate(38 179.1 84.2)"/><ellipse cx="210.4" cy="125.2" rx="4.5" ry="4.2" fill="#b89080" transform="rotate(7 210.4 125.2)"/></g>
<g clip-path="url(#cl3)"><rect x="228" y="12" width="62" height="170" fill="#b8ae96"/><ellipse cx="249.8" cy="68.8" rx="3.0" ry="4.5" fill="#8c8c70" transform="rotate(162 249.8 68.8)"/><ellipse cx="284.6" cy="84.1" rx="2.9" ry="2.2" fill="#b08474" transform="rotate(27 284.6 84.1)"/><ellipse cx="268.9" cy="13.2" rx="4.3" ry="4.7" fill="#e4e0cc" transform="rotate(15 268.9 13.2)"/><ellipse cx="242.1" cy="42.1" rx="4.7" ry="2.8" fill="#8c8c70" transform="rotate(7 242.1 42.1)"/><ellipse cx="243.6" cy="33.0" rx="3.0" ry="2.3" fill="#8c8c70" transform="rotate(83 243.6 33.0)"/><ellipse cx="275.1" cy="63.4" rx="2.5" ry="5.0" fill="#8c8c70" transform="rotate(145 275.1 63.4)"/><ellipse cx="277.0" cy="50.2" rx="4.8" ry="4.2" fill="#9a9a7e" transform="rotate(76 277.0 50.2)"/><ellipse cx="245.5" cy="38.5" rx="3.2" ry="4.6" fill="#9a9a7e" transform="rotate(81 245.5 38.5)"/><ellipse cx="270.3" cy="59.8" rx="3.1" ry="3.5" fill="#8c8c70" transform="rotate(92 270.3 59.8)"/><ellipse cx="230.9" cy="73.9" rx="3.0" ry="3.0" fill="#9a9a7e" transform="rotate(76 230.9 73.9)"/><ellipse cx="270.5" cy="76.4" rx="2.0" ry="4.7" fill="#9a9a7e" transform="rotate(77 270.5 76.4)"/><ellipse cx="237.3" cy="70.9" rx="1.8" ry="2.1" fill="#a8a488" transform="rotate(23 237.3 70.9)"/><ellipse cx="253.7" cy="63.4" rx="3.8" ry="2.9" fill="#e4e0cc" transform="rotate(8 253.7 63.4)"/><ellipse cx="264.3" cy="28.1" rx="3.7" ry="1.6" fill="#9a9a7e" transform="rotate(129 264.3 28.1)"/><ellipse cx="264.9" cy="58.0" rx="3.9" ry="4.0" fill="#b08474" transform="rotate(81 264.9 58.0)"/><ellipse cx="232.0" cy="20.8" rx="4.9" ry="4.9" fill="#b89080" transform="rotate(109 232.0 20.8)"/><ellipse cx="228.2" cy="29.9" rx="3.4" ry="3.7" fill="#b89080" transform="rotate(128 228.2 29.9)"/><ellipse cx="289.6" cy="54.4" rx="4.4" ry="4.9" fill="#a09c80" transform="rotate(89 289.6 54.4)"/><ellipse cx="288.2" cy="80.3" rx="4.9" ry="2.3" fill="#a09c80" transform="rotate(69 288.2 80.3)"/><ellipse cx="271.6" cy="13.2" rx="2.4" ry="4.9" fill="#8c8c70" transform="rotate(130 271.6 13.2)"/><ellipse cx="231.0" cy="75.2" rx="4.8" ry="2.4" fill="#e4e0cc" transform="rotate(176 231.0 75.2)"/><ellipse cx="230.6" cy="48.3" rx="2.5" ry="2.7" fill="#a8a488" transform="rotate(68 230.6 48.3)"/><ellipse cx="252.8" cy="37.5" rx="3.0" ry="4.9" fill="#a8a488" transform="rotate(98 252.8 37.5)"/><ellipse cx="282.7" cy="76.3" rx="4.6" ry="3.7" fill="#8c8c70" transform="rotate(155 282.7 76.3)"/><ellipse cx="259.1" cy="91.1" rx="3.9" ry="4.1" fill="#8c8c70" transform="rotate(50 259.1 91.1)"/><ellipse cx="269.1" cy="18.9" rx="3.7" ry="1.6" fill="#b08474" transform="rotate(103 269.1 18.9)"/><ellipse cx="271.0" cy="37.9" rx="3.8" ry="3.4" fill="#e4e0cc" transform="rotate(116 271.0 37.9)"/><ellipse cx="288.2" cy="12.1" rx="4.1" ry="4.5" fill="#b89080" transform="rotate(87 288.2 12.1)"/><ellipse cx="264.7" cy="91.6" rx="2.3" ry="3.7" fill="#a8a488" transform="rotate(90 264.7 91.6)"/><ellipse cx="272.2" cy="43.5" rx="3.3" ry="3.6" fill="#e4e0cc" transform="rotate(18 272.2 43.5)"/><ellipse cx="267.0" cy="55.4" rx="2.3" ry="3.6" fill="#ece8d8" transform="rotate(67 267.0 55.4)"/><ellipse cx="284.3" cy="49.9" rx="4.0" ry="3.3" fill="#909478" transform="rotate(146 284.3 49.9)"/><ellipse cx="241.7" cy="23.4" rx="4.7" ry="3.4" fill="#b89080" transform="rotate(52 241.7 23.4)"/><ellipse cx="260.7" cy="77.1" rx="2.3" ry="2.1" fill="#909478" transform="rotate(45 260.7 77.1)"/><ellipse cx="267.7" cy="78.2" rx="4.6" ry="4.5" fill="#b08474" transform="rotate(82 267.7 78.2)"/><ellipse cx="251.6" cy="78.6" rx="4.4" ry="1.9" fill="#9a9a7e" transform="rotate(179 251.6 78.6)"/><ellipse cx="243.6" cy="20.2" rx="2.7" ry="4.3" fill="#b89080" transform="rotate(77 243.6 20.2)"/><ellipse cx="256.1" cy="19.0" rx="2.9" ry="5.0" fill="#a09c80" transform="rotate(115 256.1 19.0)"/><ellipse cx="267.3" cy="70.5" rx="2.1" ry="3.3" fill="#b08474" transform="rotate(174 267.3 70.5)"/><ellipse cx="236.1" cy="51.1" rx="3.8" ry="3.7" fill="#b89080" transform="rotate(87 236.1 51.1)"/><ellipse cx="277.7" cy="32.2" rx="3.4" ry="1.5" fill="#ece8d8" transform="rotate(14 277.7 32.2)"/><ellipse cx="264.6" cy="36.5" rx="3.4" ry="4.7" fill="#ece8d8" transform="rotate(61 264.6 36.5)"/><ellipse cx="244.5" cy="47.0" rx="3.3" ry="3.2" fill="#a09c80" transform="rotate(51 244.5 47.0)"/><ellipse cx="236.0" cy="88.7" rx="2.5" ry="4.2" fill="#b08474" transform="rotate(113 236.0 88.7)"/><ellipse cx="251.3" cy="15.3" rx="4.1" ry="4.9" fill="#a8a488" transform="rotate(165 251.3 15.3)"/><ellipse cx="265.7" cy="32.5" rx="2.3" ry="4.5" fill="#9a9a7e" transform="rotate(158 265.7 32.5)"/><ellipse cx="239.9" cy="89.7" rx="4.0" ry="2.8" fill="#8c8c70" transform="rotate(84 239.9 89.7)"/><ellipse cx="281.3" cy="18.4" rx="3.1" ry="2.9" fill="#a8a488" transform="rotate(127 281.3 18.4)"/><ellipse cx="286.0" cy="63.4" rx="4.3" ry="1.9" fill="#7c7c64" transform="rotate(118 286.0 63.4)"/><ellipse cx="286.0" cy="68.1" rx="3.0" ry="5.0" fill="#9a9a7e" transform="rotate(16 286.0 68.1)"/><ellipse cx="255.3" cy="51.3" rx="3.3" ry="4.4" fill="#8c8c70" transform="rotate(51 255.3 51.3)"/><ellipse cx="252.9" cy="15.2" rx="3.9" ry="3.4" fill="#a8a488" transform="rotate(117 252.9 15.2)"/><ellipse cx="235.3" cy="29.7" rx="1.8" ry="4.4" fill="#a09c80" transform="rotate(127 235.3 29.7)"/><ellipse cx="233.5" cy="72.3" rx="3.5" ry="1.7" fill="#8c8c70" transform="rotate(85 233.5 72.3)"/><ellipse cx="257.9" cy="16.4" rx="3.9" ry="3.0" fill="#7c7c64" transform="rotate(35 257.9 16.4)"/><ellipse cx="289.9" cy="77.3" rx="4.6" ry="2.0" fill="#e4e0cc" transform="rotate(48 289.9 77.3)"/><ellipse cx="260.1" cy="12.5" rx="5.0" ry="2.5" fill="#ece8d8" transform="rotate(22 260.1 12.5)"/><ellipse cx="247.4" cy="32.4" rx="4.5" ry="3.4" fill="#b89080" transform="rotate(107 247.4 32.4)"/><ellipse cx="270.2" cy="36.5" rx="2.4" ry="2.8" fill="#a8a488" transform="rotate(138 270.2 36.5)"/><ellipse cx="243.9" cy="28.2" rx="1.7" ry="3.4" fill="#e4e0cc" transform="rotate(118 243.9 28.2)"/><ellipse cx="268.7" cy="68.8" rx="2.0" ry="4.8" fill="#e4e0cc" transform="rotate(51 268.7 68.8)"/><ellipse cx="256.3" cy="68.6" rx="3.8" ry="4.1" fill="#b08474" transform="rotate(136 256.3 68.6)"/><ellipse cx="232.2" cy="88.1" rx="4.4" ry="1.6" fill="#8c8c70" transform="rotate(112 232.2 88.1)"/><ellipse cx="246.1" cy="68.8" rx="4.3" ry="3.6" fill="#909478" transform="rotate(103 246.1 68.8)"/><ellipse cx="286.0" cy="47.6" rx="4.6" ry="1.7" fill="#a8a488" transform="rotate(163 286.0 47.6)"/><ellipse cx="235.7" cy="23.0" rx="4.6" ry="4.4" fill="#909478" transform="rotate(46 235.7 23.0)"/><ellipse cx="228.9" cy="69.7" rx="4.1" ry="2.1" fill="#8c8c70" transform="rotate(172 228.9 69.7)"/><ellipse cx="272.7" cy="71.9" rx="4.3" ry="3.4" fill="#9a9a7e" transform="rotate(37 272.7 71.9)"/><ellipse cx="276.2" cy="69.2" rx="3.3" ry="3.1" fill="#8c8c70" transform="rotate(23 276.2 69.2)"/><ellipse cx="287.0" cy="45.2" rx="3.8" ry="2.4" fill="#909478" transform="rotate(175 287.0 45.2)"/><ellipse cx="254.3" cy="81.5" rx="4.7" ry="2.0" fill="#9a9a7e" transform="rotate(114 254.3 81.5)"/><ellipse cx="246.2" cy="30.6" rx="3.5" ry="2.6" fill="#b89080" transform="rotate(39 246.2 30.6)"/><ellipse cx="247.2" cy="32.6" rx="3.4" ry="2.3" fill="#8c8c70" transform="rotate(100 247.2 32.6)"/><ellipse cx="288.4" cy="38.2" rx="2.0" ry="2.5" fill="#b89080" transform="rotate(177 288.4 38.2)"/><ellipse cx="233.8" cy="49.2" rx="4.0" ry="3.0" fill="#a8a488" transform="rotate(29 233.8 49.2)"/><ellipse cx="230.4" cy="40.1" rx="3.8" ry="2.2" fill="#b89080" transform="rotate(134 230.4 40.1)"/><ellipse cx="232.5" cy="51.2" rx="1.6" ry="4.2" fill="#a09c80" transform="rotate(51 232.5 51.2)"/><ellipse cx="258.1" cy="81.1" rx="3.6" ry="3.4" fill="#a09c80" transform="rotate(51 258.1 81.1)"/><ellipse cx="236.7" cy="33.7" rx="4.6" ry="4.5" fill="#8c8c70" transform="rotate(148 236.7 33.7)"/><ellipse cx="285.3" cy="14.6" rx="3.6" ry="4.9" fill="#e4e0cc" transform="rotate(49 285.3 14.6)"/><ellipse cx="286.6" cy="64.5" rx="1.7" ry="2.7" fill="#909478" transform="rotate(123 286.6 64.5)"/><ellipse cx="243.3" cy="71.4" rx="2.1" ry="4.3" fill="#ece8d8" transform="rotate(17 243.3 71.4)"/><ellipse cx="272.9" cy="48.4" rx="4.1" ry="1.9" fill="#9a9a7e" transform="rotate(152 272.9 48.4)"/><ellipse cx="252.4" cy="14.9" rx="1.6" ry="3.5" fill="#a8a488" transform="rotate(165 252.4 14.9)"/><ellipse cx="271.2" cy="45.2" rx="4.4" ry="1.8" fill="#9a9a7e" transform="rotate(92 271.2 45.2)"/><ellipse cx="238.5" cy="87.3" rx="2.7" ry="4.4" fill="#909478" transform="rotate(77 238.5 87.3)"/><ellipse cx="237.2" cy="19.5" rx="4.6" ry="1.9" fill="#909478" transform="rotate(69 237.2 19.5)"/><ellipse cx="261.2" cy="21.4" rx="3.1" ry="2.1" fill="#b89080" transform="rotate(10 261.2 21.4)"/><ellipse cx="259.4" cy="41.4" rx="2.2" ry="2.9" fill="#8c8c70" transform="rotate(32 259.4 41.4)"/><ellipse cx="284.3" cy="70.1" rx="3.4" ry="2.3" fill="#a09c80" transform="rotate(3 284.3 70.1)"/><ellipse cx="234.6" cy="16.3" rx="4.3" ry="4.0" fill="#8c8c70" transform="rotate(176 234.6 16.3)"/><ellipse cx="274.1" cy="19.0" rx="2.1" ry="4.4" fill="#b08474" transform="rotate(108 274.1 19.0)"/><ellipse cx="252.4" cy="53.4" rx="2.5" ry="4.6" fill="#a09c80" transform="rotate(169 252.4 53.4)"/><ellipse cx="263.9" cy="30.7" rx="3.6" ry="4.2" fill="#b08474" transform="rotate(62 263.9 30.7)"/><ellipse cx="232.5" cy="39.0" rx="1.8" ry="2.3" fill="#9a9a7e" transform="rotate(77 232.5 39.0)"/><ellipse cx="249.2" cy="76.8" rx="3.1" ry="4.7" fill="#b08474" transform="rotate(81 249.2 76.8)"/><ellipse cx="286.3" cy="45.0" rx="2.9" ry="1.8" fill="#8c8c70" transform="rotate(37 286.3 45.0)"/><ellipse cx="273.5" cy="66.3" rx="2.0" ry="2.7" fill="#9a9a7e" transform="rotate(52 273.5 66.3)"/><ellipse cx="240.3" cy="29.6" rx="2.7" ry="4.9" fill="#b08474" transform="rotate(122 240.3 29.6)"/><ellipse cx="230.3" cy="54.0" rx="2.7" ry="1.7" fill="#7c7c64" transform="rotate(162 230.3 54.0)"/><ellipse cx="231.9" cy="81.3" rx="1.7" ry="2.8" fill="#a8a488" transform="rotate(23 231.9 81.3)"/><ellipse cx="268.4" cy="89.7" rx="3.5" ry="4.3" fill="#909478" transform="rotate(172 268.4 89.7)"/><ellipse cx="275.9" cy="51.7" rx="2.4" ry="3.9" fill="#ece8d8" transform="rotate(13 275.9 51.7)"/><ellipse cx="274.2" cy="78.6" rx="4.3" ry="3.6" fill="#a8a488" transform="rotate(98 274.2 78.6)"/><ellipse cx="279.2" cy="74.8" rx="4.5" ry="2.5" fill="#7c7c64" transform="rotate(136 279.2 74.8)"/><ellipse cx="268.6" cy="62.6" rx="1.7" ry="4.2" fill="#ece8d8" transform="rotate(59 268.6 62.6)"/><ellipse cx="242.9" cy="59.0" rx="3.5" ry="4.6" fill="#7c7c64" transform="rotate(175 242.9 59.0)"/><ellipse cx="283.2" cy="16.0" rx="3.8" ry="2.9" fill="#e4e0cc" transform="rotate(97 283.2 16.0)"/><ellipse cx="253.2" cy="19.0" rx="3.8" ry="4.4" fill="#e4e0cc" transform="rotate(169 253.2 19.0)"/><ellipse cx="264.9" cy="78.9" rx="4.3" ry="1.5" fill="#909478" transform="rotate(154 264.9 78.9)"/><ellipse cx="229.0" cy="20.8" rx="4.3" ry="3.0" fill="#7c7c64" transform="rotate(76 229.0 20.8)"/><ellipse cx="256.4" cy="38.8" rx="2.2" ry="2.7" fill="#909478" transform="rotate(158 256.4 38.8)"/><ellipse cx="230.0" cy="38.9" rx="5.0" ry="2.2" fill="#909478" transform="rotate(104 230.0 38.9)"/><ellipse cx="269.0" cy="76.6" rx="1.9" ry="3.9" fill="#b08474" transform="rotate(96 269.0 76.6)"/><ellipse cx="279.0" cy="26.7" rx="2.5" ry="4.9" fill="#e4e0cc" transform="rotate(42 279.0 26.7)"/><ellipse cx="241.9" cy="83.2" rx="3.6" ry="4.6" fill="#a8a488" transform="rotate(78 241.9 83.2)"/><ellipse cx="259.0" cy="88.5" rx="3.3" ry="5.0" fill="#8c8c70" transform="rotate(41 259.0 88.5)"/><ellipse cx="252.2" cy="12.7" rx="4.5" ry="1.9" fill="#8c8c70" transform="rotate(116 252.2 12.7)"/><ellipse cx="263.0" cy="64.6" rx="4.1" ry="3.9" fill="#b89080" transform="rotate(131 263.0 64.6)"/><ellipse cx="269.3" cy="22.8" rx="4.1" ry="2.4" fill="#a8a488" transform="rotate(19 269.3 22.8)"/><ellipse cx="259.9" cy="38.5" rx="2.4" ry="2.5" fill="#ece8d8" transform="rotate(169 259.9 38.5)"/><ellipse cx="272.0" cy="66.9" rx="4.8" ry="4.3" fill="#b08474" transform="rotate(167 272.0 66.9)"/><ellipse cx="258.9" cy="41.1" rx="4.9" ry="1.7" fill="#a09c80" transform="rotate(142 258.9 41.1)"/><ellipse cx="251.4" cy="36.9" rx="3.3" ry="2.0" fill="#7c7c64" transform="rotate(117 251.4 36.9)"/><ellipse cx="230.2" cy="38.0" rx="2.0" ry="4.8" fill="#ece8d8" transform="rotate(36 230.2 38.0)"/><ellipse cx="239.6" cy="85.4" rx="3.3" ry="5.0" fill="#9a9a7e" transform="rotate(150 239.6 85.4)"/><ellipse cx="267.8" cy="34.5" rx="4.2" ry="2.5" fill="#b89080" transform="rotate(6 267.8 34.5)"/><ellipse cx="254.1" cy="90.3" rx="3.8" ry="4.3" fill="#a8a488" transform="rotate(126 254.1 90.3)"/><ellipse cx="287.7" cy="68.8" rx="3.9" ry="2.5" fill="#9a9a7e" transform="rotate(147 287.7 68.8)"/><ellipse cx="258.7" cy="15.9" rx="3.4" ry="4.6" fill="#8c8c70" transform="rotate(132 258.7 15.9)"/><ellipse cx="278.1" cy="16.9" rx="2.6" ry="3.3" fill="#ece8d8" transform="rotate(13 278.1 16.9)"/><ellipse cx="264.4" cy="89.7" rx="4.2" ry="2.8" fill="#9a9a7e" transform="rotate(69 264.4 89.7)"/><ellipse cx="247.2" cy="87.5" rx="2.2" ry="2.6" fill="#909478" transform="rotate(103 247.2 87.5)"/><ellipse cx="234.7" cy="32.8" rx="2.9" ry="2.8" fill="#909478" transform="rotate(68 234.7 32.8)"/><ellipse cx="235.0" cy="86.1" rx="3.7" ry="3.3" fill="#a8a488" transform="rotate(163 235.0 86.1)"/><ellipse cx="237.9" cy="83.4" rx="1.7" ry="2.5" fill="#b89080" transform="rotate(120 237.9 83.4)"/><ellipse cx="269.0" cy="79.8" rx="2.9" ry="1.8" fill="#a8a488" transform="rotate(92 269.0 79.8)"/><ellipse cx="272.5" cy="43.6" rx="4.3" ry="4.5" fill="#a09c80" transform="rotate(66 272.5 43.6)"/><ellipse cx="255.9" cy="12.9" rx="3.4" ry="3.9" fill="#ece8d8" transform="rotate(90 255.9 12.9)"/><ellipse cx="265.3" cy="40.8" rx="4.9" ry="4.6" fill="#b89080" transform="rotate(24 265.3 40.8)"/><ellipse cx="274.7" cy="152.8" rx="3.7" ry="5.2" fill="#6a5a48" transform="rotate(78 274.7 152.8)"/><ellipse cx="238.3" cy="102.6" rx="4.9" ry="5.0" fill="#6a5a48" transform="rotate(103 238.3 102.6)"/><ellipse cx="252.5" cy="179.0" rx="5.0" ry="3.4" fill="#9a8468" transform="rotate(127 252.5 179.0)"/><ellipse cx="278.0" cy="120.0" rx="2.7" ry="5.5" fill="#a08a70" transform="rotate(133 278.0 120.0)"/><ellipse cx="253.6" cy="177.7" rx="3.2" ry="2.9" fill="#c8b8a0" transform="rotate(16 253.6 177.7)"/><ellipse cx="285.3" cy="91.7" rx="2.0" ry="4.3" fill="#7a6a58" transform="rotate(147 285.3 91.7)"/><ellipse cx="254.8" cy="106.4" rx="4.9" ry="5.1" fill="#c8b8a0" transform="rotate(33 254.8 106.4)"/><ellipse cx="237.4" cy="152.2" rx="5.0" ry="4.0" fill="#5a5040" transform="rotate(8 237.4 152.2)"/><ellipse cx="274.1" cy="167.1" rx="4.6" ry="5.5" fill="#7a6a58" transform="rotate(165 274.1 167.1)"/><ellipse cx="271.7" cy="155.4" rx="4.4" ry="3.1" fill="#6a5a48" transform="rotate(154 271.7 155.4)"/><ellipse cx="265.5" cy="135.9" rx="4.4" ry="5.6" fill="#5a5040" transform="rotate(24 265.5 135.9)"/><ellipse cx="250.3" cy="141.9" rx="5.6" ry="2.3" fill="#6a5a48" transform="rotate(179 250.3 141.9)"/><ellipse cx="260.1" cy="97.2" rx="5.8" ry="2.9" fill="#9a8468" transform="rotate(161 260.1 97.2)"/><ellipse cx="275.4" cy="129.7" rx="4.0" ry="5.9" fill="#a08a70" transform="rotate(142 275.4 129.7)"/><ellipse cx="264.9" cy="88.2" rx="4.2" ry="3.9" fill="#9a8468" transform="rotate(57 264.9 88.2)"/><ellipse cx="246.2" cy="178.6" rx="5.9" ry="4.1" fill="#7a6a58" transform="rotate(55 246.2 178.6)"/><ellipse cx="262.5" cy="167.0" rx="3.1" ry="5.9" fill="#a08a70" transform="rotate(137 262.5 167.0)"/><ellipse cx="272.2" cy="107.3" rx="2.7" ry="5.2" fill="#5a5040" transform="rotate(108 272.2 107.3)"/><ellipse cx="251.2" cy="180.5" rx="3.1" ry="2.4" fill="#6a5a48" transform="rotate(102 251.2 180.5)"/><ellipse cx="252.2" cy="180.5" rx="3.6" ry="4.7" fill="#6a5a48" transform="rotate(95 252.2 180.5)"/><ellipse cx="287.6" cy="117.9" rx="5.9" ry="2.3" fill="#9a8468" transform="rotate(147 287.6 117.9)"/><ellipse cx="236.3" cy="130.4" rx="4.7" ry="4.8" fill="#9a8468" transform="rotate(48 236.3 130.4)"/><ellipse cx="249.2" cy="104.0" rx="3.6" ry="3.1" fill="#7a6a58" transform="rotate(19 249.2 104.0)"/><ellipse cx="273.6" cy="136.6" rx="3.8" ry="2.8" fill="#c8b8a0" transform="rotate(50 273.6 136.6)"/><ellipse cx="275.9" cy="105.1" rx="5.0" ry="5.4" fill="#5a5040" transform="rotate(5 275.9 105.1)"/><ellipse cx="285.0" cy="157.3" rx="4.9" ry="2.3" fill="#7a6a58" transform="rotate(106 285.0 157.3)"/><ellipse cx="228.8" cy="171.4" rx="4.9" ry="4.5" fill="#5a5040" transform="rotate(142 228.8 171.4)"/><ellipse cx="250.0" cy="101.4" rx="4.5" ry="6.0" fill="#5a5040" transform="rotate(26 250.0 101.4)"/><ellipse cx="230.7" cy="102.5" rx="3.4" ry="5.6" fill="#c8b8a0" transform="rotate(116 230.7 102.5)"/><ellipse cx="275.9" cy="119.3" rx="5.4" ry="3.5" fill="#9a8468" transform="rotate(124 275.9 119.3)"/><ellipse cx="289.4" cy="176.2" rx="5.2" ry="3.9" fill="#7a6a58" transform="rotate(27 289.4 176.2)"/><ellipse cx="260.8" cy="110.1" rx="3.6" ry="3.4" fill="#c8b8a0" transform="rotate(5 260.8 110.1)"/><ellipse cx="286.1" cy="104.3" rx="3.1" ry="5.3" fill="#a08a70" transform="rotate(111 286.1 104.3)"/><ellipse cx="276.0" cy="157.6" rx="2.6" ry="5.6" fill="#9a8468" transform="rotate(34 276.0 157.6)"/><ellipse cx="236.6" cy="96.1" rx="4.9" ry="4.1" fill="#6a5a48" transform="rotate(2 236.6 96.1)"/><ellipse cx="278.4" cy="182.3" rx="2.3" ry="5.1" fill="#7a6a58" transform="rotate(146 278.4 182.3)"/><ellipse cx="261.1" cy="92.1" rx="3.3" ry="4.5" fill="#9a8468" transform="rotate(124 261.1 92.1)"/><ellipse cx="275.7" cy="175.4" rx="2.0" ry="2.8" fill="#5a5040" transform="rotate(97 275.7 175.4)"/><ellipse cx="282.6" cy="94.8" rx="5.5" ry="5.8" fill="#9a8468" transform="rotate(116 282.6 94.8)"/><ellipse cx="263.5" cy="177.0" rx="4.7" ry="5.7" fill="#6a5a48" transform="rotate(145 263.5 177.0)"/><ellipse cx="272.9" cy="90.4" rx="3.9" ry="3.6" fill="#c8b8a0" transform="rotate(61 272.9 90.4)"/><ellipse cx="272.4" cy="132.0" rx="5.5" ry="4.4" fill="#6a5a48" transform="rotate(127 272.4 132.0)"/><ellipse cx="265.1" cy="91.3" rx="3.0" ry="5.9" fill="#7a6a58" transform="rotate(1 265.1 91.3)"/><ellipse cx="252.3" cy="163.8" rx="5.3" ry="4.5" fill="#c8b8a0" transform="rotate(165 252.3 163.8)"/><ellipse cx="230.4" cy="94.4" rx="5.9" ry="5.2" fill="#6a5a48" transform="rotate(119 230.4 94.4)"/><ellipse cx="231.0" cy="109.0" rx="5.7" ry="2.9" fill="#c8b8a0" transform="rotate(11 231.0 109.0)"/><ellipse cx="285.7" cy="148.9" rx="5.7" ry="3.1" fill="#7a6a58" transform="rotate(119 285.7 148.9)"/><ellipse cx="229.1" cy="160.7" rx="2.4" ry="5.9" fill="#c8b8a0" transform="rotate(24 229.1 160.7)"/><ellipse cx="239.6" cy="165.7" rx="2.7" ry="4.0" fill="#6a5a48" transform="rotate(130 239.6 165.7)"/><ellipse cx="276.8" cy="174.0" rx="5.7" ry="2.0" fill="#6a5a48" transform="rotate(142 276.8 174.0)"/><ellipse cx="268.2" cy="93.6" rx="4.2" ry="4.5" fill="#a08a70" transform="rotate(19 268.2 93.6)"/><ellipse cx="271.8" cy="151.1" rx="4.5" ry="3.8" fill="#c8b8a0" transform="rotate(1 271.8 151.1)"/><ellipse cx="262.7" cy="105.9" rx="2.7" ry="4.0" fill="#9a8468" transform="rotate(53 262.7 105.9)"/><ellipse cx="235.6" cy="150.0" rx="2.8" ry="3.7" fill="#6a5a48" transform="rotate(156 235.6 150.0)"/><ellipse cx="288.5" cy="139.6" rx="3.4" ry="2.4" fill="#c8b8a0" transform="rotate(61 288.5 139.6)"/><ellipse cx="280.7" cy="169.8" rx="2.4" ry="3.5" fill="#5a5040" transform="rotate(79 280.7 169.8)"/><ellipse cx="275.3" cy="99.8" rx="4.4" ry="5.9" fill="#7a6a58" transform="rotate(1 275.3 99.8)"/><ellipse cx="232.9" cy="89.4" rx="4.7" ry="5.1" fill="#7a6a58" transform="rotate(133 232.9 89.4)"/><ellipse cx="251.9" cy="183.4" rx="5.7" ry="4.3" fill="#7a6a58" transform="rotate(20 251.9 183.4)"/><ellipse cx="284.6" cy="168.7" rx="4.9" ry="2.1" fill="#c8b8a0" transform="rotate(34 284.6 168.7)"/><ellipse cx="280.7" cy="128.1" rx="5.5" ry="2.7" fill="#5a5040" transform="rotate(113 280.7 128.1)"/><ellipse cx="243.8" cy="98.4" rx="5.2" ry="5.4" fill="#6a5a48" transform="rotate(83 243.8 98.4)"/><ellipse cx="251.7" cy="101.2" rx="2.7" ry="5.8" fill="#c8b8a0" transform="rotate(121 251.7 101.2)"/><ellipse cx="275.3" cy="168.7" rx="6.0" ry="5.0" fill="#5a5040" transform="rotate(63 275.3 168.7)"/><ellipse cx="228.8" cy="138.8" rx="3.4" ry="4.2" fill="#5a5040" transform="rotate(84 228.8 138.8)"/><ellipse cx="228.1" cy="162.1" rx="3.0" ry="3.4" fill="#6a5a48" transform="rotate(136 228.1 162.1)"/><ellipse cx="238.0" cy="88.5" rx="5.4" ry="3.7" fill="#5a5040" transform="rotate(93 238.0 88.5)"/><ellipse cx="232.0" cy="97.2" rx="3.8" ry="2.8" fill="#6a5a48" transform="rotate(166 232.0 97.2)"/><ellipse cx="269.1" cy="109.5" rx="5.7" ry="5.7" fill="#a08a70" transform="rotate(176 269.1 109.5)"/><ellipse cx="276.1" cy="148.1" rx="4.6" ry="2.9" fill="#6a5a48" transform="rotate(66 276.1 148.1)"/><ellipse cx="254.7" cy="96.8" rx="5.8" ry="4.4" fill="#a08a70" transform="rotate(175 254.7 96.8)"/><ellipse cx="238.3" cy="179.8" rx="3.1" ry="3.6" fill="#5a5040" transform="rotate(65 238.3 179.8)"/><ellipse cx="287.6" cy="94.2" rx="5.5" ry="4.6" fill="#a08a70" transform="rotate(167 287.6 94.2)"/><ellipse cx="267.9" cy="144.1" rx="4.6" ry="4.4" fill="#c8b8a0" transform="rotate(100 267.9 144.1)"/><ellipse cx="246.8" cy="91.4" rx="2.3" ry="2.1" fill="#5a5040" transform="rotate(19 246.8 91.4)"/><ellipse cx="236.8" cy="96.3" rx="4.0" ry="5.9" fill="#c8b8a0" transform="rotate(70 236.8 96.3)"/><ellipse cx="285.1" cy="130.0" rx="5.6" ry="3.0" fill="#9a8468" transform="rotate(104 285.1 130.0)"/><ellipse cx="271.2" cy="102.3" rx="6.0" ry="5.5" fill="#9a8468" transform="rotate(87 271.2 102.3)"/><ellipse cx="248.0" cy="105.6" rx="3.6" ry="5.1" fill="#6a5a48" transform="rotate(53 248.0 105.6)"/><ellipse cx="277.8" cy="152.1" rx="3.1" ry="2.0" fill="#7a6a58" transform="rotate(18 277.8 152.1)"/><ellipse cx="284.1" cy="100.8" rx="4.6" ry="4.3" fill="#c8b8a0" transform="rotate(67 284.1 100.8)"/><ellipse cx="239.2" cy="99.4" rx="2.4" ry="5.9" fill="#9a8468" transform="rotate(65 239.2 99.4)"/><ellipse cx="268.4" cy="142.0" rx="2.9" ry="2.3" fill="#6a5a48" transform="rotate(68 268.4 142.0)"/><ellipse cx="280.9" cy="98.0" rx="5.9" ry="3.5" fill="#c8b8a0" transform="rotate(45 280.9 98.0)"/><ellipse cx="236.6" cy="163.8" rx="3.0" ry="3.5" fill="#a08a70" transform="rotate(169 236.6 163.8)"/><ellipse cx="234.9" cy="109.8" rx="5.2" ry="3.1" fill="#9a8468" transform="rotate(7 234.9 109.8)"/><ellipse cx="241.9" cy="104.4" rx="2.9" ry="3.5" fill="#5a5040" transform="rotate(61 241.9 104.4)"/><ellipse cx="267.8" cy="132.2" rx="5.5" ry="2.2" fill="#c8b8a0" transform="rotate(96 267.8 132.2)"/><ellipse cx="279.9" cy="108.5" rx="2.1" ry="3.8" fill="#6a5a48" transform="rotate(28 279.9 108.5)"/><ellipse cx="256.5" cy="156.2" rx="2.4" ry="2.5" fill="#9a8468" transform="rotate(44 256.5 156.2)"/><ellipse cx="284.4" cy="127.6" rx="2.2" ry="2.8" fill="#5a5040" transform="rotate(92 284.4 127.6)"/><ellipse cx="255.5" cy="108.9" rx="3.4" ry="2.2" fill="#a08a70" transform="rotate(56 255.5 108.9)"/><ellipse cx="258.0" cy="106.6" rx="4.4" ry="6.0" fill="#9a8468" transform="rotate(28 258.0 106.6)"/><ellipse cx="231.7" cy="128.2" rx="2.2" ry="4.1" fill="#a08a70" transform="rotate(80 231.7 128.2)"/><ellipse cx="241.2" cy="93.3" rx="3.1" ry="5.7" fill="#9a8468" transform="rotate(33 241.2 93.3)"/><ellipse cx="232.6" cy="130.3" rx="3.3" ry="2.8" fill="#c8b8a0" transform="rotate(92 232.6 130.3)"/><ellipse cx="232.2" cy="155.3" rx="3.9" ry="3.0" fill="#a08a70" transform="rotate(2 232.2 155.3)"/><ellipse cx="266.9" cy="166.2" rx="5.6" ry="4.6" fill="#c8b8a0" transform="rotate(8 266.9 166.2)"/><ellipse cx="261.3" cy="108.4" rx="4.0" ry="4.4" fill="#c8b8a0" transform="rotate(93 261.3 108.4)"/><ellipse cx="237.0" cy="165.4" rx="5.8" ry="5.0" fill="#5a5040" transform="rotate(168 237.0 165.4)"/><ellipse cx="284.0" cy="103.2" rx="2.9" ry="4.4" fill="#c8b8a0" transform="rotate(20 284.0 103.2)"/><ellipse cx="255.9" cy="170.0" rx="3.1" ry="5.9" fill="#7a6a58" transform="rotate(77 255.9 170.0)"/><ellipse cx="274.4" cy="143.3" rx="5.8" ry="3.6" fill="#c8b8a0" transform="rotate(42 274.4 143.3)"/><ellipse cx="228.8" cy="179.8" rx="2.9" ry="3.9" fill="#a08a70" transform="rotate(125 228.8 179.8)"/><ellipse cx="269.7" cy="106.2" rx="5.6" ry="2.8" fill="#9a8468" transform="rotate(51 269.7 106.2)"/><ellipse cx="247.2" cy="163.4" rx="3.1" ry="5.9" fill="#5a5040" transform="rotate(8 247.2 163.4)"/><ellipse cx="253.2" cy="119.3" rx="4.7" ry="2.1" fill="#5a5040" transform="rotate(41 253.2 119.3)"/><ellipse cx="242.8" cy="168.7" rx="2.6" ry="5.2" fill="#a08a70" transform="rotate(116 242.8 168.7)"/><ellipse cx="257.5" cy="139.8" rx="3.5" ry="3.0" fill="#a08a70" transform="rotate(30 257.5 139.8)"/><ellipse cx="245.0" cy="126.6" rx="5.6" ry="6.0" fill="#7a6a58" transform="rotate(148 245.0 126.6)"/><ellipse cx="247.9" cy="160.3" rx="2.7" ry="3.7" fill="#6a5a48" transform="rotate(149 247.9 160.3)"/><ellipse cx="278.8" cy="164.0" rx="3.0" ry="4.3" fill="#7a6a58" transform="rotate(38 278.8 164.0)"/><ellipse cx="287.3" cy="111.9" rx="5.8" ry="3.6" fill="#6a5a48" transform="rotate(111 287.3 111.9)"/><ellipse cx="284.7" cy="95.4" rx="2.1" ry="3.2" fill="#5a5040" transform="rotate(44 284.7 95.4)"/><ellipse cx="282.0" cy="127.0" rx="4.1" ry="5.4" fill="#c8b8a0" transform="rotate(167 282.0 127.0)"/><ellipse cx="271.8" cy="143.3" rx="3.8" ry="4.0" fill="#a08a70" transform="rotate(150 271.8 143.3)"/><ellipse cx="270.1" cy="122.0" rx="4.1" ry="4.2" fill="#9a8468" transform="rotate(19 270.1 122.0)"/><ellipse cx="264.7" cy="110.3" rx="3.5" ry="5.4" fill="#5a5040" transform="rotate(164 264.7 110.3)"/><ellipse cx="242.7" cy="121.6" rx="4.1" ry="4.7" fill="#6a5a48" transform="rotate(179 242.7 121.6)"/><ellipse cx="274.0" cy="147.4" rx="3.9" ry="4.7" fill="#6a5a48" transform="rotate(113 274.0 147.4)"/><ellipse cx="257.5" cy="152.8" rx="4.8" ry="4.6" fill="#7a6a58" transform="rotate(119 257.5 152.8)"/><ellipse cx="287.4" cy="163.6" rx="2.9" ry="3.7" fill="#7a6a58" transform="rotate(138 287.4 163.6)"/><ellipse cx="253.4" cy="181.2" rx="5.6" ry="2.9" fill="#c8b8a0" transform="rotate(92 253.4 181.2)"/><ellipse cx="251.6" cy="134.4" rx="3.5" ry="6.0" fill="#c8b8a0" transform="rotate(55 251.6 134.4)"/><ellipse cx="282.5" cy="96.3" rx="4.0" ry="5.5" fill="#a08a70" transform="rotate(107 282.5 96.3)"/><ellipse cx="268.1" cy="132.0" rx="3.8" ry="3.3" fill="#a08a70" transform="rotate(91 268.1 132.0)"/><ellipse cx="249.4" cy="160.8" rx="3.3" ry="5.2" fill="#c8b8a0" transform="rotate(4 249.4 160.8)"/><ellipse cx="269.9" cy="163.1" rx="3.6" ry="2.5" fill="#c8b8a0" transform="rotate(74 269.9 163.1)"/><ellipse cx="279.8" cy="149.2" rx="4.5" ry="4.8" fill="#7a6a58" transform="rotate(94 279.8 149.2)"/><ellipse cx="275.5" cy="115.1" rx="3.0" ry="5.3" fill="#a08a70" transform="rotate(116 275.5 115.1)"/><ellipse cx="280.7" cy="172.5" rx="4.4" ry="2.8" fill="#6a5a48" transform="rotate(152 280.7 172.5)"/><ellipse cx="261.2" cy="157.6" rx="3.1" ry="2.3" fill="#6a5a48" transform="rotate(44 261.2 157.6)"/><ellipse cx="233.3" cy="109.9" rx="2.7" ry="2.7" fill="#c8b8a0" transform="rotate(60 233.3 109.9)"/><ellipse cx="229.2" cy="96.4" rx="5.7" ry="5.9" fill="#7a6a58" transform="rotate(120 229.2 96.4)"/><ellipse cx="248.8" cy="137.2" rx="3.3" ry="3.7" fill="#9a8468" transform="rotate(66 248.8 137.2)"/><ellipse cx="248.6" cy="177.7" rx="3.1" ry="3.1" fill="#6a5a48" transform="rotate(159 248.6 177.7)"/><ellipse cx="231.2" cy="182.4" rx="2.5" ry="5.5" fill="#5a5040" transform="rotate(87 231.2 182.4)"/><ellipse cx="259.1" cy="99.1" rx="4.4" ry="6.0" fill="#6a5a48" transform="rotate(39 259.1 99.1)"/><ellipse cx="280.0" cy="127.3" rx="3.2" ry="2.1" fill="#5a5040" transform="rotate(18 280.0 127.3)"/><ellipse cx="277.7" cy="94.4" rx="4.3" ry="2.8" fill="#c8b8a0" transform="rotate(115 277.7 94.4)"/></g>
</g>
<g filter="url(#bl1)" opacity="0.5"><path d="M52 14V145M72 14V145M100 14V140M150 14V140M176 14V140M248 14V180M266 14V180" stroke="#6a5a48" stroke-width="2"/></g>
<g filter="url(#bl4)">
<ellipse cx="100" cy="115" rx="30" ry="35" fill="#ffffff" opacity="0.95"/>
<ellipse cx="30" cy="90" rx="28" ry="30" fill="#e8e4d8" opacity="0.35"/>
<ellipse cx="265" cy="70" rx="20" ry="18" fill="#f4f4ee" opacity="0.5"/>
</g>
<g filter="url(#bl1)">
<rect x="126" y="12" width="14" height="128" fill="#e0e4e0"/>
<rect x="216" y="25" width="12" height="65" fill="#eef0f0"/>
<rect x="216" y="88" width="12" height="52" fill="#5a6058"/>
<rect x="290" y="0" width="30" height="180" fill="#6a4530"/>
<rect x="294" y="0" width="26" height="30" fill="#2a2622"/>
<rect x="290" y="30" width="30" height="3" fill="#a06a48"/>
<rect x="294" y="38" width="26" height="25" fill="#3a3430"/>
<rect x="305" y="50" width="14" height="8" fill="#d8d8d0"/>
<rect x="290" y="64" width="30" height="3" fill="#a06a48"/>
<rect x="282" y="75" width="20" height="25" fill="#1a1c1c"/>
<rect x="305" y="72" width="6" height="28" fill="#e8e8e8"/>
<rect x="290" y="100" width="30" height="3" fill="#a06a48"/>
<rect x="285" y="112" width="35" height="6" fill="#6a6a64"/>
<rect x="280" y="125" width="40" height="5" fill="#c8c0b0"/>
<rect x="280" y="133" width="40" height="47" fill="#c8c8c8"/>
<rect x="281" y="138" width="5" height="40" fill="#d04020"/>
<rect x="287" y="138" width="4" height="40" fill="#e8a030"/>
<rect x="294" y="140" width="4" height="40" fill="#3a3a3a"/>
<rect x="302" y="138" width="6" height="42" fill="#8a9aa8"/>
<rect x="310" y="142" width="10" height="38" fill="#e8e8e8"/>
<rect x="0" y="140" width="112" height="40" fill="#7a7a74"/>
<rect x="0" y="140" width="95" height="5" fill="#d8d8d4"/>
<rect x="0" y="148" width="112" height="32" fill="#4a4a46"/>
<rect x="30" y="145" width="80" height="6" fill="#b0a070" transform="rotate(-10 70 148)"/>
<rect x="50" y="118" width="10" height="25" fill="#3a78c8"/>
<rect x="60" y="125" width="8" height="15" fill="#506a40"/>
<rect x="62" y="136" width="10" height="10" fill="#e8e8e0"/>
<rect x="192" y="128" width="56" height="28" fill="#e8eaec"/>
<rect x="240" y="140" width="45" height="14" fill="#e4e4e4"/>
<rect x="130" y="138" width="20" height="22" fill="#2a2c2c"/>
</g>
<g filter="url(#bl09)">
<path d="M96 180Q102 150 135 144L158 138L192 136Q240 136 262 152Q276 165 286 180Z" fill="#161c20"/>
<path d="M150 140L166 166L178 158L190 140Z" fill="#c4d0d8"/>
<path d="M162 148L170 168L176 148Z" fill="#1c2428"/>
<defs><linearGradient id="facg" x1="0" y1="0" x2="1" y2="1"><stop offset="0" stop-color="#b49c8c"/><stop offset="0.5" stop-color="#866c5e"/><stop offset="1" stop-color="#5a463c"/></linearGradient></defs><path d="M150 68Q145 100 152 122Q160 148 172 148Q186 146 193 122Q200 96 196 70Q186 60 172 60Q156 60 150 68Z" fill="url(#facg)"/>
<path d="M152 70Q170 58 195 72Q198 90 190 95Q175 88 152 95Q148 85 152 70Z" fill="#b8a090" opacity="0.7"/>
<path d="M160 112Q172 106 186 112L184 117Q172 114 160 117Z" fill="#4e3a30" opacity="0.8"/>
<path d="M166 95L164 110Q172 113 180 110L176 95Z" fill="#9a7c6c" opacity="0.7"/>
<path d="M145 66Q148 44 172 46Q200 48 204 68Q204 80 198 76Q188 60 172 62Q154 64 152 84Q144 78 145 66Z" fill="#2a221e"/>
<path d="M138 110Q134 68 168 58Q202 56 208 96L206 110" stroke="#141414" stroke-width="3.5" fill="none"/>
<rect x="136" y="86" width="11" height="30" rx="4" fill="#161616"/>
<rect x="197" y="84" width="12" height="33" rx="4" fill="#161616"/>
<path d="M205 112Q210 128 196 140" stroke="#111" stroke-width="1.5" fill="none"/>
<path d="M152 100H168M176 100H194" stroke="#d0c8c0" stroke-width="0.9" fill="none"/>
<ellipse cx="160" cy="101" rx="7" ry="5" fill="none" stroke="#c8c0b8" stroke-width="0.7"/>
<ellipse cx="184" cy="101" rx="7" ry="5" fill="none" stroke="#c8c0b8" stroke-width="0.7"/>
</g>
</g>
</svg>
<div class="t" style="left:1604px;top:155.3px;font-size:15px;font-weight:bold;color:#ffffff;text-shadow:0 0 2px rgba(0,0,0,0.6)">Ethan McGory</div>

</body></html>
